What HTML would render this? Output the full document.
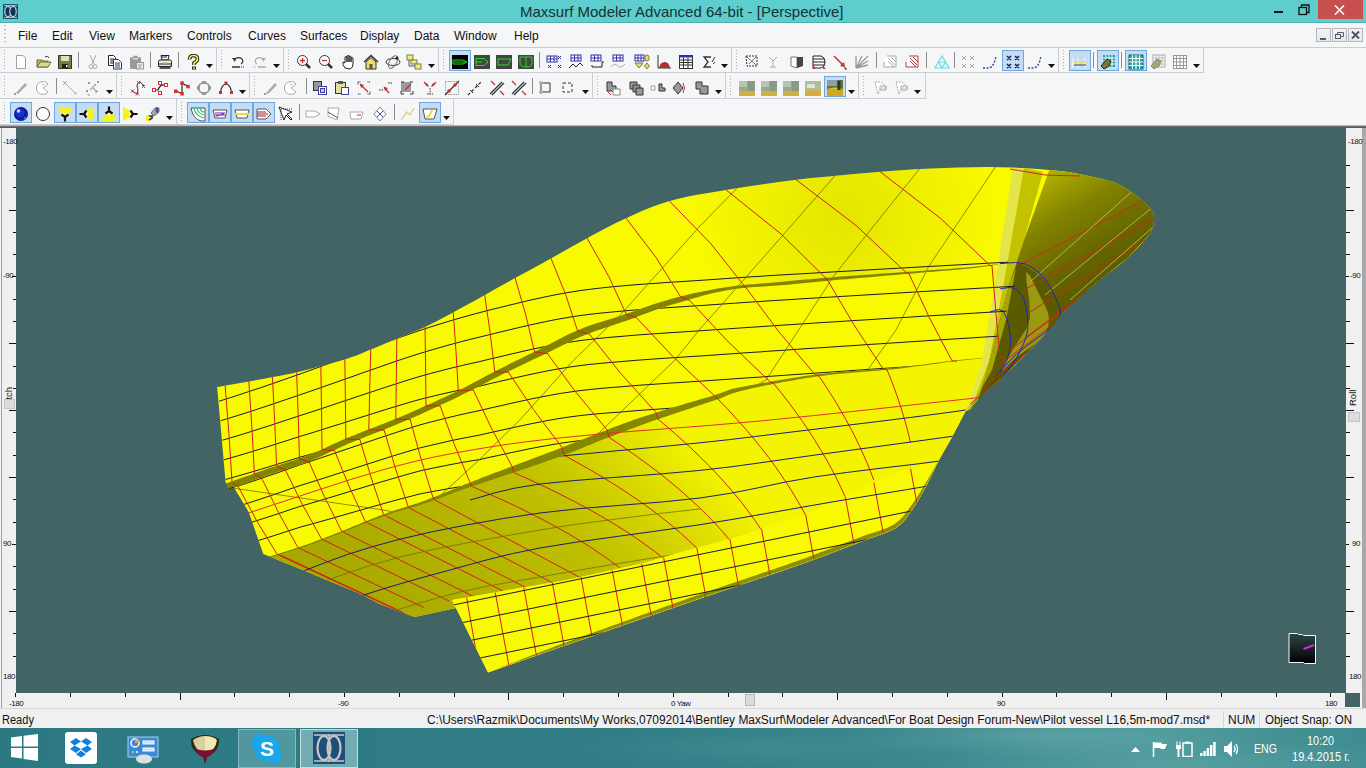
<!DOCTYPE html><html><head><meta charset="utf-8"><title>Maxsurf</title><style>
*{margin:0;padding:0;box-sizing:border-box}
html,body{width:1366px;height:768px;overflow:hidden;background:#f3f4f5;font-family:"Liberation Sans",sans-serif;}
.a{position:absolute}
.t{position:absolute;white-space:nowrap;line-height:1}
</style></head><body>
<div class="a" style="left:0;top:0;width:1366px;height:22px;background:#5dcdcd"></div>
<div class="a" style="left:0;top:22px;width:1366px;height:1px;background:#4fb0b0"></div>
<svg class="a" style="left:3px;top:4px" width="15" height="15" viewBox="0 0 15 15">
<rect x="0" y="0" width="15" height="15" fill="#1e4f73"/>
<ellipse cx="5" cy="7.5" rx="3.2" ry="5.2" fill="#0b3558" stroke="#c8d2d8" stroke-width="1.2"/>
<ellipse cx="10" cy="7.5" rx="3.2" ry="5.2" fill="#0b3558" stroke="#c8d2d8" stroke-width="1.2"/>
<path d="M1 1.5 L14 1.5 M1 13.5 L14 13.5" stroke="#c8d2d8" stroke-width="0.8"/>
</svg>
<div class="t" style="left:520px;top:4px;font-size:15px;color:#163232">Maxsurf Modeler Advanced 64-bit - [Perspective]</div>
<div class="a" style="left:1274px;top:11px;width:9px;height:2px;background:#111"></div>
<svg class="a" style="left:1298px;top:4px" width="12" height="12" viewBox="0 0 12 12"><rect x="1" y="3.5" width="7.5" height="7" fill="none" stroke="#111" stroke-width="1.3"/><path d="M3.5 3.5 V1 H11 V8.5 H8.5" fill="none" stroke="#111" stroke-width="1.3"/></svg>
<div class="a" style="left:1318px;top:0;width:45px;height:19px;background:#c7504e"></div>
<svg class="a" style="left:1334px;top:5px" width="11" height="10" viewBox="0 0 11 10"><path d="M1 0.5 L10 9.5 M10 0.5 L1 9.5" stroke="#fff" stroke-width="1.6"/></svg>
<div class="a" style="left:0;top:23px;width:1366px;height:24px;background:#f5f6f7"></div>
<div class="a" style="left:4px;top:25px;width:2px;height:20px;background:repeating-linear-gradient(#b5b7b9 0 1px,transparent 1px 4px)"></div>
<div class="t" style="left:18px;top:30px;font-size:12px;color:#111">File</div>
<div class="t" style="left:52px;top:30px;font-size:12px;color:#111">Edit</div>
<div class="t" style="left:89px;top:30px;font-size:12px;color:#111">View</div>
<div class="t" style="left:129px;top:30px;font-size:12px;color:#111">Markers</div>
<div class="t" style="left:187px;top:30px;font-size:12px;color:#111">Controls</div>
<div class="t" style="left:248px;top:30px;font-size:12px;color:#111">Curves</div>
<div class="t" style="left:300px;top:30px;font-size:12px;color:#111">Surfaces</div>
<div class="t" style="left:360px;top:30px;font-size:12px;color:#111">Display</div>
<div class="t" style="left:414px;top:30px;font-size:12px;color:#111">Data</div>
<div class="t" style="left:454px;top:30px;font-size:12px;color:#111">Window</div>
<div class="t" style="left:514px;top:30px;font-size:12px;color:#111">Help</div>
<div class="a" style="left:1316px;top:28px;width:15px;height:14px;border:1px solid #b4b8bc;background:linear-gradient(#f0f4f8,#e2e9f0)"></div>
<div class="a" style="left:1332px;top:28px;width:15px;height:14px;border:1px solid #b4b8bc;background:linear-gradient(#f0f4f8,#e2e9f0)"></div>
<div class="a" style="left:1348px;top:28px;width:15px;height:14px;border:1px solid #b4b8bc;background:linear-gradient(#f0f4f8,#e2e9f0)"></div>
<div class="a" style="left:1320px;top:38px;width:6px;height:2px;background:#555c66"></div>
<svg class="a" style="left:1335px;top:31px" width="9" height="9" viewBox="0 0 9 9"><rect x="0.5" y="3.5" width="5" height="4" fill="none" stroke="#555c66"/><path d="M2.5 3.5V1.5H8.5V5.5H5.5" fill="none" stroke="#555c66"/></svg>
<svg class="a" style="left:1351px;top:31px" width="9" height="8" viewBox="0 0 9 8"><path d="M1 0.5 L8 7.5 M8 0.5 L1 7.5" stroke="#4a525c" stroke-width="1.9"/></svg>
<div class="a" style="left:0;top:47px;width:1366px;height:1px;background:#c9cbcd"></div>
<div class="a" style="left:0;top:48px;width:1366px;height:77px;background:#f5f6f7"></div>
<div class="a" style="left:0px;top:72px;width:217px;height:1px;background:#cbcdd0"></div>
<div class="a" style="left:216px;top:47px;width:1px;height:26px;background:#cbcdd0"></div>
<div class="a" style="left:4px;top:50px;width:2px;height:21px;background:repeating-linear-gradient(#a9abae 0 1px,transparent 1px 3px);width:1px"></div>
<div class="a" style="left:217px;top:72px;width:67px;height:1px;background:#cbcdd0"></div>
<div class="a" style="left:283px;top:47px;width:1px;height:26px;background:#cbcdd0"></div>
<div class="a" style="left:221px;top:50px;width:2px;height:21px;background:repeating-linear-gradient(#a9abae 0 1px,transparent 1px 3px);width:1px"></div>
<div class="a" style="left:284px;top:72px;width:155px;height:1px;background:#cbcdd0"></div>
<div class="a" style="left:438px;top:47px;width:1px;height:26px;background:#cbcdd0"></div>
<div class="a" style="left:288px;top:50px;width:2px;height:21px;background:repeating-linear-gradient(#a9abae 0 1px,transparent 1px 3px);width:1px"></div>
<div class="a" style="left:439px;top:72px;width:293px;height:1px;background:#cbcdd0"></div>
<div class="a" style="left:731px;top:47px;width:1px;height:26px;background:#cbcdd0"></div>
<div class="a" style="left:443px;top:50px;width:2px;height:21px;background:repeating-linear-gradient(#a9abae 0 1px,transparent 1px 3px);width:1px"></div>
<div class="a" style="left:732px;top:72px;width:327px;height:1px;background:#cbcdd0"></div>
<div class="a" style="left:1058px;top:47px;width:1px;height:26px;background:#cbcdd0"></div>
<div class="a" style="left:736px;top:50px;width:2px;height:21px;background:repeating-linear-gradient(#a9abae 0 1px,transparent 1px 3px);width:1px"></div>
<div class="a" style="left:1059px;top:72px;width:145px;height:1px;background:#cbcdd0"></div>
<div class="a" style="left:1203px;top:47px;width:1px;height:26px;background:#cbcdd0"></div>
<div class="a" style="left:1063px;top:50px;width:2px;height:21px;background:repeating-linear-gradient(#a9abae 0 1px,transparent 1px 3px);width:1px"></div>
<div class="a" style="left:78px;top:52px;width:1px;height:16px;background:#8a8c8e"></div>
<div class="a" style="left:150px;top:52px;width:1px;height:16px;background:#8a8c8e"></div>
<div class="a" style="left:178px;top:52px;width:1px;height:16px;background:#8a8c8e"></div>
<div class="a" style="left:539px;top:52px;width:1px;height:16px;background:#8a8c8e"></div>
<div class="a" style="left:876px;top:52px;width:1px;height:16px;background:#8a8c8e"></div>
<div class="a" style="left:926px;top:52px;width:1px;height:16px;background:#8a8c8e"></div>
<div class="a" style="left:954px;top:52px;width:1px;height:16px;background:#8a8c8e"></div>
<div class="a" style="left:1093px;top:52px;width:1px;height:16px;background:#8a8c8e"></div>
<div class="a" style="left:1121px;top:52px;width:1px;height:16px;background:#8a8c8e"></div>
<div class="a" style="left:449px;top:50px;width:22px;height:21px;background:#c5dcf3;border:1px solid #6fa8e0"></div>
<div class="a" style="left:1002px;top:50px;width:22px;height:21px;background:#c5dcf3;border:1px solid #6fa8e0"></div>
<div class="a" style="left:1069px;top:50px;width:22px;height:21px;background:#c5dcf3;border:1px solid #6fa8e0"></div>
<div class="a" style="left:1097px;top:50px;width:22px;height:21px;background:#c5dcf3;border:1px solid #6fa8e0"></div>
<div class="a" style="left:1125px;top:50px;width:22px;height:21px;background:#c5dcf3;border:1px solid #6fa8e0"></div>
<svg class="a" style="left:206px;top:64px" width="7" height="4" viewBox="0 0 7 4"><path d="M0 0H7L3.5 4Z" fill="#111"/></svg>
<svg class="a" style="left:273px;top:64px" width="7" height="4" viewBox="0 0 7 4"><path d="M0 0H7L3.5 4Z" fill="#111"/></svg>
<svg class="a" style="left:428px;top:64px" width="7" height="4" viewBox="0 0 7 4"><path d="M0 0H7L3.5 4Z" fill="#111"/></svg>
<svg class="a" style="left:721px;top:64px" width="7" height="4" viewBox="0 0 7 4"><path d="M0 0H7L3.5 4Z" fill="#111"/></svg>
<svg class="a" style="left:1048px;top:64px" width="7" height="4" viewBox="0 0 7 4"><path d="M0 0H7L3.5 4Z" fill="#111"/></svg>
<svg class="a" style="left:1193px;top:64px" width="7" height="4" viewBox="0 0 7 4"><path d="M0 0H7L3.5 4Z" fill="#111"/></svg>
<div class="a" style="left:0px;top:98px;width:117px;height:1px;background:#cbcdd0"></div>
<div class="a" style="left:116px;top:73px;width:1px;height:26px;background:#cbcdd0"></div>
<div class="a" style="left:4px;top:76px;width:2px;height:21px;background:repeating-linear-gradient(#a9abae 0 1px,transparent 1px 3px);width:1px"></div>
<div class="a" style="left:117px;top:98px;width:133px;height:1px;background:#cbcdd0"></div>
<div class="a" style="left:249px;top:73px;width:1px;height:26px;background:#cbcdd0"></div>
<div class="a" style="left:121px;top:76px;width:2px;height:21px;background:repeating-linear-gradient(#a9abae 0 1px,transparent 1px 3px);width:1px"></div>
<div class="a" style="left:250px;top:98px;width:343px;height:1px;background:#cbcdd0"></div>
<div class="a" style="left:592px;top:73px;width:1px;height:26px;background:#cbcdd0"></div>
<div class="a" style="left:254px;top:76px;width:2px;height:21px;background:repeating-linear-gradient(#a9abae 0 1px,transparent 1px 3px);width:1px"></div>
<div class="a" style="left:593px;top:98px;width:133px;height:1px;background:#cbcdd0"></div>
<div class="a" style="left:725px;top:73px;width:1px;height:26px;background:#cbcdd0"></div>
<div class="a" style="left:597px;top:76px;width:2px;height:21px;background:repeating-linear-gradient(#a9abae 0 1px,transparent 1px 3px);width:1px"></div>
<div class="a" style="left:726px;top:98px;width:133px;height:1px;background:#cbcdd0"></div>
<div class="a" style="left:858px;top:73px;width:1px;height:26px;background:#cbcdd0"></div>
<div class="a" style="left:730px;top:76px;width:2px;height:21px;background:repeating-linear-gradient(#a9abae 0 1px,transparent 1px 3px);width:1px"></div>
<div class="a" style="left:859px;top:98px;width:67px;height:1px;background:#cbcdd0"></div>
<div class="a" style="left:925px;top:73px;width:1px;height:26px;background:#cbcdd0"></div>
<div class="a" style="left:863px;top:76px;width:2px;height:21px;background:repeating-linear-gradient(#a9abae 0 1px,transparent 1px 3px);width:1px"></div>
<div class="a" style="left:56px;top:78px;width:1px;height:16px;background:#8a8c8e"></div>
<div class="a" style="left:306px;top:78px;width:1px;height:16px;background:#8a8c8e"></div>
<div class="a" style="left:532px;top:78px;width:1px;height:16px;background:#8a8c8e"></div>
<div class="a" style="left:824px;top:76px;width:22px;height:21px;background:#c5dcf3;border:1px solid #6fa8e0"></div>
<svg class="a" style="left:106px;top:90px" width="7" height="4" viewBox="0 0 7 4"><path d="M0 0H7L3.5 4Z" fill="#111"/></svg>
<svg class="a" style="left:239px;top:90px" width="7" height="4" viewBox="0 0 7 4"><path d="M0 0H7L3.5 4Z" fill="#111"/></svg>
<svg class="a" style="left:582px;top:90px" width="7" height="4" viewBox="0 0 7 4"><path d="M0 0H7L3.5 4Z" fill="#111"/></svg>
<svg class="a" style="left:715px;top:90px" width="7" height="4" viewBox="0 0 7 4"><path d="M0 0H7L3.5 4Z" fill="#111"/></svg>
<svg class="a" style="left:848px;top:90px" width="7" height="4" viewBox="0 0 7 4"><path d="M0 0H7L3.5 4Z" fill="#111"/></svg>
<svg class="a" style="left:914px;top:90px" width="7" height="4" viewBox="0 0 7 4"><path d="M0 0H7L3.5 4Z" fill="#111"/></svg>
<div class="a" style="left:0px;top:124px;width:177px;height:1px;background:#cbcdd0"></div>
<div class="a" style="left:176px;top:99px;width:1px;height:26px;background:#cbcdd0"></div>
<div class="a" style="left:4px;top:102px;width:2px;height:21px;background:repeating-linear-gradient(#a9abae 0 1px,transparent 1px 3px);width:1px"></div>
<div class="a" style="left:177px;top:124px;width:277px;height:1px;background:#cbcdd0"></div>
<div class="a" style="left:453px;top:99px;width:1px;height:26px;background:#cbcdd0"></div>
<div class="a" style="left:181px;top:102px;width:2px;height:21px;background:repeating-linear-gradient(#a9abae 0 1px,transparent 1px 3px);width:1px"></div>
<div class="a" style="left:299px;top:104px;width:1px;height:16px;background:#8a8c8e"></div>
<div class="a" style="left:394px;top:104px;width:1px;height:16px;background:#8a8c8e"></div>
<div class="a" style="left:10px;top:102px;width:22px;height:21px;background:#c5dcf3;border:1px solid #6fa8e0"></div>
<div class="a" style="left:54px;top:102px;width:22px;height:21px;background:#c5dcf3;border:1px solid #6fa8e0"></div>
<div class="a" style="left:76px;top:102px;width:22px;height:21px;background:#c5dcf3;border:1px solid #6fa8e0"></div>
<div class="a" style="left:98px;top:102px;width:22px;height:21px;background:#c5dcf3;border:1px solid #6fa8e0"></div>
<div class="a" style="left:187px;top:102px;width:22px;height:21px;background:#c5dcf3;border:1px solid #6fa8e0"></div>
<div class="a" style="left:209px;top:102px;width:22px;height:21px;background:#c5dcf3;border:1px solid #6fa8e0"></div>
<div class="a" style="left:231px;top:102px;width:22px;height:21px;background:#c5dcf3;border:1px solid #6fa8e0"></div>
<div class="a" style="left:253px;top:102px;width:22px;height:21px;background:#c5dcf3;border:1px solid #6fa8e0"></div>
<div class="a" style="left:419px;top:102px;width:22px;height:21px;background:#c5dcf3;border:1px solid #6fa8e0"></div>
<svg class="a" style="left:166px;top:116px" width="7" height="4" viewBox="0 0 7 4"><path d="M0 0H7L3.5 4Z" fill="#111"/></svg>
<svg class="a" style="left:443px;top:116px" width="7" height="4" viewBox="0 0 7 4"><path d="M0 0H7L3.5 4Z" fill="#111"/></svg>
<svg class="a" style="left:13px;top:54px" width="16" height="16" viewBox="0 0 16 16"><path d="M3.5 1.5H10L12.5 4V14.5H3.5Z" fill="#fff" stroke="#a0a0a0"/></svg>
<svg class="a" style="left:36px;top:54px" width="16" height="16" viewBox="0 0 16 16"><path d="M1 6H6L7 7H12V13H1Z" fill="#c8c070" stroke="#6a6a30"/><path d="M1 13L4 8H15L12 13Z" fill="#dcd890" stroke="#6a6a30"/><path d="M9 3Q12 1 13 4" fill="none" stroke="#333"/></svg>
<svg class="a" style="left:57px;top:54px" width="16" height="16" viewBox="0 0 16 16"><rect x="1.5" y="1.5" width="13" height="13" fill="#7a7a40" stroke="#3a3a20"/><rect x="4" y="2" width="8" height="5" fill="#e0e0c0"/><rect x="5" y="10" width="6" height="4" fill="#222"/><rect x="9" y="11" width="1.5" height="2" fill="#fff"/></svg>
<svg class="a" style="left:85px;top:54px" width="16" height="16" viewBox="0 0 16 16"><path d="M5 1L9 10M11 1L7 10" stroke="#aaa" fill="none"/><circle cx="6" cy="12.5" r="2" fill="none" stroke="#aaa"/><circle cx="10" cy="12.5" r="2" fill="none" stroke="#aaa"/></svg>
<svg class="a" style="left:107px;top:54px" width="16" height="16" viewBox="0 0 16 16"><path d="M1.5 1.5H6.5L8.5 3.5V11.5H1.5Z" fill="#fff" stroke="#222"/><path d="M3 5H7M3 7H7M3 9H7" stroke="#222"/><path d="M6.5 5.5H11.5L14.5 8.5V15H6.5Z" fill="#fff" stroke="#34347a"/><path d="M8 9H13M8 11H13M8 13H13" stroke="#34347a"/></svg>
<svg class="a" style="left:129px;top:54px" width="16" height="16" viewBox="0 0 16 16"><rect x="1" y="3" width="11" height="12" rx="1.5" fill="#9a9a9a"/><rect x="4" y="1.5" width="5" height="3" fill="#9a9a9a" stroke="#f0f0f0" stroke-width="0.6"/><path d="M4 5H9" stroke="#e0e0e0"/><rect x="7.5" y="8.5" width="7" height="6.5" fill="#e8e8e8" stroke="#9a9a9a"/><path d="M9 11H13M9 13H12" stroke="#9a9a9a"/></svg>
<svg class="a" style="left:157px;top:54px" width="16" height="16" viewBox="0 0 16 16"><path d="M4 1.5H12L11 6H5Z" fill="#fff" stroke="#222"/><path d="M5 3H10" stroke="#222"/><path d="M1.5 7.5Q1.5 6 3 6H13Q14.5 6 14.5 7.5V12.5H1.5Z" fill="#e8e8e8" stroke="#222"/><path d="M1.5 10H14.5" stroke="#222"/><rect x="6" y="8.3" width="4" height="1.2" fill="#d0d040"/><path d="M2.5 14H13.5" stroke="#222" stroke-width="1.5"/></svg>
<svg class="a" style="left:185px;top:54px" width="16" height="16" viewBox="0 0 16 16"><path d="M4.5 5.5Q4.5 1.5 8.5 1.5Q12.5 1.5 12.5 5Q12.5 7.5 9 9V11" fill="none" stroke="#222" stroke-width="3.6"/><path d="M4.5 5.5Q4.5 1.5 8.5 1.5Q12.5 1.5 12.5 5Q12.5 7.5 9 9V11" fill="none" stroke="#f0f040" stroke-width="1.6"/><rect x="7" y="12.5" width="4" height="3" fill="#222"/><rect x="8" y="13.3" width="2" height="1.4" fill="#f0f040"/></svg>
<svg class="a" style="left:230px;top:54px" width="16" height="16" viewBox="0 0 16 16"><path d="M4 6Q8 2 12 5Q14 8 11 10" fill="none" stroke="#333" stroke-width="1.2"/><path d="M2 4L5 8L6 4Z" fill="#333"/><path d="M2 13H10" stroke="#333" stroke-width="1.5"/><path d="M11 13H15" stroke="#333" stroke-dasharray="1 1"/></svg>
<svg class="a" style="left:252px;top:54px" width="16" height="16" viewBox="0 0 16 16"><path d="M12 6Q8 2 4 5Q2 8 5 10" fill="none" stroke="#aaa" stroke-width="1.2"/><path d="M14 4L11 8L10 4Z" fill="#aaa"/><path d="M6 13H14" stroke="#aaa" stroke-width="1.5"/><path d="M1 13H5" stroke="#aaa" stroke-dasharray="1 1"/></svg>
<svg class="a" style="left:296px;top:54px" width="16" height="16" viewBox="0 0 16 16"><circle cx="6.5" cy="6.5" r="5" fill="#fff" stroke="#333"/><path d="M4 6.5H9M6.5 4V9" stroke="#c03030" stroke-width="1.3"/><path d="M10 10L14 14" stroke="#333" stroke-width="2.5"/></svg>
<svg class="a" style="left:318px;top:54px" width="16" height="16" viewBox="0 0 16 16"><circle cx="6.5" cy="6.5" r="5" fill="#fff" stroke="#333"/><path d="M4 6.5H9" stroke="#c03030" stroke-width="1.3"/><path d="M10 10L14 14" stroke="#333" stroke-width="2.5"/></svg>
<svg class="a" style="left:341px;top:54px" width="16" height="16" viewBox="0 0 16 16"><path d="M4 14Q1 10 2 8L4 9V3Q5 2 6 3V8V2Q7 1 8 2V8V2.5Q9 1.5 10 2.5V8V4Q11 3 12 4V10Q12 14 9 15Z" fill="#fff" stroke="#222"/></svg>
<svg class="a" style="left:363px;top:54px" width="16" height="16" viewBox="0 0 16 16"><path d="M1 8L8 1.5L15 8" fill="none" stroke="#333" stroke-width="1.5"/><path d="M3 8V15H13V8L8 3.5Z" fill="#f0e060" stroke="#333"/><rect x="6.5" y="10" width="3" height="5" fill="#555"/></svg>
<svg class="a" style="left:385px;top:54px" width="16" height="16" viewBox="0 0 16 16"><ellipse cx="8" cy="8" rx="7" ry="3.5" fill="none" stroke="#333"/><ellipse cx="8" cy="8" rx="3.5" ry="7" fill="none" stroke="#777" transform="rotate(30 8 8)"/><circle cx="12" cy="4" r="1.5" fill="#222"/></svg>
<svg class="a" style="left:406px;top:54px" width="16" height="16" viewBox="0 0 16 16"><rect x="1" y="1" width="6" height="5" fill="#f0f060" stroke="#777"/><rect x="5" y="6" width="6" height="4" fill="#f0f060" stroke="#777"/><rect x="9" y="10" width="6" height="5" fill="#f0f060" stroke="#777"/><path d="M3 6V12H9" fill="none" stroke="#555"/></svg>
<svg class="a" style="left:452px;top:54px" width="16" height="16" viewBox="0 0 16 16"><rect x="0" y="1" width="16" height="14" fill="#000"/><path d="M1 6H11L15 8L11 10H1Z" fill="none" stroke="#20e020"/><path d="M2 8H13" stroke="#20e020"/></svg>
<svg class="a" style="left:474px;top:54px" width="16" height="16" viewBox="0 0 16 16"><rect x="0" y="1" width="16" height="14" fill="#444"/><path d="M2 4.5H10L14 8L10 11.5H2Z" fill="none" stroke="#20e020"/><path d="M2 8H8" stroke="#20e020"/></svg>
<svg class="a" style="left:496px;top:54px" width="16" height="16" viewBox="0 0 16 16"><rect x="0" y="1" width="16" height="14" fill="#444"/><path d="M2 5H15L12 11H2Z" fill="none" stroke="#20e020"/></svg>
<svg class="a" style="left:518px;top:54px" width="16" height="16" viewBox="0 0 16 16"><rect x="0" y="1" width="16" height="14" fill="#444"/><path d="M2 3H14V9Q14 13 8 13Q2 13 2 9Z" fill="none" stroke="#20e020"/><path d="M8 3V13" stroke="#20e020"/></svg>
<svg class="a" style="left:546px;top:54px" width="16" height="16" viewBox="0 0 16 16"><rect x="1" y="2" width="10" height="6" fill="#fff" stroke="#3030a0"/><path d="M1 5H11M4.5 2V8M8 2V8" stroke="#3030a0"/><path d="M12 2L15 5M15 2L12 5M2 11L5 14M5 11L2 14M12 11L15 14M15 11L12 14" stroke="#303080"/></svg>
<svg class="a" style="left:568px;top:54px" width="16" height="16" viewBox="0 0 16 16"><rect x="3" y="1" width="10" height="6" fill="#fff" stroke="#3030a0"/><path d="M3 4H13M6.5 1V7M10 1V7" stroke="#3030a0"/><path d="M1 14L5 10L8 13L12 9L15 12" fill="none" stroke="#222"/></svg>
<svg class="a" style="left:590px;top:54px" width="16" height="16" viewBox="0 0 16 16"><rect x="1" y="1" width="10" height="6" fill="#fff" stroke="#3030a0"/><path d="M1 4H11M4.5 1V7M8 1V7" stroke="#3030a0"/><path d="M2 11V13H12V8H14" fill="none" stroke="#222"/></svg>
<svg class="a" style="left:610px;top:54px" width="16" height="16" viewBox="0 0 16 16"><rect x="3" y="1" width="10" height="6" fill="#fff" stroke="#3030a0"/><path d="M3 4H13M6.5 1V7M10 1V7" stroke="#3030a0"/><path d="M1 13Q5 8 8 12Q11 15 15 10" fill="none" stroke="#aaa"/></svg>
<svg class="a" style="left:634px;top:54px" width="16" height="16" viewBox="0 0 16 16"><rect x="1" y="1" width="9" height="6" fill="#fff" stroke="#3030a0"/><path d="M1 4H10M4 1V7M7 1V7" stroke="#3030a0"/><rect x="11" y="1" width="4" height="6" rx="2" fill="#f0e040" stroke="#777"/><path d="M1 9H9L5 14Z" fill="#f0e040" stroke="#777"/><path d="M13 9L15.5 12L13 15L10.5 12Z" fill="#f0e040" stroke="#777"/></svg>
<svg class="a" style="left:656px;top:54px" width="16" height="16" viewBox="0 0 16 16"><path d="M2 1V14H15" fill="none" stroke="#333"/><path d="M3 14Q4 8 9 8Q13 8 14 14Z" fill="#b03030"/></svg>
<svg class="a" style="left:678px;top:54px" width="16" height="16" viewBox="0 0 16 16"><rect x="1.5" y="1.5" width="13" height="13" fill="#fff" stroke="#333"/><rect x="1.5" y="1.5" width="13" height="2" fill="#3030c0"/><path d="M1.5 6H14.5M1.5 8.5H14.5M1.5 11H14.5M5.5 3.5V14.5M10 3.5V14.5" stroke="#333"/></svg>
<svg class="a" style="left:701px;top:54px" width="16" height="16" viewBox="0 0 16 16"><path d="M10 3H3L7 8L3 13H10" fill="none" stroke="#333" stroke-width="1.3"/><path d="M11 8L14 3M12 10L14 8" stroke="#333"/></svg>
<svg class="a" style="left:744px;top:54px" width="16" height="16" viewBox="0 0 16 16"><path d="M2 2H13V12H3Z" fill="none" stroke="#333" stroke-dasharray="2 1"/><path d="M3 3L12 11M5 10L12 3" stroke="#777"/></svg>
<svg class="a" style="left:767px;top:54px" width="16" height="16" viewBox="0 0 16 16"><path d="M2 3L6 7L10 3M6 7V13M3 13H9" fill="none" stroke="#aaa"/></svg>
<svg class="a" style="left:789px;top:54px" width="16" height="16" viewBox="0 0 16 16"><path d="M2 3H8V14L2 12Z" fill="#fff" stroke="#777"/><path d="M8 3H14V12L8 14Z" fill="#444"/></svg>
<svg class="a" style="left:811px;top:54px" width="16" height="16" viewBox="0 0 16 16"><path d="M2 2H10Q14 3 14 8Q14 13 10 14H2Z" fill="#fff" stroke="#222"/><path d="M2 5H13M2 8H14M2 11H13" stroke="#222"/><path d="M1 15L4 12V15ZM15 15L12 12V15Z" fill="#c03030"/></svg>
<svg class="a" style="left:832px;top:54px" width="16" height="16" viewBox="0 0 16 16"><path d="M2 2L12 12" stroke="#c03030" stroke-width="1.5"/><path d="M13 13L8 12L12 8Z" fill="#c03030"/><path d="M13 13V15H15" fill="none" stroke="#222"/></svg>
<svg class="a" style="left:854px;top:54px" width="16" height="16" viewBox="0 0 16 16"><path d="M2 14L14 2M2 14L14 7M2 14L14 11M2 14L8 2M2 14V2" stroke="#999" stroke-width="1.3"/></svg>
<svg class="a" style="left:882px;top:54px" width="16" height="16" viewBox="0 0 16 16"><path d="M5 2H14V13H2V8" fill="#fff" stroke="#aaa"/><path d="M6 4L13 11M6 7L12 13M9 3L14 8" stroke="#aaa"/></svg>
<svg class="a" style="left:904px;top:54px" width="16" height="16" viewBox="0 0 16 16"><path d="M5 2H14V13H2V8" fill="#fff" stroke="#b04040"/><path d="M6 4L13 11M6 7L12 13M9 3L14 8" stroke="#b04040"/></svg>
<svg class="a" style="left:934px;top:54px" width="16" height="16" viewBox="0 0 16 16"><path d="M8 2L15 14H1Z" fill="none" stroke="#60e0e0" stroke-width="1.2"/><path d="M4.5 8H11.5L8 14Z" fill="none" stroke="#60e0e0" stroke-width="1.2"/></svg>
<svg class="a" style="left:960px;top:54px" width="16" height="16" viewBox="0 0 16 16"><path d="M2 2L6 6M6 2L2 6M10 2L14 6M14 2L10 6M2 10L6 14M6 10L2 14M10 10L14 14M14 10L10 14" stroke="#aaa"/></svg>
<svg class="a" style="left:982px;top:54px" width="16" height="16" viewBox="0 0 16 16"><path d="M1 14H7Q12 13 14 2" fill="none" stroke="#3050a0" stroke-dasharray="2 1.5" stroke-width="1.4"/></svg>
<svg class="a" style="left:1005px;top:54px" width="16" height="16" viewBox="0 0 16 16"><path d="M2 2L6 6M6 2L2 6M10 2L14 6M14 2L10 6M2 10L6 14M6 10L2 14M10 10L14 14M14 10L10 14" stroke="#102060" stroke-width="1.5"/></svg>
<svg class="a" style="left:1027px;top:54px" width="16" height="16" viewBox="0 0 16 16"><path d="M1 14H7Q12 13 14 2" fill="none" stroke="#3050a0" stroke-dasharray="2 1.5" stroke-width="1.4"/></svg>
<svg class="a" style="left:1072px;top:54px" width="16" height="16" viewBox="0 0 16 16"><path d="M1 4V14M6 4V14M13 4V14" stroke="#fff"/><rect x="2" y="7" width="12" height="2" fill="#e0e080"/><rect x="2" y="10" width="12" height="2" fill="#9090a0"/></svg>
<svg class="a" style="left:1100px;top:54px" width="16" height="16" viewBox="0 0 16 16"><rect x="3" y="1" width="12" height="12" fill="#20a0a0"/><path d="M3 4H15M3 7H15M3 10H15M6 1V13M9 1V13M12 1V13" stroke="#fff"/><path d="M1 12L7 5L11 7L9 12L4 15Z" fill="#7a7a30" stroke="#222"/></svg>
<svg class="a" style="left:1128px;top:54px" width="16" height="16" viewBox="0 0 16 16"><rect x="1" y="1" width="14" height="14" fill="#20a0a0" stroke="#107070"/><path d="M1 4.5H15M1 8H15M1 11.5H15M4.5 1V15M8 1V15M11.5 1V15" stroke="#fff" stroke-width="1.2"/></svg>
<svg class="a" style="left:1150px;top:54px" width="16" height="16" viewBox="0 0 16 16"><rect x="3" y="1" width="12" height="12" fill="#fff" stroke="#aaa"/><path d="M3 4H15M3 7H15M3 10H15M6 1V13M9 1V13M12 1V13" stroke="#bbb"/><path d="M1 12L7 5L11 7L9 12L4 15Z" fill="#a9a570" stroke="#888"/></svg>
<svg class="a" style="left:1172px;top:54px" width="16" height="16" viewBox="0 0 16 16"><rect x="1" y="1" width="14" height="14" fill="#fff"/><path d="M1 1.5H15M1 4.5H15M1 8H15M1 11.5H15M1 14.5H15M1.5 1V15M4.5 1V15M8 1V15M11.5 1V15M14.5 1V15" stroke="#999"/></svg>
<svg class="a" style="left:13px;top:80px" width="16" height="16" viewBox="0 0 16 16"><path d="M3 13L12 3L14 5L5 14Z" fill="#aaa"/><path d="M1 15L3 13M1 13L3 15" stroke="#999"/></svg>
<svg class="a" style="left:35px;top:80px" width="16" height="16" viewBox="0 0 16 16"><path d="M13 4A6.5 6.5 0 1 0 13 12L8 8Z" fill="#fff" stroke="#aaa"/><circle cx="8" cy="4.5" r="0.8" fill="#aaa"/></svg>
<svg class="a" style="left:62px;top:80px" width="16" height="16" viewBox="0 0 16 16"><path d="M3 3L13 13M1 1L5 5M5 1L1 5" stroke="#aaa"/><path d="M12 14H14V12" fill="none" stroke="#aaa"/></svg>
<svg class="a" style="left:85px;top:80px" width="16" height="16" viewBox="0 0 16 16"><path d="M3 2L5 4M5 2L3 4M12 1L14 3M14 1L12 3M1 10L3 12M3 10L1 12" stroke="#999"/><path d="M5 10L11 4M8 8L12 12" stroke="#aaa" stroke-width="1.2"/><path d="M9 5L11 4L10 6Z" fill="#888"/><path d="M3 14V15H5M11 13V11H13" fill="none" stroke="#999"/></svg>
<svg class="a" style="left:130px;top:80px" width="16" height="16" viewBox="0 0 16 16"><path d="M2 11Q5 13 7 14Q9 10 7 6Q7 2 10 2Q13 4 14 6" fill="none" stroke="#333" stroke-width="1"/><path d="M1 9.5L4 12.5M4 9.5L1 12.5M6 12.5L9 15.5M9 12.5L6 15.5M7 1L10 4M10 1L7 4M12 5L15 8M15 5L12 8" stroke="#d03030"/></svg>
<svg class="a" style="left:152px;top:80px" width="16" height="16" viewBox="0 0 16 16"><path d="M3 10H6Q8 4 13 5" fill="none" stroke="#222" stroke-width="1.2"/><rect x="0.5" y="8.5" width="3" height="3" fill="#fff" stroke="#d03030"/><rect x="6.5" y="1.5" width="3" height="3" fill="#fff" stroke="#d03030"/><rect x="12.5" y="3.5" width="3" height="3" fill="#fff" stroke="#d03030"/><rect x="6.5" y="11.5" width="3" height="3" fill="#fff" stroke="#d03030"/></svg>
<svg class="a" style="left:174px;top:80px" width="16" height="16" viewBox="0 0 16 16"><path d="M1.5 11L8 13.5V3L14 6.5" fill="none" stroke="#222" stroke-width="1.2"/><rect x="0" y="9.5" width="3.5" height="3.5" fill="#d83030"/><rect x="6.3" y="12" width="3.5" height="3.5" fill="#d83030"/><rect x="6.3" y="1.3" width="3.5" height="3.5" fill="#d83030"/><rect x="12.3" y="4.8" width="3.5" height="3.5" fill="#d83030"/></svg>
<svg class="a" style="left:196px;top:80px" width="16" height="16" viewBox="0 0 16 16"><circle cx="8" cy="8" r="5.5" fill="none" stroke="#999" stroke-width="1.5"/><rect x="6" y="1" width="4" height="3" fill="#999"/><rect x="6" y="12" width="4" height="3" fill="#999"/><rect x="1" y="6" width="3" height="4" fill="#999"/><rect x="12" y="6" width="3" height="4" fill="#999"/></svg>
<svg class="a" style="left:218px;top:80px" width="16" height="16" viewBox="0 0 16 16"><path d="M2.5 13Q3 5 8 4Q13 5 13.5 13" fill="none" stroke="#222" stroke-width="1.2"/><rect x="6.5" y="1.5" width="3" height="3" fill="#d03030"/><rect x="1" y="11" width="3" height="3" fill="#d03030"/><rect x="12" y="11" width="3" height="3" fill="#d03030"/></svg>
<svg class="a" style="left:263px;top:80px" width="16" height="16" viewBox="0 0 16 16"><path d="M3 13L12 3L14 5L5 14Z" fill="#aaa"/><path d="M1 15L3 13M1 13L3 15" stroke="#999"/></svg>
<svg class="a" style="left:283px;top:80px" width="16" height="16" viewBox="0 0 16 16"><path d="M13 4A6.5 6.5 0 1 0 13 12L8 8Z" fill="#fff" stroke="#aaa"/><circle cx="8" cy="4.5" r="0.8" fill="#aaa"/></svg>
<svg class="a" style="left:312px;top:80px" width="16" height="16" viewBox="0 0 16 16"><rect x="1.5" y="1.5" width="8" height="9" fill="#999" stroke="#333"/><rect x="6.5" y="6.5" width="8" height="8" fill="#fff" stroke="#4040a0"/><rect x="8.5" y="8.5" width="4" height="4" fill="#ccd" stroke="#4040a0"/></svg>
<svg class="a" style="left:334px;top:80px" width="16" height="16" viewBox="0 0 16 16"><rect x="1.5" y="2.5" width="10" height="11" fill="#e0e0a0" stroke="#333"/><rect x="4" y="1" width="5" height="3" fill="#555"/><rect x="7.5" y="7.5" width="7" height="7" fill="#fff" stroke="#4040a0"/></svg>
<svg class="a" style="left:356px;top:80px" width="16" height="16" viewBox="0 0 16 16"><path d="M2 2H5M2 2V5M14 14H11M14 14V11M2 14H5M14 2H11" stroke="#333" stroke-dasharray="1.5 1"/><path d="M4 4L12 12" stroke="#c03030" stroke-width="1.2"/><path d="M4 4L8 5L5 8Z" fill="#c03030"/></svg>
<svg class="a" style="left:378px;top:80px" width="16" height="16" viewBox="0 0 16 16"><path d="M1 10H5M10 3H14" stroke="#333" stroke-dasharray="1.5 1"/><path d="M6 7L11 13" stroke="#c03030" stroke-width="1.2"/><path d="M6 7L10 8L7 11Z" fill="#c03030"/></svg>
<svg class="a" style="left:399px;top:80px" width="16" height="16" viewBox="0 0 16 16"><rect x="2" y="2" width="10" height="10" fill="#999"/><path d="M2 2H5M14 14H11M14 14V11M2 14H5M2 14V11M14 2H11" stroke="#333"/><path d="M12 4L6 10" stroke="#c03030" stroke-width="1.3"/></svg>
<svg class="a" style="left:422px;top:80px" width="16" height="16" viewBox="0 0 16 16"><path d="M2 2L6 6M14 2L10 6" stroke="#c03030" stroke-width="1.3"/><path d="M7 7L5 3L3 5ZM9 7L11 3L13 5Z" fill="#c03030"/><path d="M8 8V14M5 14H11" stroke="#333" stroke-dasharray="1.5 1"/></svg>
<svg class="a" style="left:444px;top:80px" width="16" height="16" viewBox="0 0 16 16"><rect x="1.5" y="1.5" width="13" height="13" fill="none" stroke="#999" stroke-dasharray="1.5 1"/><path d="M1 15L15 1" stroke="#333" stroke-width="1.3"/><circle cx="5" cy="11" r="1.8" fill="#d03030"/><circle cx="11" cy="5" r="1.8" fill="#d03030"/></svg>
<svg class="a" style="left:467px;top:80px" width="16" height="16" viewBox="0 0 16 16"><path d="M1 15L15 1" stroke="#333" stroke-width="1.3" stroke-dasharray="3 2"/><path d="M3 10L6 13M9 4L12 7" stroke="#333"/></svg>
<svg class="a" style="left:489px;top:80px" width="16" height="16" viewBox="0 0 16 16"><path d="M1 14L13 2M3 15L15 3" stroke="#333" stroke-width="1.3"/><path d="M2 1L6 5M15 15L11 11" stroke="#c03030" stroke-width="1.2"/></svg>
<svg class="a" style="left:511px;top:80px" width="16" height="16" viewBox="0 0 16 16"><path d="M1 14L13 2M3 15L15 3" stroke="#333" stroke-width="1.3"/><path d="M1 1L5 5M11 11L15 15" stroke="#c03030" stroke-width="1.2"/></svg>
<svg class="a" style="left:538px;top:80px" width="16" height="16" viewBox="0 0 16 16"><path d="M3 3H12V12H3Z" fill="none" stroke="#333"/><circle cx="3" cy="3" r="2" fill="#aaa"/><circle cx="3" cy="12" r="2" fill="#aaa"/></svg>
<svg class="a" style="left:560px;top:80px" width="16" height="16" viewBox="0 0 16 16"><path d="M3 3H12V12H3Z" fill="none" stroke="#333" stroke-dasharray="3 2"/></svg>
<svg class="a" style="left:605px;top:80px" width="16" height="16" viewBox="0 0 16 16"><path d="M2 2H7V6H11V11H2Z" fill="#999" stroke="#333"/><path d="M8 9H15V15H8Z" fill="#fff" stroke="#888"/><path d="M2 11L6 15" stroke="#c03030"/></svg>
<svg class="a" style="left:628px;top:80px" width="16" height="16" viewBox="0 0 16 16"><path d="M2 2H9V9H2Z" fill="#999" stroke="#333"/><path d="M5 5H12V12H5Z" fill="#999" stroke="#333"/><path d="M8 8H15V15H8Z" fill="#999" stroke="#333"/></svg>
<svg class="a" style="left:650px;top:80px" width="16" height="16" viewBox="0 0 16 16"><path d="M1 6H5V10H1Z" fill="#fff" stroke="#999"/><path d="M9 4H12V8H15V11H9Z" fill="#999" stroke="#333"/></svg>
<svg class="a" style="left:671px;top:80px" width="16" height="16" viewBox="0 0 16 16"><path d="M7 2L12 8L7 14L2 8Z" fill="#999" stroke="#333"/><path d="M12 3Q15 8 12 13" fill="none" stroke="#c03030"/></svg>
<svg class="a" style="left:694px;top:80px" width="16" height="16" viewBox="0 0 16 16"><path d="M2 2H8V6H14V14H6V9H2Z" fill="#999" stroke="#333"/></svg>
<svg class="a" style="left:739px;top:80px" width="16" height="16" viewBox="0 0 16 16"><rect x="0" y="1" width="16" height="15" fill="#9aa890"/><rect x="0" y="11" width="16" height="5" fill="#d0b040"/><rect x="9" y="1" width="7" height="10" fill="#8a9a88"/><rect x="0" y="1" width="8" height="6" fill="#b8c4b0"/></svg>
<svg class="a" style="left:761px;top:80px" width="16" height="16" viewBox="0 0 16 16"><rect x="0" y="1" width="16" height="15" fill="#9aa890"/><rect x="0" y="11" width="16" height="5" fill="#d0b040"/><rect x="9" y="1" width="7" height="10" fill="#8a9a88"/><rect x="0" y="1" width="8" height="6" fill="#b8c4b0"/></svg>
<svg class="a" style="left:783px;top:80px" width="16" height="16" viewBox="0 0 16 16"><rect x="0" y="1" width="16" height="15" fill="#9aa890"/><rect x="0" y="11" width="16" height="5" fill="#d0b040"/><rect x="9" y="1" width="7" height="10" fill="#8a9a88"/><rect x="0" y="1" width="8" height="6" fill="#b8c4b0"/></svg>
<svg class="a" style="left:805px;top:80px" width="16" height="16" viewBox="0 0 16 16"><rect x="0" y="1" width="16" height="15" fill="#b0bca0"/><rect x="0" y="10" width="16" height="6" fill="#d0b040"/><rect x="2" y="4" width="8" height="4" fill="#e0e4d8"/></svg>
<svg class="a" style="left:827px;top:80px" width="16" height="16" viewBox="0 0 16 16"><rect x="0" y="0" width="16" height="16" fill="#607050"/><rect x="0" y="9" width="16" height="7" fill="#d0a820"/><path d="M0 9Q8 6 16 9" fill="#e0c030"/><path d="M12 1V10" stroke="#2a3a10" stroke-width="3"/><rect x="0" y="0" width="10" height="6" fill="#8aa0a8"/></svg>
<svg class="a" style="left:872px;top:80px" width="16" height="16" viewBox="0 0 16 16"><path d="M3 2H9L15 8H9L6 14Z" fill="#fff" stroke="#aaa" stroke-dasharray="2 1"/><path d="M8 6H14V10H8Z" fill="none" stroke="#aaa"/></svg>
<svg class="a" style="left:893px;top:80px" width="16" height="16" viewBox="0 0 16 16"><path d="M3 2H9L15 8H9L6 14Z" fill="#fff" stroke="#aaa" stroke-dasharray="2 1"/><path d="M8 6H14V10H8Z" fill="none" stroke="#aaa"/></svg>
<svg class="a" style="left:13px;top:106px" width="16" height="16" viewBox="0 0 16 16"><circle cx="8" cy="8" r="7" fill="#0c1a9c"/><circle cx="7" cy="7" r="4.5" fill="#1a30d0"/><circle cx="5.5" cy="5" r="1.8" fill="#c8d4ff"/><path d="M11 13L13 11" stroke="#30a0a0" stroke-width="1.5"/></svg>
<svg class="a" style="left:35px;top:106px" width="16" height="16" viewBox="0 0 16 16"><circle cx="8" cy="8" r="6.5" fill="#fff" stroke="#333"/></svg>
<svg class="a" style="left:57px;top:106px" width="16" height="16" viewBox="0 0 16 16"><path d="M1 1H15L11.5 8.5H4.5Z" fill="#f4f418"/><ellipse cx="8" cy="8" rx="3.5" ry="1.2" fill="#fafa90"/><path d="M4.5 8.5L8 11L11.5 8.5M8 10.5V15.5" fill="none" stroke="#111" stroke-width="2.2"/></svg>
<svg class="a" style="left:79px;top:106px" width="16" height="16" viewBox="0 0 16 16"><g transform="rotate(90 8 8)"><path d="M1 1H15L11.5 8.5H4.5Z" fill="#f4f418"/><ellipse cx="8" cy="8" rx="3.5" ry="1.2" fill="#fafa90"/><path d="M4.5 8.5L8 11L11.5 8.5M8 10.5V15.5" fill="none" stroke="#111" stroke-width="2.2"/></g></svg>
<svg class="a" style="left:101px;top:106px" width="16" height="16" viewBox="0 0 16 16"><g transform="rotate(180 8 8)"><path d="M1 1H15L11.5 8.5H4.5Z" fill="#f4f418"/><ellipse cx="8" cy="8" rx="3.5" ry="1.2" fill="#fafa90"/><path d="M4.5 8.5L8 11L11.5 8.5M8 10.5V15.5" fill="none" stroke="#111" stroke-width="2.2"/></g></svg>
<svg class="a" style="left:122px;top:106px" width="16" height="16" viewBox="0 0 16 16"><g transform="rotate(-90 8 8)"><path d="M1 1H15L11.5 8.5H4.5Z" fill="#f4f418"/><ellipse cx="8" cy="8" rx="3.5" ry="1.2" fill="#fafa90"/><path d="M4.5 8.5L8 11L11.5 8.5M8 10.5V15.5" fill="none" stroke="#111" stroke-width="2.2"/></g></svg>
<svg class="a" style="left:144px;top:106px" width="16" height="16" viewBox="0 0 16 16"><path d="M7 7L11 2H15V6L10 10Z" fill="#a8a8a8" stroke="#555" stroke-width="0.8"/><path d="M13 1.5V6.5" stroke="#4848a0" stroke-width="2.5"/><path d="M2 9Q1 12 2 15H5V9Z" fill="#f4f418"/><path d="M5 10L9 10M5 14L8 12M8 10V13" stroke="#333" stroke-width="1.6"/></svg>
<svg class="a" style="left:190px;top:106px" width="16" height="16" viewBox="0 0 16 16"><path d="M1 2H15V15H11Q3 13 1 2Z" fill="#fff" stroke="#555"/><path d="M4 2Q5 10 14 12M7 2Q8 8 14 9M10 2Q11 6 14 6" fill="none" stroke="#30c070" stroke-width="1.2"/></svg>
<svg class="a" style="left:212px;top:106px" width="16" height="16" viewBox="0 0 16 16"><path d="M1 4H15L13 12H3Z" fill="#fff" stroke="#555"/><path d="M3 7H12Q10 9 4 10M3 9H13" fill="none" stroke="#8020c0" stroke-width="1.2"/></svg>
<svg class="a" style="left:234px;top:106px" width="16" height="16" viewBox="0 0 16 16"><path d="M1 4H15L13 12H3Z" fill="#fff" stroke="#555"/><path d="M1 8H15" stroke="#e0e040" stroke-width="2"/></svg>
<svg class="a" style="left:256px;top:106px" width="16" height="16" viewBox="0 0 16 16"><path d="M1 3H10L15 8L10 13H1Z" fill="#fff" stroke="#555"/><path d="M1 6H10M1 8H12M1 10H10" stroke="#a02040" stroke-width="1.2"/></svg>
<svg class="a" style="left:278px;top:106px" width="16" height="16" viewBox="0 0 16 16"><path d="M1 1L6 14L8 9L13 14L14 13L9 8L14 6Z" fill="#fff" stroke="#222"/><path d="M3 3L15 3M3 3L3 15" stroke="#444" stroke-dasharray="1 1"/></svg>
<svg class="a" style="left:305px;top:106px" width="16" height="16" viewBox="0 0 16 16"><path d="M1 5H10L15 8L10 11H1Z" fill="#fff" stroke="#aaa"/></svg>
<svg class="a" style="left:326px;top:106px" width="16" height="16" viewBox="0 0 16 16"><path d="M2 2H13L11 14L2 10Z" fill="#fff" stroke="#aaa"/><path d="M2 6L12 12" stroke="#555"/></svg>
<svg class="a" style="left:349px;top:106px" width="16" height="16" viewBox="0 0 16 16"><path d="M1 6H14L12 13H2Z" fill="#fff" stroke="#aaa"/><path d="M8 9H12" stroke="#c03030"/></svg>
<svg class="a" style="left:372px;top:106px" width="16" height="16" viewBox="0 0 16 16"><path d="M2 8L8 1L14 8L8 15Z" fill="#fff" stroke="#888"/><path d="M5 5L11 11M5 11L11 5" stroke="#4050a0"/></svg>
<svg class="a" style="left:400px;top:106px" width="16" height="16" viewBox="0 0 16 16"><path d="M1 14L7 6L10 9L14 2" fill="none" stroke="#ddd080" stroke-width="1.3"/></svg>
<svg class="a" style="left:422px;top:106px" width="16" height="16" viewBox="0 0 16 16"><path d="M1 3H15L12 13H3Z" fill="#fff" stroke="#555"/><path d="M4 12Q8 10 10 4" fill="none" stroke="#e0e040" stroke-width="2"/></svg>
<div class="a" style="left:0;top:125px;width:1366px;height:3px;background:linear-gradient(#b4b6b8 0 1px,#6e7070 1px 2px,#4e5e5e 2px 3px)"></div>
<div class="a" style="left:16px;top:128px;width:1330px;height:565px;background:#436464"></div>
<svg class="a" style="left:0;top:0" width="1366" height="768" viewBox="0 0 1366 768">
<defs>
<linearGradient id="gBot" gradientUnits="userSpaceOnUse" x1="393" y1="633" x2="652" y2="399">
<stop offset="0" stop-color="#a8a800"/><stop offset="0.21" stop-color="#b0b000"/><stop offset="0.59" stop-color="#c0c000"/><stop offset="0.73" stop-color="#d0d000"/><stop offset="0.83" stop-color="#dcdc00"/><stop offset="1" stop-color="#f4f400"/></linearGradient>
<linearGradient id="gBow" gradientUnits="userSpaceOnUse" x1="1045" y1="180" x2="1115" y2="295">
<stop offset="0" stop-color="#acac00"/><stop offset="0.3" stop-color="#828200"/><stop offset="0.65" stop-color="#666600"/><stop offset="1" stop-color="#555500"/></linearGradient>
<radialGradient id="gTopShade" gradientUnits="userSpaceOnUse" cx="845" cy="215" r="150">
<stop offset="0" stop-color="#b0b000" stop-opacity="0.28"/><stop offset="1" stop-color="#b0b000" stop-opacity="0"/></radialGradient>
<clipPath id="cTop"><path d="M218.0 387.0 L225.9 385.6 L237.4 383.5 L250.4 381.2 L262.9 378.9 L273.0 377.0 L279.9 375.7 L285.0 374.8 L289.3 374.0 L293.9 373.0 L300.0 371.5 L308.1 369.5 L317.5 367.0 L327.4 364.4 L336.8 361.8 L344.8 359.4 L351.2 357.3 L356.5 355.4 L361.3 353.5 L365.9 351.6 L370.8 349.6 L376.0 347.5 L381.1 345.3 L386.3 343.0 L391.6 340.8 L396.9 338.5 L402.4 336.3 L408.0 334.1 L413.7 331.8 L419.4 329.5 L425.0 327.0 L430.6 324.3 L436.1 321.5 L441.7 318.5 L447.3 315.5 L453.0 312.4 L458.8 309.3 L464.8 306.0 L470.8 302.7 L476.9 299.4 L483.0 296.0 L489.2 292.6 L495.3 289.1 L501.6 285.6 L508.0 282.0 L514.6 278.3 L521.5 274.5 L528.6 270.7 L535.9 266.7 L543.2 262.8 L550.4 258.8 L557.5 254.8 L564.6 250.8 L571.7 246.8 L578.9 242.7 L586.2 238.7 L593.7 234.6 L601.3 230.6 L609.0 226.5 L616.8 222.5 L624.9 218.7 L633.1 215.0 L641.4 211.3 L649.8 207.8 L658.6 204.5 L667.9 201.5 L677.4 199.0 L687.0 196.8 L697.1 194.8 L708.0 192.9 L720.0 190.9 L733.3 188.7 L747.8 186.4 L763.1 184.2 L778.8 182.0 L794.6 180.0 L811.1 178.1 L828.6 176.4 L846.1 174.7 L862.8 173.3 L877.7 172.0 L890.2 171.0 L900.8 170.2 L910.7 169.5 L920.7 169.0 L932.0 168.5 L944.9 168.0 L958.6 167.6 L972.7 167.2 L986.7 167.1 L1000.0 167.2 L1012.8 167.6 L1012.0 240.0 L1008.0 263.0 L1005.0 263.0 L999.9 263.7 L994.8 264.4 L989.7 265.0 L984.6 265.6 L979.4 266.2 L974.3 266.7 L969.2 267.2 L964.1 267.7 L958.9 268.1 L953.8 268.5 L948.7 268.9 L943.5 269.2 L938.4 269.6 L933.2 270.0 L928.1 270.3 L923.0 270.7 L917.8 271.1 L912.7 271.5 L907.6 271.8 L902.4 272.2 L897.3 272.5 L892.1 272.9 L887.0 273.3 L881.9 273.6 L876.7 274.0 L871.6 274.4 L866.4 274.7 L861.3 275.1 L856.2 275.5 L851.0 275.8 L845.9 276.2 L840.8 276.6 L835.6 277.0 L830.5 277.4 L825.4 277.8 L820.2 278.2 L815.1 278.7 L810.0 279.2 L804.8 279.6 L799.7 280.1 L794.6 280.6 L789.4 281.1 L784.3 281.6 L779.2 282.1 L774.1 282.5 L768.9 282.9 L763.8 283.3 L758.7 283.7 L753.5 284.2 L748.4 284.6 L743.3 285.1 L738.1 285.6 L733.0 286.2 L727.9 286.9 L722.8 287.7 L717.7 288.5 L712.7 289.4 L707.6 290.4 L702.6 291.4 L697.5 292.5 L692.5 293.6 L687.5 294.8 L682.5 296.1 L677.5 297.3 L672.5 298.6 L667.5 300.0 L662.6 301.4 L657.7 303.0 L652.8 304.6 L647.9 306.3 L643.1 308.0 L638.2 309.7 L633.4 311.4 L628.5 313.1 L623.6 314.8 L618.7 316.3 L613.8 317.9 L608.9 319.4 L604.0 321.0 L599.1 322.5 L594.2 324.1 L589.3 325.8 L584.4 327.6 L579.6 329.4 L574.9 331.4 L570.2 333.5 L565.6 335.8 L561.0 338.2 L556.4 340.6 L551.9 343.0 L547.3 345.3 L542.7 347.6 L538.1 349.9 L533.5 352.2 L528.8 354.5 L524.2 356.7 L519.6 359.0 L515.0 361.3 L510.4 363.6 L505.8 365.9 L501.2 368.2 L496.6 370.5 L492.0 372.9 L487.4 375.3 L482.9 377.7 L478.4 380.2 L473.8 382.6 L469.3 385.0 L464.7 387.4 L460.1 389.7 L455.5 392.0 L450.8 394.2 L446.2 396.4 L441.5 398.6 L436.8 400.7 L432.1 402.9 L427.4 405.0 L422.7 407.1 L418.0 409.2 L413.3 411.3 L408.6 413.4 L403.9 415.4 L399.1 417.4 L394.3 419.3 L389.6 421.2 L384.8 423.2 L380.0 425.0 L375.2 426.9 L370.4 428.8 L365.6 430.6 L360.8 432.5 L356.0 434.4 L351.2 436.3 L346.4 438.2 L341.7 440.3 L337.0 442.4 L332.3 444.5 L327.6 446.7 L323.0 448.9 L318.3 451.0 L313.5 453.0 L308.8 455.0 L304.0 456.8 L299.1 458.5 L294.2 460.2 L289.3 461.8 L284.4 463.3 L279.5 464.9 L274.6 466.5 L269.7 468.1 L264.8 469.8 L260.0 471.4 L255.1 473.1 L250.3 474.9 L245.4 476.6 L240.6 478.3 L235.7 480.0 L230.9 481.8 L226.0 483.5Z"/></clipPath>
<clipPath id="cMid"><path d="M228.2 489.6 L233.0 487.9 L237.9 486.1 L242.7 484.3 L247.5 482.6 L252.4 480.8 L257.2 479.1 L262.1 477.4 L266.9 475.6 L271.7 474.0 L276.5 472.3 L281.4 470.7 L286.3 469.1 L291.2 467.5 L296.1 465.9 L301.1 464.2 L306.0 462.4 L311.0 460.6 L315.9 458.5 L320.7 456.4 L325.5 454.2 L330.1 452.1 L334.8 449.9 L339.4 447.7 L344.1 445.7 L348.7 443.6 L353.4 441.7 L358.1 439.8 L362.9 437.9 L367.7 436.0 L372.5 434.1 L377.3 432.3 L382.1 430.4 L386.9 428.5 L391.7 426.6 L396.5 424.6 L401.3 422.6 L406.1 420.6 L410.8 418.6 L415.6 416.5 L420.3 414.4 L425.0 412.2 L429.7 410.1 L434.4 408.0 L439.1 405.8 L443.8 403.6 L448.5 401.4 L453.2 399.2 L457.9 396.9 L462.5 394.6 L467.2 392.3 L471.9 390.0 L476.5 387.7 L481.1 385.3 L485.7 382.9 L490.2 380.5 L494.7 378.2 L499.3 375.9 L503.9 373.6 L508.5 371.4 L513.2 369.2 L517.8 367.0 L522.4 364.8 L527.1 362.5 L531.7 360.3 L536.4 358.1 L541.0 355.9 L545.7 353.7 L550.4 351.4 L555.0 349.1 L559.7 346.7 L564.2 344.4 L568.8 342.2 L573.2 340.0 L577.8 338.0 L582.4 336.1 L587.0 334.3 L591.7 332.5 L596.4 330.8 L601.2 329.2 L606.0 327.5 L610.9 325.9 L615.8 324.3 L620.7 322.6 L625.6 321.0 L630.6 319.2 L635.5 317.4 L640.3 315.6 L645.1 313.8 L650.0 312.0 L654.7 310.3 L659.5 308.6 L664.3 307.0 L669.1 305.5 L674.0 304.0 L678.9 302.7 L683.8 301.3 L688.7 299.8 L693.6 298.3 L698.5 296.9 L703.4 295.5 L708.4 294.2 L713.3 292.9 L718.3 291.9 L723.3 290.9 L728.4 290.0 L733.4 289.2 L738.4 288.4 L743.5 287.9 L748.6 287.5 L753.8 287.1 L758.9 286.8 L764.0 286.4 L769.2 286.0 L774.3 285.7 L779.5 285.3 L784.6 284.9 L789.8 284.4 L794.9 283.9 L800.0 283.4 L805.1 282.9 L810.3 282.4 L815.4 281.9 L820.5 281.5 L825.6 281.0 L830.7 280.6 L835.9 280.1 L841.0 279.6 L846.1 279.2 L851.2 278.7 L856.4 278.3 L861.5 277.8 L866.6 277.4 L871.8 276.9 L876.9 276.5 L882.0 276.0 L887.2 275.6 L892.3 275.2 L897.4 274.7 L902.6 274.3 L907.7 273.8 L912.8 273.4 L918.0 273.0 L923.1 272.5 L928.2 272.1 L933.4 271.7 L938.5 271.2 L943.6 270.8 L948.8 270.4 L953.9 269.9 L959.0 269.4 L964.2 268.9 L969.3 268.4 L974.4 267.9 L979.6 267.3 L984.7 266.6 L989.8 265.9 L994.9 265.1 L1000.0 264.2 L1005.0 263.3 L1008.0 263.0 L1022.0 265.0 L1000.0 330.0 L990.0 357.0 L990.0 357.0 L985.3 357.5 L980.6 358.0 L975.9 358.4 L971.2 358.9 L966.5 359.3 L961.7 359.8 L957.0 360.2 L952.3 360.7 L947.6 361.3 L942.9 361.9 L938.2 362.5 L933.5 363.1 L928.9 363.8 L924.2 364.4 L919.5 365.0 L914.8 365.6 L910.1 366.2 L905.4 366.7 L900.7 367.2 L896.0 367.7 L891.3 368.1 L886.5 368.5 L881.8 368.9 L877.1 369.3 L872.4 369.6 L867.7 369.9 L862.9 370.3 L858.2 370.6 L853.5 370.9 L848.8 371.3 L844.1 371.7 L839.3 372.0 L834.6 372.5 L829.9 373.0 L825.2 373.5 L820.5 373.9 L815.8 374.5 L811.1 375.2 L806.4 375.8 L801.8 376.5 L797.1 377.2 L792.4 377.9 L787.7 378.7 L783.1 379.5 L778.4 380.2 L773.7 381.0 L769.1 381.9 L764.4 382.7 L759.7 383.5 L755.1 384.4 L750.4 385.3 L745.8 386.2 L741.2 387.1 L736.5 388.1 L731.9 389.1 L727.4 390.5 L723.0 392.3 L718.5 393.8 L714.0 395.3 L709.5 396.7 L705.0 398.0 L700.4 399.3 L695.9 400.7 L691.3 402.0 L686.8 403.3 L682.3 404.7 L677.7 406.0 L673.2 407.4 L668.7 408.7 L664.1 410.1 L659.6 411.5 L655.1 412.9 L650.6 414.4 L646.1 415.8 L641.6 417.3 L637.1 418.7 L632.6 420.3 L628.2 421.9 L623.7 423.5 L619.3 425.2 L614.8 426.8 L610.4 428.5 L606.0 430.2 L601.6 431.9 L597.2 433.6 L592.8 435.4 L588.4 437.1 L584.0 438.9 L579.6 440.6 L575.2 442.3 L570.8 444.0 L566.3 445.8 L561.9 447.5 L557.5 449.2 L553.1 450.9 L548.7 452.5 L544.2 454.2 L539.8 455.9 L535.4 457.5 L531.0 459.2 L526.5 460.9 L522.1 462.5 L517.7 464.2 L513.2 465.9 L508.8 467.5 L504.4 469.2 L500.0 470.9 L495.5 472.6 L491.1 474.2 L486.7 475.9 L482.3 477.6 L477.9 479.4 L473.5 481.1 L469.1 482.9 L464.7 484.6 L460.3 486.4 L455.9 488.2 L451.5 490.0 L447.2 491.8 L442.8 493.6 L438.4 495.4 L434.0 497.1 L429.6 498.8 L425.2 500.5 L420.7 502.1 L416.2 503.7 L411.7 505.1 L407.2 506.5 L402.7 507.9 L398.2 509.3 L393.7 510.8 L389.2 512.3 L384.7 513.9 L380.3 515.6 L375.9 517.3 L371.5 519.1 L367.1 520.8 L362.7 522.6 L358.3 524.4 L354.0 526.1 L349.6 527.9 L345.2 529.7 L340.8 531.5 L336.4 533.2 L332.0 535.0 L327.6 536.7 L323.2 538.4 L318.8 540.1 L314.3 541.8 L309.9 543.4 L305.4 544.9 L300.9 546.5 L296.5 548.0 L292.0 549.4 L287.5 550.9 L282.9 552.3 L278.4 553.7 L273.9 555.2 L269.4 556.6 L263.3 554.0 L248.7 512.0 L232.3 484.7Z"/></clipPath>
<clipPath id="cBot"><path d="M269.9 558.0 L274.4 556.6 L278.9 555.2 L283.4 553.8 L287.9 552.4 L292.5 551.0 L297.0 549.5 L301.5 548.0 L306.0 546.5 L310.4 544.9 L314.9 543.4 L319.4 541.7 L323.8 540.0 L328.2 538.3 L332.7 536.6 L337.1 534.9 L341.5 533.1 L345.9 531.4 L350.3 529.6 L354.7 527.9 L359.0 526.1 L363.4 524.3 L367.8 522.6 L372.2 520.9 L376.6 519.2 L381.0 517.5 L385.4 515.8 L389.9 514.3 L394.3 512.8 L398.8 511.4 L403.4 510.2 L407.9 508.9 L412.5 507.6 L417.1 506.3 L421.7 504.8 L426.2 503.3 L430.7 501.7 L435.1 500.0 L439.6 498.4 L444.0 496.7 L448.5 495.0 L452.9 493.3 L457.4 491.7 L461.8 490.1 L466.3 488.5 L470.7 487.0 L475.2 485.4 L479.7 483.9 L484.1 482.4 L488.6 480.9 L493.1 479.4 L497.6 478.0 L502.1 476.5 L506.6 475.0 L511.1 473.6 L515.6 472.1 L520.0 470.4 L524.5 469.0 L529.0 467.5 L533.5 465.9 L538.0 464.5 L542.5 462.9 L546.9 461.3 L551.4 459.8 L555.9 458.2 L560.4 456.6 L564.8 454.9 L569.2 453.2 L573.6 451.4 L578.0 449.7 L582.5 447.9 L586.9 446.1 L591.2 444.4 L595.6 442.6 L600.0 440.8 L604.4 439.1 L608.8 437.4 L613.2 435.7 L617.5 433.9 L621.9 432.3 L626.3 430.7 L630.7 429.0 L635.2 427.4 L639.5 425.8 L643.8 424.2 L648.3 422.6 L652.8 421.0 L657.2 419.5 L661.6 417.9 L666.0 416.4 L670.5 414.9 L675.0 413.4 L679.5 411.9 L684.0 410.4 L688.5 409.0 L693.0 407.5 L697.5 406.0 L702.0 404.6 L706.5 403.1 L711.0 401.6 L715.5 400.1 L720.1 398.4 L724.6 396.6 L728.9 394.7 L733.0 393.2 L737.4 392.0 L741.9 390.8 L746.5 389.7 L751.1 388.6 L755.7 387.5 L760.3 386.5 L764.9 385.6 L769.6 384.7 L774.2 383.8 L778.8 382.9 L783.5 382.1 L788.1 381.3 L792.8 380.4 L797.4 379.6 L802.1 378.8 L806.7 378.0 L811.4 377.3 L816.1 376.5 L820.7 375.9 L825.4 375.4 L830.1 374.8 L834.8 374.3 L839.5 373.8 L844.2 373.4 L848.9 373.0 L853.6 372.6 L858.3 372.2 L863.0 371.8 L867.8 371.4 L872.5 371.0 L877.2 370.7 L881.9 370.2 L886.6 369.8 L891.4 369.4 L896.1 368.9 L900.8 368.4 L905.5 367.8 L910.2 367.2 L914.9 366.6 L919.6 366.0 L924.3 365.4 L929.0 364.7 L933.7 364.0 L938.4 363.4 L943.0 362.7 L947.7 362.1 L952.4 361.5 L957.1 361.0 L961.8 360.4 L966.5 360.0 L971.2 359.5 L975.9 359.0 L980.6 358.4 L985.3 357.8 L990.0 357.2 L990.0 357.0 L960.0 422.0 L951.0 439.0 L938.5 461.0 L905.0 470.0 L870.0 484.0 L835.0 501.6 L802.0 515.7 L770.0 526.0 L737.0 537.0 L672.3 554.6 L644.0 563.0 L566.9 580.0 L520.0 588.0 L452.0 600.0 L456.0 608.0 L414.6 617.0 L380.0 604.0 L358.4 593.0 L306.9 571.8 L269.4 556.6Z"/></clipPath>
<clipPath id="cSkeg"><path d="M452.0 600.0 L520.0 588.0 L566.9 580.0 L644.0 563.0 L672.3 554.6 L737.0 537.0 L770.0 526.0 L802.0 515.7 L835.0 501.6 L870.0 484.0 L905.0 470.0 L938.5 461.0 L925.0 488.0 L912.5 509.0 L896.0 528.0 L862.5 541.0 L800.0 564.6 L700.0 598.5 L561.8 646.6 L488.0 672.5Z"/></clipPath>
<clipPath id="cBot2"><path d="M269.9 558.0 L274.4 556.6 L278.9 555.2 L283.4 553.8 L287.9 552.4 L292.5 551.0 L297.0 549.5 L301.5 548.0 L306.0 546.5 L310.4 544.9 L314.9 543.4 L319.4 541.7 L323.8 540.0 L328.2 538.3 L332.7 536.6 L337.1 534.9 L341.5 533.1 L345.9 531.4 L350.3 529.6 L354.7 527.9 L359.0 526.1 L363.4 524.3 L367.8 522.6 L372.2 520.9 L376.6 519.2 L381.0 517.5 L385.4 515.8 L389.9 514.3 L394.3 512.8 L398.8 511.4 L403.4 510.2 L407.9 508.9 L412.5 507.6 L417.1 506.3 L421.7 504.8 L426.2 503.3 L430.7 501.7 L435.1 500.0 L439.6 498.4 L444.0 496.7 L448.5 495.0 L452.9 493.3 L457.4 491.7 L461.8 490.1 L466.3 488.5 L470.7 487.0 L475.2 485.4 L479.7 483.9 L484.1 482.4 L488.6 480.9 L493.1 479.4 L497.6 478.0 L502.1 476.5 L506.6 475.0 L511.1 473.6 L515.6 472.1 L520.0 470.4 L524.5 469.0 L529.0 467.5 L533.5 465.9 L538.0 464.5 L542.5 462.9 L546.9 461.3 L551.4 459.8 L555.9 458.2 L560.4 456.6 L564.8 454.9 L569.2 453.2 L573.6 451.4 L578.0 449.7 L582.5 447.9 L586.9 446.1 L591.2 444.4 L595.6 442.6 L600.0 440.8 L604.4 439.1 L608.8 437.4 L613.2 435.7 L617.5 433.9 L621.9 432.3 L626.3 430.7 L630.7 429.0 L635.2 427.4 L639.5 425.8 L643.8 424.2 L648.3 422.6 L652.8 421.0 L657.2 419.5 L661.6 417.9 L666.0 416.4 L670.5 414.9 L675.0 413.4 L679.5 411.9 L684.0 410.4 L688.5 409.0 L693.0 407.5 L697.5 406.0 L702.0 404.6 L706.5 403.1 L711.0 401.6 L715.5 400.1 L720.1 398.4 L724.6 396.6 L728.9 394.7 L733.0 393.2 L737.4 392.0 L741.9 390.8 L746.5 389.7 L751.1 388.6 L755.7 387.5 L760.3 386.5 L764.9 385.6 L769.6 384.7 L774.2 383.8 L778.8 382.9 L783.5 382.1 L788.1 381.3 L792.8 380.4 L797.4 379.6 L802.1 378.8 L806.7 378.0 L811.4 377.3 L816.1 376.5 L820.7 375.9 L825.4 375.4 L830.1 374.8 L834.8 374.3 L839.5 373.8 L844.2 373.4 L848.9 373.0 L853.6 372.6 L858.3 372.2 L863.0 371.8 L867.8 371.4 L872.5 371.0 L877.2 370.7 L881.9 370.2 L886.6 369.8 L891.4 369.4 L896.1 368.9 L900.8 368.4 L905.5 367.8 L910.2 367.2 L914.9 366.6 L919.6 366.0 L924.3 365.4 L929.0 364.7 L933.7 364.0 L938.4 363.4 L943.0 362.7 L947.7 362.1 L952.4 361.5 L957.1 361.0 L961.8 360.4 L966.5 360.0 L971.2 359.5 L975.9 359.0 L980.6 358.4 L985.3 357.8 L990.0 357.2 L990.0 357.0 L960.0 422.0 L951.0 439.0 L938.5 461.0 L905.0 470.0 L870.0 484.0 L835.0 501.6 L802.0 515.7 L770.0 526.0 L737.0 537.0 L672.3 554.6 L644.0 563.0 L566.9 580.0 L520.0 588.0 L452.0 600.0 L456.0 608.0 L414.6 617.0 L380.0 604.0 L358.4 593.0 L306.9 571.8 L269.4 556.6Z"/><path d="M650.0 561.0 L672.3 554.6 L737.0 537.0 L770.0 526.0 L802.0 515.7 L835.0 501.6 L870.0 484.0 L905.0 470.0 L938.5 461.0 L925.0 488.0 L912.5 509.0 L896.0 528.0 L862.5 541.0 L800.0 564.6 L700.0 598.5 L650.0 615.5Z"/></clipPath>
<clipPath id="cAll"><path d="M218.0 387.0 L225.9 385.6 L237.4 383.5 L250.4 381.2 L262.9 378.9 L273.0 377.0 L279.9 375.7 L285.0 374.8 L289.3 374.0 L293.9 373.0 L300.0 371.5 L308.1 369.5 L317.5 367.0 L327.4 364.4 L336.8 361.8 L344.8 359.4 L351.2 357.3 L356.5 355.4 L361.3 353.5 L365.9 351.6 L370.8 349.6 L376.0 347.5 L381.1 345.3 L386.3 343.0 L391.6 340.8 L396.9 338.5 L402.4 336.3 L408.0 334.1 L413.7 331.8 L419.4 329.5 L425.0 327.0 L430.6 324.3 L436.1 321.5 L441.7 318.5 L447.3 315.5 L453.0 312.4 L458.8 309.3 L464.8 306.0 L470.8 302.7 L476.9 299.4 L483.0 296.0 L489.2 292.6 L495.3 289.1 L501.6 285.6 L508.0 282.0 L514.6 278.3 L521.5 274.5 L528.6 270.7 L535.9 266.7 L543.2 262.8 L550.4 258.8 L557.5 254.8 L564.6 250.8 L571.7 246.8 L578.9 242.7 L586.2 238.7 L593.7 234.6 L601.3 230.6 L609.0 226.5 L616.8 222.5 L624.9 218.7 L633.1 215.0 L641.4 211.3 L649.8 207.8 L658.6 204.5 L667.9 201.5 L677.4 199.0 L687.0 196.8 L697.1 194.8 L708.0 192.9 L720.0 190.9 L733.3 188.7 L747.8 186.4 L763.1 184.2 L778.8 182.0 L794.6 180.0 L811.1 178.1 L828.6 176.4 L846.1 174.7 L862.8 173.3 L877.7 172.0 L890.2 171.0 L900.8 170.2 L910.7 169.5 L920.7 169.0 L932.0 168.5 L944.9 168.0 L958.6 167.6 L972.7 167.2 L986.7 167.1 L1000.0 167.2 L1012.8 167.6 L1025.4 168.2 L1037.7 168.9 L1049.3 169.9 L1060.0 171.0 L1069.9 172.3 L1079.2 173.9 L1087.6 175.7 L1095.3 177.4 L1102.0 179.0 L1107.4 180.4 L1111.7 181.6 L1115.2 182.8 L1118.5 184.2 L1122.0 186.0 L1125.8 188.2 L1129.6 190.7 L1133.3 193.4 L1136.8 196.1 L1140.0 198.8 L1142.9 201.3 L1145.7 203.8 L1148.2 206.3 L1150.3 208.7 L1152.0 211.0 L1153.1 213.1 L1153.8 215.1 L1154.0 217.0 L1154.1 218.9 L1154.0 221.0 L1153.7 223.5 L1153.0 226.2 L1152.2 229.0 L1151.5 231.3 L1151.0 233.0 L1147.9 236.4 L1143.7 241.2 L1138.6 246.8 L1133.1 252.6 L1127.5 258.0 L1121.7 263.0 L1115.5 267.9 L1108.9 272.8 L1102.4 277.8 L1096.0 283.0 L1089.8 288.3 L1083.6 293.6 L1077.4 299.2 L1071.2 304.9 L1065.0 311.0 L1058.8 317.6 L1052.6 324.7 L1046.4 332.0 L1040.2 339.1 L1034.0 346.0 L1027.7 352.5 L1021.4 358.8 L1015.1 365.0 L1008.8 371.1 L1002.5 377.0 L995.9 383.0 L988.9 388.9 L982.1 394.7 L976.0 400.2 L971.0 405.0 L967.5 409.1 L965.0 412.6 L963.3 415.7 L961.7 418.8 L960.0 422.0 L958.1 425.3 L956.4 428.6 L954.8 431.8 L953.0 435.3 L951.0 439.0 L948.7 443.0 L946.3 447.2 L943.7 451.6 L941.1 456.2 L938.5 461.0 L935.8 466.2 L933.1 471.7 L930.4 477.4 L927.7 482.9 L925.0 488.0 L922.5 492.6 L920.1 496.9 L917.7 501.0 L915.2 505.0 L912.5 509.0 L909.7 513.0 L907.0 517.0 L904.0 520.9 L900.5 524.6 L896.0 528.0 L890.9 530.8 L885.2 533.1 L878.8 535.3 L871.3 537.8 L862.5 541.0 L852.5 544.9 L841.4 549.2 L829.1 553.9 L815.4 559.1 L800.0 564.6 L783.0 570.5 L764.5 576.7 L744.6 583.4 L723.0 590.6 L700.0 598.5 L673.8 607.6 L644.4 617.8 L614.3 628.3 L585.9 638.2 L561.8 646.6 L541.7 653.6 L524.1 659.8 L509.1 665.1 L497.0 669.3 L488.0 672.5 L456.0 608.0 L414.6 617.0 L380.0 604.0 L358.4 593.0 L306.9 571.8 L269.4 556.6 L263.3 554.0 L248.7 512.0 L232.3 484.7 L233.7 482.0 L225.7 483.2 L217.1 386.4Z"/></clipPath>
</defs>
<path d="M218.0 387.0 L225.9 385.6 L237.4 383.5 L250.4 381.2 L262.9 378.9 L273.0 377.0 L279.9 375.7 L285.0 374.8 L289.3 374.0 L293.9 373.0 L300.0 371.5 L308.1 369.5 L317.5 367.0 L327.4 364.4 L336.8 361.8 L344.8 359.4 L351.2 357.3 L356.5 355.4 L361.3 353.5 L365.9 351.6 L370.8 349.6 L376.0 347.5 L381.1 345.3 L386.3 343.0 L391.6 340.8 L396.9 338.5 L402.4 336.3 L408.0 334.1 L413.7 331.8 L419.4 329.5 L425.0 327.0 L430.6 324.3 L436.1 321.5 L441.7 318.5 L447.3 315.5 L453.0 312.4 L458.8 309.3 L464.8 306.0 L470.8 302.7 L476.9 299.4 L483.0 296.0 L489.2 292.6 L495.3 289.1 L501.6 285.6 L508.0 282.0 L514.6 278.3 L521.5 274.5 L528.6 270.7 L535.9 266.7 L543.2 262.8 L550.4 258.8 L557.5 254.8 L564.6 250.8 L571.7 246.8 L578.9 242.7 L586.2 238.7 L593.7 234.6 L601.3 230.6 L609.0 226.5 L616.8 222.5 L624.9 218.7 L633.1 215.0 L641.4 211.3 L649.8 207.8 L658.6 204.5 L667.9 201.5 L677.4 199.0 L687.0 196.8 L697.1 194.8 L708.0 192.9 L720.0 190.9 L733.3 188.7 L747.8 186.4 L763.1 184.2 L778.8 182.0 L794.6 180.0 L811.1 178.1 L828.6 176.4 L846.1 174.7 L862.8 173.3 L877.7 172.0 L890.2 171.0 L900.8 170.2 L910.7 169.5 L920.7 169.0 L932.0 168.5 L944.9 168.0 L958.6 167.6 L972.7 167.2 L986.7 167.1 L1000.0 167.2 L1012.8 167.6 L1025.4 168.2 L1037.7 168.9 L1049.3 169.9 L1060.0 171.0 L1069.9 172.3 L1079.2 173.9 L1087.6 175.7 L1095.3 177.4 L1102.0 179.0 L1107.4 180.4 L1111.7 181.6 L1115.2 182.8 L1118.5 184.2 L1122.0 186.0 L1125.8 188.2 L1129.6 190.7 L1133.3 193.4 L1136.8 196.1 L1140.0 198.8 L1142.9 201.3 L1145.7 203.8 L1148.2 206.3 L1150.3 208.7 L1152.0 211.0 L1153.1 213.1 L1153.8 215.1 L1154.0 217.0 L1154.1 218.9 L1154.0 221.0 L1153.7 223.5 L1153.0 226.2 L1152.2 229.0 L1151.5 231.3 L1151.0 233.0 L1147.9 236.4 L1143.7 241.2 L1138.6 246.8 L1133.1 252.6 L1127.5 258.0 L1121.7 263.0 L1115.5 267.9 L1108.9 272.8 L1102.4 277.8 L1096.0 283.0 L1089.8 288.3 L1083.6 293.6 L1077.4 299.2 L1071.2 304.9 L1065.0 311.0 L1058.8 317.6 L1052.6 324.7 L1046.4 332.0 L1040.2 339.1 L1034.0 346.0 L1027.7 352.5 L1021.4 358.8 L1015.1 365.0 L1008.8 371.1 L1002.5 377.0 L995.9 383.0 L988.9 388.9 L982.1 394.7 L976.0 400.2 L971.0 405.0 L967.5 409.1 L965.0 412.6 L963.3 415.7 L961.7 418.8 L960.0 422.0 L958.1 425.3 L956.4 428.6 L954.8 431.8 L953.0 435.3 L951.0 439.0 L948.7 443.0 L946.3 447.2 L943.7 451.6 L941.1 456.2 L938.5 461.0 L935.8 466.2 L933.1 471.7 L930.4 477.4 L927.7 482.9 L925.0 488.0 L922.5 492.6 L920.1 496.9 L917.7 501.0 L915.2 505.0 L912.5 509.0 L909.7 513.0 L907.0 517.0 L904.0 520.9 L900.5 524.6 L896.0 528.0 L890.9 530.8 L885.2 533.1 L878.8 535.3 L871.3 537.8 L862.5 541.0 L852.5 544.9 L841.4 549.2 L829.1 553.9 L815.4 559.1 L800.0 564.6 L783.0 570.5 L764.5 576.7 L744.6 583.4 L723.0 590.6 L700.0 598.5 L673.8 607.6 L644.4 617.8 L614.3 628.3 L585.9 638.2 L561.8 646.6 L541.7 653.6 L524.1 659.8 L509.1 665.1 L497.0 669.3 L488.0 672.5 L456.0 608.0 L414.6 617.0 L380.0 604.0 L358.4 593.0 L306.9 571.8 L269.4 556.6 L263.3 554.0 L248.7 512.0 L232.3 484.7 L233.7 482.0 L225.7 483.2 L217.1 386.4Z" fill="#f9f900"/>
<path d="M269.9 558.0 L274.4 556.6 L278.9 555.2 L283.4 553.8 L287.9 552.4 L292.5 551.0 L297.0 549.5 L301.5 548.0 L306.0 546.5 L310.4 544.9 L314.9 543.4 L319.4 541.7 L323.8 540.0 L328.2 538.3 L332.7 536.6 L337.1 534.9 L341.5 533.1 L345.9 531.4 L350.3 529.6 L354.7 527.9 L359.0 526.1 L363.4 524.3 L367.8 522.6 L372.2 520.9 L376.6 519.2 L381.0 517.5 L385.4 515.8 L389.9 514.3 L394.3 512.8 L398.8 511.4 L403.4 510.2 L407.9 508.9 L412.5 507.6 L417.1 506.3 L421.7 504.8 L426.2 503.3 L430.7 501.7 L435.1 500.0 L439.6 498.4 L444.0 496.7 L448.5 495.0 L452.9 493.3 L457.4 491.7 L461.8 490.1 L466.3 488.5 L470.7 487.0 L475.2 485.4 L479.7 483.9 L484.1 482.4 L488.6 480.9 L493.1 479.4 L497.6 478.0 L502.1 476.5 L506.6 475.0 L511.1 473.6 L515.6 472.1 L520.0 470.4 L524.5 469.0 L529.0 467.5 L533.5 465.9 L538.0 464.5 L542.5 462.9 L546.9 461.3 L551.4 459.8 L555.9 458.2 L560.4 456.6 L564.8 454.9 L569.2 453.2 L573.6 451.4 L578.0 449.7 L582.5 447.9 L586.9 446.1 L591.2 444.4 L595.6 442.6 L600.0 440.8 L604.4 439.1 L608.8 437.4 L613.2 435.7 L617.5 433.9 L621.9 432.3 L626.3 430.7 L630.7 429.0 L635.2 427.4 L639.5 425.8 L643.8 424.2 L648.3 422.6 L652.8 421.0 L657.2 419.5 L661.6 417.9 L666.0 416.4 L670.5 414.9 L675.0 413.4 L679.5 411.9 L684.0 410.4 L688.5 409.0 L693.0 407.5 L697.5 406.0 L702.0 404.6 L706.5 403.1 L711.0 401.6 L715.5 400.1 L720.1 398.4 L724.6 396.6 L728.9 394.7 L733.0 393.2 L737.4 392.0 L741.9 390.8 L746.5 389.7 L751.1 388.6 L755.7 387.5 L760.3 386.5 L764.9 385.6 L769.6 384.7 L774.2 383.8 L778.8 382.9 L783.5 382.1 L788.1 381.3 L792.8 380.4 L797.4 379.6 L802.1 378.8 L806.7 378.0 L811.4 377.3 L816.1 376.5 L820.7 375.9 L825.4 375.4 L830.1 374.8 L834.8 374.3 L839.5 373.8 L844.2 373.4 L848.9 373.0 L853.6 372.6 L858.3 372.2 L863.0 371.8 L867.8 371.4 L872.5 371.0 L877.2 370.7 L881.9 370.2 L886.6 369.8 L891.4 369.4 L896.1 368.9 L900.8 368.4 L905.5 367.8 L910.2 367.2 L914.9 366.6 L919.6 366.0 L924.3 365.4 L929.0 364.7 L933.7 364.0 L938.4 363.4 L943.0 362.7 L947.7 362.1 L952.4 361.5 L957.1 361.0 L961.8 360.4 L966.5 360.0 L971.2 359.5 L975.9 359.0 L980.6 358.4 L985.3 357.8 L990.0 357.2 L990.0 357.0 L960.0 422.0 L951.0 439.0 L938.5 461.0 L905.0 470.0 L870.0 484.0 L835.0 501.6 L802.0 515.7 L770.0 526.0 L737.0 537.0 L672.3 554.6 L644.0 563.0 L566.9 580.0 L520.0 588.0 L452.0 600.0 L456.0 608.0 L414.6 617.0 L380.0 604.0 L358.4 593.0 L306.9 571.8 L269.4 556.6Z" fill="url(#gBot)"/>
<path d="M218.0 387.0 L225.9 385.6 L237.4 383.5 L250.4 381.2 L262.9 378.9 L273.0 377.0 L279.9 375.7 L285.0 374.8 L289.3 374.0 L293.9 373.0 L300.0 371.5 L308.1 369.5 L317.5 367.0 L327.4 364.4 L336.8 361.8 L344.8 359.4 L351.2 357.3 L356.5 355.4 L361.3 353.5 L365.9 351.6 L370.8 349.6 L376.0 347.5 L381.1 345.3 L386.3 343.0 L391.6 340.8 L396.9 338.5 L402.4 336.3 L408.0 334.1 L413.7 331.8 L419.4 329.5 L425.0 327.0 L430.6 324.3 L436.1 321.5 L441.7 318.5 L447.3 315.5 L453.0 312.4 L458.8 309.3 L464.8 306.0 L470.8 302.7 L476.9 299.4 L483.0 296.0 L489.2 292.6 L495.3 289.1 L501.6 285.6 L508.0 282.0 L514.6 278.3 L521.5 274.5 L528.6 270.7 L535.9 266.7 L543.2 262.8 L550.4 258.8 L557.5 254.8 L564.6 250.8 L571.7 246.8 L578.9 242.7 L586.2 238.7 L593.7 234.6 L601.3 230.6 L609.0 226.5 L616.8 222.5 L624.9 218.7 L633.1 215.0 L641.4 211.3 L649.8 207.8 L658.6 204.5 L667.9 201.5 L677.4 199.0 L687.0 196.8 L697.1 194.8 L708.0 192.9 L720.0 190.9 L733.3 188.7 L747.8 186.4 L763.1 184.2 L778.8 182.0 L794.6 180.0 L811.1 178.1 L828.6 176.4 L846.1 174.7 L862.8 173.3 L877.7 172.0 L890.2 171.0 L900.8 170.2 L910.7 169.5 L920.7 169.0 L932.0 168.5 L944.9 168.0 L958.6 167.6 L972.7 167.2 L986.7 167.1 L1000.0 167.2 L1012.8 167.6 L1012.0 240.0 L1008.0 263.0 L1005.0 263.0 L999.9 263.7 L994.8 264.4 L989.7 265.0 L984.6 265.6 L979.4 266.2 L974.3 266.7 L969.2 267.2 L964.1 267.7 L958.9 268.1 L953.8 268.5 L948.7 268.9 L943.5 269.2 L938.4 269.6 L933.2 270.0 L928.1 270.3 L923.0 270.7 L917.8 271.1 L912.7 271.5 L907.6 271.8 L902.4 272.2 L897.3 272.5 L892.1 272.9 L887.0 273.3 L881.9 273.6 L876.7 274.0 L871.6 274.4 L866.4 274.7 L861.3 275.1 L856.2 275.5 L851.0 275.8 L845.9 276.2 L840.8 276.6 L835.6 277.0 L830.5 277.4 L825.4 277.8 L820.2 278.2 L815.1 278.7 L810.0 279.2 L804.8 279.6 L799.7 280.1 L794.6 280.6 L789.4 281.1 L784.3 281.6 L779.2 282.1 L774.1 282.5 L768.9 282.9 L763.8 283.3 L758.7 283.7 L753.5 284.2 L748.4 284.6 L743.3 285.1 L738.1 285.6 L733.0 286.2 L727.9 286.9 L722.8 287.7 L717.7 288.5 L712.7 289.4 L707.6 290.4 L702.6 291.4 L697.5 292.5 L692.5 293.6 L687.5 294.8 L682.5 296.1 L677.5 297.3 L672.5 298.6 L667.5 300.0 L662.6 301.4 L657.7 303.0 L652.8 304.6 L647.9 306.3 L643.1 308.0 L638.2 309.7 L633.4 311.4 L628.5 313.1 L623.6 314.8 L618.7 316.3 L613.8 317.9 L608.9 319.4 L604.0 321.0 L599.1 322.5 L594.2 324.1 L589.3 325.8 L584.4 327.6 L579.6 329.4 L574.9 331.4 L570.2 333.5 L565.6 335.8 L561.0 338.2 L556.4 340.6 L551.9 343.0 L547.3 345.3 L542.7 347.6 L538.1 349.9 L533.5 352.2 L528.8 354.5 L524.2 356.7 L519.6 359.0 L515.0 361.3 L510.4 363.6 L505.8 365.9 L501.2 368.2 L496.6 370.5 L492.0 372.9 L487.4 375.3 L482.9 377.7 L478.4 380.2 L473.8 382.6 L469.3 385.0 L464.7 387.4 L460.1 389.7 L455.5 392.0 L450.8 394.2 L446.2 396.4 L441.5 398.6 L436.8 400.7 L432.1 402.9 L427.4 405.0 L422.7 407.1 L418.0 409.2 L413.3 411.3 L408.6 413.4 L403.9 415.4 L399.1 417.4 L394.3 419.3 L389.6 421.2 L384.8 423.2 L380.0 425.0 L375.2 426.9 L370.4 428.8 L365.6 430.6 L360.8 432.5 L356.0 434.4 L351.2 436.3 L346.4 438.2 L341.7 440.3 L337.0 442.4 L332.3 444.5 L327.6 446.7 L323.0 448.9 L318.3 451.0 L313.5 453.0 L308.8 455.0 L304.0 456.8 L299.1 458.5 L294.2 460.2 L289.3 461.8 L284.4 463.3 L279.5 464.9 L274.6 466.5 L269.7 468.1 L264.8 469.8 L260.0 471.4 L255.1 473.1 L250.3 474.9 L245.4 476.6 L240.6 478.3 L235.7 480.0 L230.9 481.8 L226.0 483.5Z" fill="url(#gTopShade)"/>
<path d="M269.4 556.6 L273.9 555.2 L278.4 553.7 L282.9 552.3 L287.5 550.9 L292.0 549.4 L296.5 548.0 L300.9 546.5 L305.4 544.9 L309.9 543.4 L314.3 541.8 L318.8 540.1 L323.2 538.4 L327.6 536.7 L332.0 535.0 L336.4 533.2 L340.8 531.5 L345.2 529.7 L349.6 527.9 L354.0 526.1 L358.3 524.4 L362.7 522.6 L367.1 520.8 L371.5 519.1 L375.9 517.3 L380.3 515.6 L384.7 513.9 L389.2 512.3 L393.7 510.8 L398.2 509.3 L402.7 507.9 L407.2 506.5 L411.7 505.1 L416.2 503.7 L420.7 502.1 L425.2 500.5 L429.6 498.8 L434.0 497.1 L438.4 495.4 L442.8 493.6 L447.2 491.8 L451.5 490.0 L455.9 488.2 L460.3 486.4 L464.7 484.6 L469.1 482.9 L473.5 481.1 L477.9 479.4 L482.3 477.6 L486.7 475.9 L491.1 474.2 L495.5 472.6 L500.0 470.9 L504.4 469.2 L508.8 467.5 L513.2 465.9 L517.7 464.2 L522.1 462.5 L526.5 460.9 L531.0 459.2 L535.4 457.5 L539.8 455.9 L544.2 454.2 L548.7 452.5 L553.1 450.9 L557.5 449.2 L561.9 447.5 L566.3 445.8 L570.8 444.0 L575.2 442.3 L579.6 440.6 L584.0 438.9 L588.4 437.1 L592.8 435.4 L597.2 433.6 L601.6 431.9 L606.0 430.2 L610.4 428.5 L614.8 426.8 L619.3 425.2 L623.7 423.5 L628.2 421.9 L632.6 420.3 L637.1 418.7 L641.6 417.3 L646.1 415.8 L650.6 414.4 L655.1 412.9 L659.6 411.5 L664.1 410.1 L668.7 408.7 L673.2 407.4 L677.7 406.0 L682.3 404.7 L686.8 403.3 L691.3 402.0 L695.9 400.7 L700.4 399.3 L705.0 398.0 L709.5 396.7 L714.0 395.3 L718.5 393.8 L723.0 392.3 L727.4 390.5 L731.9 389.1 L736.5 388.1 L741.2 387.1 L745.8 386.2 L750.4 385.3 L755.1 384.4 L759.7 383.5 L764.4 382.7 L769.1 381.9 L773.7 381.0 L778.4 380.2 L783.1 379.5 L787.7 378.7 L792.4 377.9 L797.1 377.2 L801.8 376.5 L806.4 375.8 L811.1 375.2 L815.8 374.5 L820.5 373.9 L825.2 373.5 L829.9 373.0 L834.6 372.5 L839.3 372.0 L844.1 371.7 L848.8 371.3 L853.5 370.9 L858.2 370.6 L862.9 370.3 L867.7 369.9 L872.4 369.6 L877.1 369.3 L881.8 368.9 L886.5 368.5 L891.3 368.1 L896.0 367.7 L900.7 367.2 L905.4 366.7 L910.1 366.2 L914.8 365.6 L919.5 365.0 L924.2 364.4 L928.9 363.8 L933.5 363.1 L938.2 362.5 L942.9 361.9 L947.6 361.3 L952.3 360.7 L957.0 360.2 L961.7 359.8 L966.5 359.3 L971.2 358.9 L975.9 358.4 L980.6 358.0 L985.3 357.5 L990.0 357.0 L990.0 357.2 L985.3 357.8 L980.6 358.4 L975.9 359.0 L971.2 359.5 L966.5 360.0 L961.8 360.4 L957.1 361.0 L952.4 361.5 L947.7 362.1 L943.0 362.7 L938.4 363.4 L933.7 364.0 L929.0 364.7 L924.3 365.4 L919.6 366.0 L914.9 366.6 L910.2 367.2 L905.5 367.8 L900.8 368.4 L896.1 368.9 L891.4 369.4 L886.6 369.8 L881.9 370.2 L877.2 370.7 L872.5 371.0 L867.8 371.4 L863.0 371.8 L858.3 372.2 L853.6 372.6 L848.9 373.0 L844.2 373.4 L839.5 373.8 L834.8 374.3 L830.1 374.8 L825.4 375.4 L820.7 375.9 L816.1 376.5 L811.4 377.3 L806.7 378.0 L802.1 378.8 L797.4 379.6 L792.8 380.4 L788.1 381.3 L783.5 382.1 L778.8 382.9 L774.2 383.8 L769.6 384.7 L764.9 385.6 L760.3 386.5 L755.7 387.5 L751.1 388.6 L746.5 389.7 L741.9 390.8 L737.4 392.0 L733.0 393.2 L728.9 394.7 L724.6 396.6 L720.1 398.4 L715.5 400.1 L711.0 401.6 L706.5 403.1 L702.0 404.6 L697.5 406.0 L693.0 407.5 L688.5 409.0 L684.0 410.4 L679.5 411.9 L675.0 413.4 L670.5 414.9 L666.0 416.4 L661.6 417.9 L657.2 419.5 L652.8 421.0 L648.3 422.6 L643.8 424.2 L639.5 425.8 L635.2 427.4 L630.7 429.0 L626.3 430.7 L621.9 432.3 L617.5 433.9 L613.2 435.7 L608.8 437.4 L604.4 439.1 L600.0 440.8 L595.6 442.6 L591.2 444.4 L586.9 446.1 L582.5 447.9 L578.0 449.7 L573.6 451.4 L569.2 453.2 L564.8 454.9 L560.4 456.6 L555.9 458.2 L551.4 459.8 L546.9 461.3 L542.5 462.9 L538.0 464.5 L533.5 465.9 L529.0 467.5 L524.5 469.0 L520.0 470.4 L515.6 472.1 L511.1 473.6 L506.6 475.0 L502.1 476.5 L497.6 478.0 L493.1 479.4 L488.6 480.9 L484.1 482.4 L479.7 483.9 L475.2 485.4 L470.7 487.0 L466.3 488.5 L461.8 490.1 L457.4 491.7 L452.9 493.3 L448.5 495.0 L444.0 496.7 L439.6 498.4 L435.1 500.0 L430.7 501.7 L426.2 503.3 L421.7 504.8 L417.1 506.3 L412.5 507.6 L407.9 508.9 L403.4 510.2 L398.8 511.4 L394.3 512.8 L389.9 514.3 L385.4 515.8 L381.0 517.5 L376.6 519.2 L372.2 520.9 L367.8 522.6 L363.4 524.3 L359.0 526.1 L354.7 527.9 L350.3 529.6 L345.9 531.4 L341.5 533.1 L337.1 534.9 L332.7 536.6 L328.2 538.3 L323.8 540.0 L319.4 541.7 L314.9 543.4 L310.4 544.9 L306.0 546.5 L301.5 548.0 L297.0 549.5 L292.5 551.0 L287.9 552.4 L283.4 553.8 L278.9 555.2 L274.4 556.6 L269.9 558.0Z" fill="#868600"/>
<path d="M226.0 483.5 L230.9 481.8 L235.7 480.0 L240.6 478.3 L245.4 476.6 L250.3 474.9 L255.1 473.1 L260.0 471.4 L264.8 469.8 L269.7 468.1 L274.6 466.5 L279.5 464.9 L284.4 463.3 L289.3 461.8 L294.2 460.2 L299.1 458.5 L304.0 456.8 L308.8 455.0 L313.5 453.0 L318.3 451.0 L323.0 448.9 L327.6 446.7 L332.3 444.5 L337.0 442.4 L341.7 440.3 L346.4 438.2 L351.2 436.3 L356.0 434.4 L360.8 432.5 L365.6 430.6 L370.4 428.8 L375.2 426.9 L380.0 425.0 L384.8 423.2 L389.6 421.2 L394.3 419.3 L399.1 417.4 L403.9 415.4 L408.6 413.4 L413.3 411.3 L418.0 409.2 L422.7 407.1 L427.4 405.0 L432.1 402.9 L436.8 400.7 L441.5 398.6 L446.2 396.4 L450.8 394.2 L455.5 392.0 L460.1 389.7 L464.7 387.4 L469.3 385.0 L473.8 382.6 L478.4 380.2 L482.9 377.7 L487.4 375.3 L492.0 372.9 L496.6 370.5 L501.2 368.2 L505.8 365.9 L510.4 363.6 L515.0 361.3 L519.6 359.0 L524.2 356.7 L528.8 354.5 L533.5 352.2 L538.1 349.9 L542.7 347.6 L547.3 345.3 L551.9 343.0 L556.4 340.6 L561.0 338.2 L565.6 335.8 L570.2 333.5 L574.9 331.4 L579.6 329.4 L584.4 327.6 L589.3 325.8 L594.2 324.1 L599.1 322.5 L604.0 321.0 L608.9 319.4 L613.8 317.9 L618.7 316.3 L623.6 314.8 L628.5 313.1 L633.4 311.4 L638.2 309.7 L643.1 308.0 L647.9 306.3 L652.8 304.6 L657.7 303.0 L662.6 301.4 L667.5 300.0 L672.5 298.6 L677.5 297.3 L682.5 296.1 L687.5 294.8 L692.5 293.6 L697.5 292.5 L702.6 291.4 L707.6 290.4 L712.7 289.4 L717.7 288.5 L722.8 287.7 L727.9 286.9 L733.0 286.2 L738.1 285.6 L743.3 285.1 L748.4 284.6 L753.5 284.2 L758.7 283.7 L763.8 283.3 L768.9 282.9 L774.1 282.5 L779.2 282.1 L784.3 281.6 L789.4 281.1 L794.6 280.6 L799.7 280.1 L804.8 279.6 L810.0 279.2 L815.1 278.7 L820.2 278.2 L825.4 277.8 L830.5 277.4 L835.6 277.0 L840.8 276.6 L845.9 276.2 L851.0 275.8 L856.2 275.5 L861.3 275.1 L866.4 274.7 L871.6 274.4 L876.7 274.0 L881.9 273.6 L887.0 273.3 L892.1 272.9 L897.3 272.5 L902.4 272.2 L907.6 271.8 L912.7 271.5 L917.8 271.1 L923.0 270.7 L928.1 270.3 L933.2 270.0 L938.4 269.6 L943.5 269.2 L948.7 268.9 L953.8 268.5 L958.9 268.1 L964.1 267.7 L969.2 267.2 L974.3 266.7 L979.4 266.2 L984.6 265.6 L989.7 265.0 L994.8 264.4 L999.9 263.7 L1005.0 263.0 L1005.0 263.3 L1000.0 264.2 L994.9 265.1 L989.8 265.9 L984.7 266.6 L979.6 267.3 L974.4 267.9 L969.3 268.4 L964.2 268.9 L959.0 269.4 L953.9 269.9 L948.8 270.4 L943.6 270.8 L938.5 271.2 L933.4 271.7 L928.2 272.1 L923.1 272.5 L918.0 273.0 L912.8 273.4 L907.7 273.8 L902.6 274.3 L897.4 274.7 L892.3 275.2 L887.2 275.6 L882.0 276.0 L876.9 276.5 L871.8 276.9 L866.6 277.4 L861.5 277.8 L856.4 278.3 L851.2 278.7 L846.1 279.2 L841.0 279.6 L835.9 280.1 L830.7 280.6 L825.6 281.0 L820.5 281.5 L815.4 281.9 L810.3 282.4 L805.1 282.9 L800.0 283.4 L794.9 283.9 L789.8 284.4 L784.6 284.9 L779.5 285.3 L774.3 285.7 L769.2 286.0 L764.0 286.4 L758.9 286.8 L753.8 287.1 L748.6 287.5 L743.5 287.9 L738.4 288.4 L733.4 289.2 L728.4 290.0 L723.3 290.9 L718.3 291.9 L713.3 292.9 L708.4 294.2 L703.4 295.5 L698.5 296.9 L693.6 298.3 L688.7 299.8 L683.8 301.3 L678.9 302.7 L674.0 304.0 L669.1 305.5 L664.3 307.0 L659.5 308.6 L654.7 310.3 L650.0 312.0 L645.1 313.8 L640.3 315.6 L635.5 317.4 L630.6 319.2 L625.6 321.0 L620.7 322.6 L615.8 324.3 L610.9 325.9 L606.0 327.5 L601.2 329.2 L596.4 330.8 L591.7 332.5 L587.0 334.3 L582.4 336.1 L577.8 338.0 L573.2 340.0 L568.8 342.2 L564.2 344.4 L559.7 346.7 L555.0 349.1 L550.4 351.4 L545.7 353.7 L541.0 355.9 L536.4 358.1 L531.7 360.3 L527.1 362.5 L522.4 364.8 L517.8 367.0 L513.2 369.2 L508.5 371.4 L503.9 373.6 L499.3 375.9 L494.7 378.2 L490.2 380.5 L485.7 382.9 L481.1 385.3 L476.5 387.7 L471.9 390.0 L467.2 392.3 L462.5 394.6 L457.9 396.9 L453.2 399.2 L448.5 401.4 L443.8 403.6 L439.1 405.8 L434.4 408.0 L429.7 410.1 L425.0 412.2 L420.3 414.4 L415.6 416.5 L410.8 418.6 L406.1 420.6 L401.3 422.6 L396.5 424.6 L391.7 426.6 L386.9 428.5 L382.1 430.4 L377.3 432.3 L372.5 434.1 L367.7 436.0 L362.9 437.9 L358.1 439.8 L353.4 441.7 L348.7 443.6 L344.1 445.7 L339.4 447.7 L334.8 449.9 L330.1 452.1 L325.5 454.2 L320.7 456.4 L315.9 458.5 L311.0 460.6 L306.0 462.4 L301.1 464.2 L296.1 465.9 L291.2 467.5 L286.3 469.1 L281.4 470.7 L276.5 472.3 L271.7 474.0 L266.9 475.6 L262.1 477.4 L257.2 479.1 L252.4 480.8 L247.5 482.6 L242.7 484.3 L237.9 486.1 L233.0 487.9 L228.2 489.6Z" fill="#838300"/>
<path d="M452.0 600.0 L520.0 588.0 L566.9 580.0 L644.0 563.0 L672.3 554.6 L737.0 537.0 L770.0 526.0 L802.0 515.7 L835.0 501.6 L870.0 484.0 L905.0 470.0 L938.5 461.0 L925.0 488.0 L912.5 509.0 L896.0 528.0 L862.5 541.0 L800.0 564.6 L700.0 598.5 L561.8 646.6 L488.0 672.5Z" fill="#f9f900"/>
<path d="M500.0 668.2 L504.0 666.8 L507.9 665.4 L511.9 664.0 L515.9 662.6 L519.8 661.3 L523.8 659.9 L527.8 658.5 L531.7 657.1 L535.7 655.7 L539.7 654.3 L543.6 652.9 L547.6 651.5 L551.6 650.2 L555.6 648.8 L559.5 647.4 L563.5 646.0 L567.5 644.6 L571.4 643.2 L575.4 641.9 L579.4 640.5 L583.3 639.1 L587.3 637.7 L591.3 636.3 L595.2 634.9 L599.2 633.5 L603.2 632.2 L607.1 630.8 L611.1 629.4 L615.1 628.0 L619.0 626.6 L623.0 625.2 L627.0 623.9 L631.0 622.5 L634.9 621.1 L638.9 619.7 L642.9 618.3 L646.8 616.9 L650.8 615.6 L654.8 614.2 L658.7 612.8 L662.7 611.4 L666.7 610.0 L670.7 608.7 L674.6 607.3 L678.6 605.9 L682.6 604.5 L686.5 603.2 L690.5 601.8 L694.5 600.4 L698.5 599.0 L702.4 597.7 L706.4 596.3 L710.4 595.0 L714.4 593.6 L718.4 592.3 L722.3 590.9 L726.3 589.6 L730.3 588.2 L734.3 586.9 L738.3 585.5 L742.3 584.2 L746.2 582.9 L750.2 581.5 L754.2 580.2 L758.2 578.9 L762.2 577.5 L766.2 576.2 L770.1 574.8 L774.1 573.5 L778.1 572.2 L782.1 570.8 L786.1 569.4 L790.0 568.0 L794.0 566.7 L798.0 565.3 L801.9 563.9 L805.9 562.5 L809.8 561.0 L813.8 559.6 L817.7 558.2 L821.7 556.7 L825.6 555.2 L829.5 553.7 L833.5 552.2 L837.4 550.7 L841.3 549.2 L845.2 547.7 L849.2 546.2 L853.1 544.6 L857.0 543.1 L860.9 541.6 L864.9 540.2 L868.8 538.7 L872.8 537.3 L876.8 536.0 L880.8 534.7 L884.7 533.2 L888.6 531.7 L892.4 529.9 L896.1 527.9 L899.4 525.3 L902.5 522.5 L905.3 519.3 L907.7 515.9 L910.1 512.5 L912.5 509.0 L914.9 505.5 L917.1 502.0 L919.3 498.4 L921.3 494.7 L923.4 491.0 L925.4 487.3 L927.3 483.6 L929.2 479.9 L931.1 476.1 L933.0 472.3 L934.8 468.5 L936.6 464.8 L938.5 461.0 L938.2 460.9 L936.2 464.6 L934.2 468.2 L932.1 471.9 L930.0 475.6 L927.9 479.2 L925.8 482.8 L923.6 486.4 L921.5 490.0 L919.3 493.6 L917.2 497.1 L914.9 500.6 L912.5 504.0 L910.0 507.3 L907.5 510.7 L905.0 514.0 L902.5 517.1 L899.8 519.8 L896.8 522.3 L893.9 524.5 L890.5 526.3 L887.0 528.0 L883.3 529.3 L879.4 530.7 L875.4 531.9 L871.4 533.2 L867.3 534.6 L863.4 536.0 L859.3 537.4 L855.4 538.9 L851.5 540.5 L847.5 542.0 L843.6 543.5 L839.7 545.1 L835.8 546.6 L831.9 548.1 L828.0 549.6 L824.1 551.1 L820.1 552.6 L816.2 554.1 L812.3 555.5 L808.4 556.9 L804.4 558.4 L800.5 559.8 L796.6 561.2 L792.6 562.6 L788.6 564.0 L784.7 565.4 L780.7 566.8 L776.7 568.1 L772.8 569.5 L768.8 570.8 L764.8 572.2 L760.8 573.5 L756.9 574.9 L752.9 576.2 L748.9 577.6 L744.9 578.9 L740.9 580.3 L737.0 581.6 L733.0 583.0 L729.0 584.3 L725.0 585.7 L721.0 587.1 L717.0 588.4 L713.1 589.8 L709.1 591.1 L705.1 592.5 L701.1 593.9 L697.2 595.3 L693.2 596.7 L689.2 598.1 L685.3 599.5 L681.3 600.9 L677.4 602.3 L673.4 603.8 L669.4 605.2 L665.5 606.6 L661.5 608.0 L657.6 609.4 L653.6 610.9 L649.7 612.3 L645.7 613.7 L641.7 615.1 L637.8 616.5 L633.8 618.0 L629.9 619.4 L625.9 620.8 L622.0 622.2 L618.0 623.7 L614.1 625.1 L610.1 626.5 L606.2 627.9 L602.2 629.4 L598.2 630.8 L594.3 632.2 L590.3 633.6 L586.4 635.1 L582.4 636.5 L578.5 637.9 L574.5 639.3 L570.6 640.8 L566.6 642.2 L562.7 643.6 L558.7 645.1 L554.8 646.6 L550.9 648.1 L546.9 649.6 L543.0 651.1 L539.1 652.6 L535.1 654.1 L531.2 655.6 L527.3 657.1 L523.4 658.6 L519.5 660.2 L515.5 661.7 L511.6 663.2 L507.7 664.7 L503.8 666.2 L499.8 667.7Z" fill="#8e8e00"/>
<path d="M500.0 668.2 L504.0 666.8 L507.9 665.4 L511.9 664.0 L515.9 662.6 L519.8 661.3 L523.8 659.9 L527.8 658.5 L531.7 657.1 L535.7 655.7 L539.7 654.3 L543.6 652.9 L547.6 651.5 L551.6 650.2 L555.6 648.8 L559.5 647.4 L563.5 646.0 L567.5 644.6 L571.4 643.2 L575.4 641.9 L579.4 640.5 L583.3 639.1 L587.3 637.7 L591.3 636.3 L595.2 634.9 L599.2 633.5 L603.2 632.2 L607.1 630.8 L611.1 629.4 L615.1 628.0 L619.0 626.6 L623.0 625.2 L627.0 623.9 L631.0 622.5 L634.9 621.1 L638.9 619.7 L642.9 618.3 L646.8 616.9 L650.8 615.6 L654.8 614.2 L658.7 612.8 L662.7 611.4 L666.7 610.0 L670.7 608.7 L674.6 607.3 L678.6 605.9 L682.6 604.5 L686.5 603.2 L690.5 601.8 L694.5 600.4 L698.5 599.0 L702.4 597.7 L706.4 596.3 L710.4 595.0 L714.4 593.6 L718.4 592.3 L722.3 590.9 L726.3 589.6 L730.3 588.2 L734.3 586.9 L738.3 585.5 L742.3 584.2 L746.2 582.9 L750.2 581.5 L754.2 580.2 L758.2 578.9 L762.2 577.5 L766.2 576.2 L770.1 574.8 L774.1 573.5 L778.1 572.2 L782.1 570.8 L786.1 569.4 L790.0 568.0 L794.0 566.7 L798.0 565.3 L801.9 563.9 L805.9 562.5 L809.8 561.0 L813.8 559.6 L817.7 558.2 L821.7 556.7 L825.6 555.2 L829.5 553.7 L833.5 552.2 L837.4 550.7 L841.3 549.2 L845.2 547.7 L849.2 546.2 L853.1 544.6 L857.0 543.1 L860.9 541.6 L864.9 540.2 L868.8 538.7 L872.8 537.3 L876.8 536.0 L880.8 534.7 L884.7 533.2 L888.6 531.7 L892.4 529.9 L896.1 527.9 L899.4 525.3 L902.5 522.5 L905.3 519.3 L907.7 515.9 L910.1 512.5 L912.5 509.0 L914.9 505.5 L917.1 502.0 L919.3 498.4 L921.3 494.7 L923.4 491.0 L925.4 487.3 L927.3 483.6 L929.2 479.9 L931.1 476.1 L933.0 472.3 L934.8 468.5 L936.6 464.8 L938.5 461.0" fill="none" stroke="#f0f0a0" stroke-width="0.7" stroke-dasharray="1 1.5"/>
<path d="M1013.0 168.0 L1024.0 168.0 L1004.0 282.0 L989.0 361.0 L971.0 409.0 L966.0 411.0 L982.0 361.0 L995.0 282.0Z" fill="#e4e44c"/>
<path d="M1024.0 168.0 L1043.0 172.0 L1024.0 240.0 L1010.0 282.0 L1000.0 320.0 L990.0 361.0 L978.0 400.0 L966.0 411.0 L971.0 409.0 L989.0 361.0 L1004.0 282.0Z" fill="#c2c200"/>
<path d="M1049.3 169.9 L1060.0 171.0 L1069.9 172.3 L1079.2 173.9 L1087.6 175.7 L1095.3 177.4 L1102.0 179.0 L1107.4 180.4 L1111.7 181.6 L1115.2 182.8 L1118.5 184.2 L1122.0 186.0 L1125.8 188.2 L1129.6 190.7 L1133.3 193.4 L1136.8 196.1 L1140.0 198.8 L1142.9 201.3 L1145.7 203.8 L1148.2 206.3 L1150.3 208.7 L1152.0 211.0 L1153.1 213.1 L1153.8 215.1 L1154.0 217.0 L1154.1 218.9 L1154.0 221.0 L1153.7 223.5 L1153.0 226.2 L1152.2 229.0 L1151.5 231.3 L1151.0 233.0 L1151.0 233.0 L1127.5 258.0 L1096.0 283.0 L1065.0 311.0 L1034.0 346.0 L1002.5 377.0 L971.0 405.0 L961.0 413.0 L978.0 400.0 L990.0 361.0 L1000.0 320.0 L1010.0 282.0 L1024.0 240.0Z" fill="url(#gBow)"/>
<path d="M1018.0 262.0 L1024.1 265.6 L1032.6 270.7 L1040.0 276.0 L1044.9 281.2 L1048.7 286.6 L1052.0 292.0 L1055.2 297.4 L1057.9 302.7 L1059.5 307.6 L1060.0 311.9 L1059.4 315.9 L1057.7 319.9 L1055.0 323.7 L1051.1 327.4 L1045.4 332.2 L1036.9 338.5 L1026.7 345.7 L1017.3 353.3 L1009.8 361.2 L1003.0 369.5 L996.2 377.9 L988.7 387.1 L981.2 396.5 L975.0 404.0 L970.0 409.1 L966.2 412.3 L965.0 413.0 L967.7 411.3 L972.9 407.1 L978.0 400.0 L982.1 389.0 L986.2 375.1 L990.0 361.0 L993.5 347.4 L996.7 333.5 L1000.0 320.0 L1003.7 305.7 L1007.4 291.7 L1010.0 282.0Z" fill="#5a5a00"/>
<path d="M1026.0 272.0 L1029.5 274.9 L1035.0 285.6 L1040.0 296.0 L1044.0 303.6 L1047.4 310.9 L1049.0 318.0 L1048.5 324.9 L1046.2 331.6 L1042.0 338.0 L1035.0 344.2 L1026.2 350.2 L1018.0 356.0 L1010.3 363.0 L1003.3 369.9 L1000.0 372.0 L1002.6 366.5 L1008.8 356.4 L1015.0 346.0 L1020.7 337.5 L1026.4 328.7 L1030.0 318.0 L1029.4 301.4 L1026.7 282.8Z" fill="#9a9a12"/>
<path d="M1000.0 320.0 L1010.0 282.0 L1016.0 268.0 L1006.0 320.0 L992.0 370.0 L968.0 412.0 L978.0 400.0 L990.0 361.0Z" fill="#a6a600"/>
<g clip-path="url(#cAll)"><path d="M1018.0 266.0 L1144.0 200.0M1024.0 290.0 L1153.0 219.0M1030.0 312.0 L1152.0 236.0M1025.0 338.0 L1132.0 257.0M1010.0 350.0 L1105.0 280.0M995.0 368.0 L1080.0 304.0M982.0 388.0 L1055.0 331.0M970.0 404.0 L1030.0 356.0" fill="none" stroke="#d02818" stroke-width="1"/></g>
<g clip-path="url(#cAll)"><path d="M1030.0 282.0 L1131.0 192.3M1045.0 295.0 L1150.0 209.2M1070.0 300.0 L1152.0 228.0" fill="none" stroke="#c8c860" stroke-width="0.8"/></g>
<g clip-path="url(#cAll)"><path d="M1000.0 263.7 L1006.4 263.1 L1015.5 262.5 L1024.3 263.7 L1031.8 267.3 L1039.0 272.7 L1045.4 279.5 L1051.2 288.5 L1056.2 298.9 L1059.5 307.6 L1060.5 312.9 L1059.7 316.4 L1057.7 319.9 L1055.0 323.7 L1051.1 327.4 L1045.4 332.2 L1036.8 338.7 L1026.5 346.1 L1017.3 353.3 L1010.1 360.4 L1004.1 367.2 L1000.0 372.0M1000.0 289.0 L1003.7 288.3 L1008.9 287.5 L1013.8 288.2 L1017.8 290.7 L1021.4 294.7 L1024.3 300.5 L1026.4 309.0 L1027.7 319.2 L1027.8 328.7 L1026.4 336.4 L1023.8 343.2 L1020.8 349.7 L1017.6 356.0 L1013.9 361.9 L1010.3 367.3 L1006.5 372.4 L1002.7 376.9 L1000.0 380.0M990.0 312.0 L993.6 310.8 L998.8 309.5 L1003.2 311.0 L1006.4 317.3 L1008.9 326.5 L1010.3 335.7 L1010.2 344.2 L1009.0 352.7 L1006.8 360.3 L1003.0 367.1 L998.4 373.0 L995.0 377.0" fill="none" stroke="#2020c0" stroke-width="1"/></g>
<path d="M1010 169 L1045 175 L1080 176" fill="none" stroke="#d02818" stroke-width="1"/>
<g clip-path="url(#cTop)"><path d="M150.0 420.0 L160.0 417.4 L170.0 414.8 L180.0 412.2 L190.0 409.5 L200.0 406.7 L210.0 403.9 L220.0 400.9 L230.0 397.8 L240.0 394.5 L250.0 391.2 L260.0 387.9 L270.0 384.5 L280.0 381.0 L290.0 377.5 L300.0 374.0 L310.0 370.4 L320.0 366.8 L330.0 363.1 L340.0 359.4 L350.0 355.6 L360.0 351.9 L370.0 348.2 L380.0 344.5 L390.0 340.9 L400.0 337.3 L410.0 333.8 L420.0 330.4 L430.0 327.1 L440.0 324.0 L450.0 320.9 L460.0 318.0 L470.0 315.2 L480.0 312.5 L490.0 309.9 L500.0 307.5 L510.0 305.0 L520.0 302.6 L530.0 300.2 L540.0 298.0 L550.0 295.9 L560.0 293.9 L570.0 292.2 L580.0 290.6 L590.0 289.3 L600.0 288.1 L610.0 287.0 L620.0 286.1 L630.0 285.2 L640.0 284.4 L650.0 283.7 L660.0 283.0 L670.0 282.3 L680.0 281.7 L690.0 281.0 L700.0 280.4 L710.0 279.7 L720.0 279.0 L730.0 278.3 L740.0 277.6 L750.0 276.9 L760.0 276.3 L770.0 275.6 L780.0 275.0 L790.0 274.4 L800.0 273.9 L810.0 273.3 L820.0 272.7 L830.0 272.1 L840.0 271.5 L850.0 271.0 L860.0 270.4 L870.0 269.8 L880.0 269.2 L890.0 268.7 L900.0 268.1 L910.0 267.5 L920.0 267.0 L930.0 266.4 L940.0 265.9 L950.0 265.3 L960.0 264.8 L970.0 264.2 L980.0 263.7 L990.0 263.1 L1000.0 262.6 L1010.0 262.1 L1020.0 261.6 L1030.0 261.1 L1040.0 260.6 L1050.0 260.2 L1060.0 259.7 L1070.0 259.3 L1080.0 258.9 L1090.0 258.4 L1100.0 258.0M150.0 439.5 L160.0 436.9 L170.0 434.4 L180.0 431.9 L190.0 429.3 L200.0 426.6 L210.0 423.8 L220.0 420.9 L230.0 417.9 L240.0 414.8 L250.0 411.6 L260.0 408.3 L270.0 405.0 L280.0 401.6 L290.0 398.2 L300.0 394.8 L310.0 391.4 L320.0 387.9 L330.0 384.4 L340.0 380.9 L350.0 377.4 L360.0 373.8 L370.0 370.3 L380.0 366.8 L390.0 363.3 L400.0 359.9 L410.0 356.6 L420.0 353.4 L430.0 350.4 L440.0 347.5 L450.0 344.7 L460.0 342.0 L470.0 339.4 L480.0 337.0 L490.0 334.5 L500.0 332.1 L510.0 329.7 L520.0 327.3 L530.0 325.0 L540.0 322.8 L550.0 320.7 L560.0 318.8 L570.0 317.1 L580.0 315.6 L590.0 314.3 L600.0 313.2 L610.0 312.2 L620.0 311.3 L630.0 310.4 L640.0 309.6 L650.0 308.9 L660.0 308.2 L670.0 307.5 L680.0 306.9 L690.0 306.2 L700.0 305.6 L710.0 304.9 L720.0 304.2 L730.0 303.5 L740.0 302.8 L750.0 302.1 L760.0 301.5 L770.0 300.8 L780.0 300.2 L790.0 299.6 L800.0 298.9 L810.0 298.3 L820.0 297.7 L830.0 297.1 L840.0 296.5 L850.0 295.9 L860.0 295.3 L870.0 294.7 L880.0 294.1 L890.0 293.5 L900.0 292.9 L910.0 292.3 L920.0 291.7 L930.0 291.1 L940.0 290.5 L950.0 290.0 L960.0 289.4 L970.0 288.8 L980.0 288.2 L990.0 287.7 L1000.0 287.1 L1010.0 286.5 L1020.0 286.0 L1030.0 285.4 L1040.0 284.9 L1050.0 284.4 L1060.0 283.9 L1070.0 283.4 L1080.0 283.0 L1090.0 282.5 L1100.0 282.0M150.0 459.0 L160.0 456.5 L170.0 454.1 L180.0 451.6 L190.0 449.1 L200.0 446.5 L210.0 443.8 L220.0 440.9 L230.0 438.0 L240.0 435.0 L250.0 431.9 L260.0 428.7 L270.0 425.5 L280.0 422.2 L290.0 418.9 L300.0 415.6 L310.0 412.4 L320.0 409.1 L330.0 405.8 L340.0 402.4 L350.0 399.1 L360.0 395.7 L370.0 392.4 L380.0 389.1 L390.0 385.8 L400.0 382.6 L410.0 379.4 L420.0 376.4 L430.0 373.6 L440.0 371.0 L450.0 368.4 L460.0 366.0 L470.0 363.7 L480.0 361.5 L490.0 359.0 L500.0 356.7 L510.0 354.3 L520.0 352.0 L530.0 349.7 L540.0 347.6 L550.0 345.6 L560.0 343.7 L570.0 342.1 L580.0 340.6 L590.0 339.4 L600.0 338.3 L610.0 337.3 L620.0 336.5 L630.0 335.6 L640.0 334.8 L650.0 334.1 L660.0 333.4 L670.0 332.7 L680.0 332.1 L690.0 331.4 L700.0 330.8 L710.0 330.1 L720.0 329.4 L730.0 328.7 L740.0 328.0 L750.0 327.3 L760.0 326.7 L770.0 326.0 L780.0 325.3 L790.0 324.7 L800.0 324.0 L810.0 323.4 L820.0 322.7 L830.0 322.1 L840.0 321.5 L850.0 320.8 L860.0 320.2 L870.0 319.6 L880.0 318.9 L890.0 318.3 L900.0 317.7 L910.0 317.1 L920.0 316.4 L930.0 315.8 L940.0 315.2 L950.0 314.6 L960.0 314.0 L970.0 313.4 L980.0 312.8 L990.0 312.2 L1000.0 311.6 L1010.0 311.0 L1020.0 310.4 L1030.0 309.8 L1040.0 309.2 L1050.0 308.7 L1060.0 308.1 L1070.0 307.6 L1080.0 307.1 L1090.0 306.5 L1100.0 306.0M150.0 478.5 L160.0 476.1 L170.0 473.7 L180.0 471.3 L190.0 468.9 L200.0 466.3 L210.0 463.7 L220.0 460.9 L230.0 458.1 L240.0 455.2 L250.0 452.2 L260.0 449.1 L270.0 446.0 L280.0 442.8 L290.0 439.6 L300.0 436.4 L310.0 433.4 L320.0 430.3 L330.0 427.1 L340.0 424.0 L350.0 420.8 L360.0 417.6 L370.0 414.5 L380.0 411.3 L390.0 408.2 L400.0 405.2 L410.0 402.2 L420.0 399.4 L430.0 396.9 L440.0 394.5 L450.0 392.2 L460.0 390.0 L470.0 387.9 L480.0 386.0 L490.0 383.6 L500.0 381.3 L510.0 379.0 L520.0 376.7 L530.0 374.5 L540.0 372.4 L550.0 370.4 L560.0 368.6 L570.0 367.0 L580.0 365.6 L590.0 364.4 L600.0 363.4 L610.0 362.5 L620.0 361.7 L630.0 360.8 L640.0 360.0 L650.0 359.3 L660.0 358.6 L670.0 357.9 L680.0 357.3 L690.0 356.6 L700.0 356.0 L710.0 355.3 L720.0 354.6 L730.0 353.9 L740.0 353.2 L750.0 352.5 L760.0 351.9 L770.0 351.1 L780.0 350.5 L790.0 349.8 L800.0 349.1 L810.0 348.4 L820.0 347.8 L830.0 347.1 L840.0 346.4 L850.0 345.8 L860.0 345.1 L870.0 344.4 L880.0 343.8 L890.0 343.1 L900.0 342.5 L910.0 341.8 L920.0 341.2 L930.0 340.5 L940.0 339.9 L950.0 339.2 L960.0 338.6 L970.0 338.0 L980.0 337.3 L990.0 336.7 L1000.0 336.1 L1010.0 335.4 L1020.0 334.8 L1030.0 334.1 L1040.0 333.5 L1050.0 332.9 L1060.0 332.3 L1070.0 331.7 L1080.0 331.2 L1090.0 330.6 L1100.0 330.0M150.0 498.0 L160.0 495.7 L170.0 493.4 L180.0 491.1 L190.0 488.7 L200.0 486.2 L210.0 483.7 L220.0 481.0 L230.0 478.2 L240.0 475.4 L250.0 472.5 L260.0 469.5 L270.0 466.5 L280.0 463.4 L290.0 460.3 L300.0 457.2 L310.0 454.4 L320.0 451.4 L330.0 448.5 L340.0 445.5 L350.0 442.5 L360.0 439.5 L370.0 436.5 L380.0 433.6 L390.0 430.7 L400.0 427.8 L410.0 425.1 L420.0 422.4 L430.0 420.1 L440.0 418.0 L450.0 415.9 L460.0 414.0 L470.0 412.2 L480.0 410.5 L490.0 408.1 L500.0 405.9 L510.0 403.6 L520.0 401.4 L530.0 399.2 L540.0 397.2 L550.0 395.3 L560.0 393.5 L570.0 392.0 L580.0 390.6 L590.0 389.5 L600.0 388.5 L610.0 387.6 L620.0 386.9 L630.0 386.0 L640.0 385.2 L650.0 384.5 L660.0 383.8 L670.0 383.1 L680.0 382.5 L690.0 381.8 L700.0 381.2 L710.0 380.5 L720.0 379.8 L730.0 379.1 L740.0 378.4 L750.0 377.7 L760.0 377.1 L770.0 376.3 L780.0 375.6 L790.0 374.9 L800.0 374.2 L810.0 373.5 L820.0 372.8 L830.0 372.1 L840.0 371.4 L850.0 370.7 L860.0 370.0 L870.0 369.3 L880.0 368.6 L890.0 368.0 L900.0 367.3 L910.0 366.6 L920.0 365.9 L930.0 365.2 L940.0 364.6 L950.0 363.9 L960.0 363.2 L970.0 362.6 L980.0 361.9 L990.0 361.2 L1000.0 360.6 L1010.0 359.9 L1020.0 359.2 L1030.0 358.5 L1040.0 357.8 L1050.0 357.2 L1060.0 356.5 L1070.0 355.9 L1080.0 355.3 L1090.0 354.6 L1100.0 354.0M150.0 517.5 L160.0 515.2 L170.0 513.0 L180.0 510.8 L190.0 508.5 L200.0 506.1 L210.0 503.6 L220.0 501.0 L230.0 498.3 L240.0 495.6 L250.0 492.8 L260.0 489.9 L270.0 487.0 L280.0 484.0 L290.0 481.0 L300.0 478.0 L310.0 475.3 L320.0 472.6 L330.0 469.8 L340.0 467.0 L350.0 464.2 L360.0 461.4 L370.0 458.6 L380.0 455.9 L390.0 453.1 L400.0 450.5 L410.0 447.9 L420.0 445.4 L430.0 443.4 L440.0 441.5 L450.0 439.7 L460.0 438.0 L470.0 436.4 L480.0 435.0 L490.0 432.7 L500.0 430.5 L510.0 428.3 L520.0 426.1 L530.0 424.0 L540.0 422.0 L550.0 420.1 L560.0 418.4 L570.0 416.9 L580.0 415.6 L590.0 414.5 L600.0 413.6 L610.0 412.8 L620.0 412.1 L630.0 411.2 L640.0 410.4 L650.0 409.7 L660.0 409.0 L670.0 408.3 L680.0 407.7 L690.0 407.0 L700.0 406.4 L710.0 405.7 L720.0 405.0 L730.0 404.3 L740.0 403.6 L750.0 402.9 L760.0 402.3 L770.0 401.5 L780.0 400.7 L790.0 400.0 L800.0 399.3 L810.0 398.5 L820.0 397.8 L830.0 397.1 L840.0 396.4 L850.0 395.6 L860.0 394.9 L870.0 394.2 L880.0 393.5 L890.0 392.8 L900.0 392.1 L910.0 391.4 L920.0 390.6 L930.0 389.9 L940.0 389.2 L950.0 388.5 L960.0 387.8 L970.0 387.2 L980.0 386.5 L990.0 385.8 L1000.0 385.1 L1010.0 384.3 L1020.0 383.6 L1030.0 382.8 L1040.0 382.1 L1050.0 381.4 L1060.0 380.7 L1070.0 380.0 L1080.0 379.4 L1090.0 378.7 L1100.0 378.0M150.0 537.0 L160.0 534.8 L170.0 532.7 L180.0 530.5 L190.0 528.3 L200.0 526.0 L210.0 523.5 L220.0 521.0 L230.0 518.5 L240.0 515.8 L250.0 513.1 L260.0 510.3 L270.0 507.5 L280.0 504.6 L290.0 501.7 L300.0 498.8 L310.0 496.3 L320.0 493.8 L330.0 491.2 L340.0 488.6 L350.0 485.9 L360.0 483.3 L370.0 480.7 L380.0 478.1 L390.0 475.6 L400.0 473.1 L410.0 470.7 L420.0 468.4 L430.0 466.6 L440.0 465.0 L450.0 463.4 L460.0 462.0 L470.0 460.7 L480.0 459.5 L490.0 457.2 L500.0 455.1 L510.0 452.9 L520.0 450.8 L530.0 448.7 L540.0 446.8 L550.0 445.0 L560.0 443.3 L570.0 441.9 L580.0 440.6 L590.0 439.6 L600.0 438.7 L610.0 437.9 L620.0 437.3 L630.0 436.4 L640.0 435.6 L650.0 434.9 L660.0 434.2 L670.0 433.5 L680.0 432.9 L690.0 432.2 L700.0 431.6 L710.0 430.9 L720.0 430.2 L730.0 429.5 L740.0 428.8 L750.0 428.1 L760.0 427.5 L770.0 426.7 L780.0 425.9 L790.0 425.1 L800.0 424.4 L810.0 423.6 L820.0 422.8 L830.0 422.1 L840.0 421.3 L850.0 420.6 L860.0 419.8 L870.0 419.1 L880.0 418.3 L890.0 417.6 L900.0 416.9 L910.0 416.1 L920.0 415.4 L930.0 414.6 L940.0 413.9 L950.0 413.2 L960.0 412.5 L970.0 411.7 L980.0 411.0 L990.0 410.3 L1000.0 409.6 L1010.0 408.8 L1020.0 408.0 L1030.0 407.2 L1040.0 406.4 L1050.0 405.7 L1060.0 404.9 L1070.0 404.2 L1080.0 403.5 L1090.0 402.7 L1100.0 402.0M150.0 556.5 L160.0 554.4 L170.0 552.3 L180.0 550.2 L190.0 548.1 L200.0 545.8 L210.0 543.5 L220.0 541.0 L230.0 538.6 L240.0 536.0 L250.0 533.4 L260.0 530.7 L270.0 528.0 L280.0 525.2 L290.0 522.4 L300.0 519.6 L310.0 517.3 L320.0 514.9 L330.0 512.5 L340.0 510.1 L350.0 507.7 L360.0 505.2 L370.0 502.8 L380.0 500.4 L390.0 498.0 L400.0 495.7 L410.0 493.5 L420.0 491.4 L430.0 489.9 L440.0 488.5 L450.0 487.2 L460.0 486.0 L470.0 484.9 L480.0 484.0 L490.0 481.8 L500.0 479.7 L510.0 477.6 L520.0 475.5 L530.0 473.5 L540.0 471.6 L550.0 469.8 L560.0 468.2 L570.0 466.8 L580.0 465.6 L590.0 464.6 L600.0 463.8 L610.0 463.1 L620.0 462.5 L630.0 461.6 L640.0 460.8 L650.0 460.1 L660.0 459.4 L670.0 458.7 L680.0 458.1 L690.0 457.4 L700.0 456.8 L710.0 456.1 L720.0 455.4 L730.0 454.7 L740.0 454.0 L750.0 453.3 L760.0 452.7 L770.0 451.8 L780.0 451.0 L790.0 450.2 L800.0 449.4 L810.0 448.6 L820.0 447.9 L830.0 447.1 L840.0 446.3 L850.0 445.5 L860.0 444.7 L870.0 444.0 L880.0 443.2 L890.0 442.4 L900.0 441.6 L910.0 440.9 L920.0 440.1 L930.0 439.4 L940.0 438.6 L950.0 437.8 L960.0 437.1 L970.0 436.3 L980.0 435.6 L990.0 434.8 L1000.0 434.1 L1010.0 433.2 L1020.0 432.4 L1030.0 431.5 L1040.0 430.7 L1050.0 429.9 L1060.0 429.1 L1070.0 428.3 L1080.0 427.6 L1090.0 426.8 L1100.0 426.0M150.0 576.0 L160.0 574.0 L170.0 572.0 L180.0 569.9 L190.0 567.8 L200.0 565.7 L210.0 563.4 L220.0 561.0 L230.0 558.7 L240.0 556.3 L250.0 553.7 L260.0 551.2 L270.0 548.5 L280.0 545.8 L290.0 543.1 L300.0 540.4 L310.0 538.3 L320.0 536.1 L330.0 533.9 L340.0 531.6 L350.0 529.4 L360.0 527.1 L370.0 524.9 L380.0 522.7 L390.0 520.5 L400.0 518.4 L410.0 516.3 L420.0 514.4 L430.0 513.1 L440.0 512.0 L450.0 510.9 L460.0 510.0 L470.0 509.2 L480.0 508.5 L490.0 506.3 L500.0 504.3 L510.0 502.2 L520.0 500.2 L530.0 498.2 L540.0 496.4 L550.0 494.7 L560.0 493.1 L570.0 491.8 L580.0 490.6 L590.0 489.7 L600.0 488.9 L610.0 488.2 L620.0 487.7 L630.0 486.8 L640.0 486.0 L650.0 485.3 L660.0 484.6 L670.0 483.9 L680.0 483.3 L690.0 482.6 L700.0 482.0 L710.0 481.3 L720.0 480.6 L730.0 479.9 L740.0 479.2 L750.0 478.5 L760.0 477.9 L770.0 477.0 L780.0 476.2 L790.0 475.3 L800.0 474.5 L810.0 473.7 L820.0 472.9 L830.0 472.1 L840.0 471.3 L850.0 470.5 L860.0 469.6 L870.0 468.8 L880.0 468.0 L890.0 467.2 L900.0 466.4 L910.0 465.6 L920.0 464.8 L930.0 464.1 L940.0 463.3 L950.0 462.5 L960.0 461.7 L970.0 460.9 L980.0 460.1 L990.0 459.4 L1000.0 458.6 L1010.0 457.7 L1020.0 456.8 L1030.0 455.9 L1040.0 455.0 L1050.0 454.2 L1060.0 453.3 L1070.0 452.5 L1080.0 451.7 L1090.0 450.8 L1100.0 450.0M150.0 595.5 L160.0 593.5 L170.0 591.6 L180.0 589.7 L190.0 587.6 L200.0 585.6 L210.0 583.4 L220.0 581.1 L230.0 578.8 L240.0 576.5 L250.0 574.1 L260.0 571.6 L270.0 569.0 L280.0 566.4 L290.0 563.8 L300.0 561.2 L310.0 559.3 L320.0 557.3 L330.0 555.2 L340.0 553.2 L350.0 551.1 L360.0 549.0 L370.0 547.0 L380.0 544.9 L390.0 542.9 L400.0 541.0 L410.0 539.1 L420.0 537.4 L430.0 536.4 L440.0 535.5 L450.0 534.7 L460.0 534.0 L470.0 533.4 L480.0 533.0 L490.0 530.9 L500.0 528.9 L510.0 526.9 L520.0 524.9 L530.0 523.0 L540.0 521.2 L550.0 519.5 L560.0 518.0 L570.0 516.7 L580.0 515.6 L590.0 514.7 L600.0 514.0 L610.0 513.4 L620.0 512.9 L630.0 512.0 L640.0 511.2 L650.0 510.5 L660.0 509.8 L670.0 509.1 L680.0 508.5 L690.0 507.8 L700.0 507.2 L710.0 506.5 L720.0 505.8 L730.0 505.1 L740.0 504.4 L750.0 503.7 L760.0 503.1 L770.0 502.2 L780.0 501.3 L790.0 500.5 L800.0 499.6 L810.0 498.8 L820.0 497.9 L830.0 497.1 L840.0 496.2 L850.0 495.4 L860.0 494.6 L870.0 493.7 L880.0 492.9 L890.0 492.1 L900.0 491.2 L910.0 490.4 L920.0 489.6 L930.0 488.8 L940.0 487.9 L950.0 487.1 L960.0 486.3 L970.0 485.5 L980.0 484.7 L990.0 483.9 L1000.0 483.1 L1010.0 482.1 L1020.0 481.2 L1030.0 480.2 L1040.0 479.3 L1050.0 478.4 L1060.0 477.5 L1070.0 476.6 L1080.0 475.8 L1090.0 474.9 L1100.0 474.0M150.0 615.0 L160.0 613.1 L170.0 611.3 L180.0 609.4 L190.0 607.4 L200.0 605.4 L210.0 603.3 L220.0 601.1 L230.0 598.9 L240.0 596.7 L250.0 594.4 L260.0 592.0 L270.0 589.5 L280.0 587.1 L290.0 584.5 L300.0 582.0 L310.0 580.3 L320.0 578.4 L330.0 576.6 L340.0 574.7 L350.0 572.8 L360.0 570.9 L370.0 569.0 L380.0 567.2 L390.0 565.4 L400.0 563.6 L410.0 562.0 L420.0 560.4 L430.0 559.6 L440.0 559.0 L450.0 558.4 L460.0 558.0 L470.0 557.7 L480.0 557.5 L490.0 555.4 L500.0 553.5 L510.0 551.5 L520.0 549.6 L530.0 547.7 L540.0 546.0 L550.0 544.4 L560.0 542.9 L570.0 541.7 L580.0 540.6 L590.0 539.8 L600.0 539.1 L610.0 538.5 L620.0 538.1 L630.0 537.2 L640.0 536.4 L650.0 535.7 L660.0 535.0 L670.0 534.3 L680.0 533.7 L690.0 533.0 L700.0 532.4 L710.0 531.7 L720.0 531.0 L730.0 530.3 L740.0 529.6 L750.0 528.9 L760.0 528.3 L770.0 527.3 L780.0 526.5 L790.0 525.6 L800.0 524.7 L810.0 523.8 L820.0 522.9 L830.0 522.1 L840.0 521.2 L850.0 520.3 L860.0 519.5 L870.0 518.6 L880.0 517.7 L890.0 516.9 L900.0 516.0 L910.0 515.2 L920.0 514.3 L930.0 513.5 L940.0 512.6 L950.0 511.8 L960.0 510.9 L970.0 510.1 L980.0 509.3 L990.0 508.4 L1000.0 507.6 L1010.0 506.6 L1020.0 505.6 L1030.0 504.6 L1040.0 503.6 L1050.0 502.7 L1060.0 501.7 L1070.0 500.8 L1080.0 499.9 L1090.0 498.9 L1100.0 498.0M150.0 634.5 L160.0 632.7 L170.0 630.9 L180.0 629.1 L190.0 627.2 L200.0 625.3 L210.0 623.2 L220.0 621.1 L230.0 619.0 L240.0 616.9 L250.0 614.7 L260.0 612.4 L270.0 610.0 L280.0 607.7 L290.0 605.2 L300.0 602.8 L310.0 601.2 L320.0 599.6 L330.0 597.9 L340.0 596.2 L350.0 594.5 L360.0 592.8 L370.0 591.1 L380.0 589.5 L390.0 587.8 L400.0 586.3 L410.0 584.8 L420.0 583.4 L430.0 582.9 L440.0 582.5 L450.0 582.2 L460.0 582.0 L470.0 581.9 L480.0 582.0 L490.0 580.0 L500.0 578.1 L510.0 576.2 L520.0 574.3 L530.0 572.5 L540.0 570.8 L550.0 569.2 L560.0 567.8 L570.0 566.6 L580.0 565.6 L590.0 564.8 L600.0 564.2 L610.0 563.7 L620.0 563.3 L630.0 562.4 L640.0 561.6 L650.0 560.9 L660.0 560.2 L670.0 559.5 L680.0 558.9 L690.0 558.2 L700.0 557.6 L710.0 556.9 L720.0 556.2 L730.0 555.5 L740.0 554.8 L750.0 554.1 L760.0 553.5 L770.0 552.5 L780.0 551.6 L790.0 550.7 L800.0 549.8 L810.0 548.9 L820.0 548.0 L830.0 547.1 L840.0 546.2 L850.0 545.3 L860.0 544.4 L870.0 543.5 L880.0 542.6 L890.0 541.7 L900.0 540.8 L910.0 539.9 L920.0 539.0 L930.0 538.2 L940.0 537.3 L950.0 536.4 L960.0 535.5 L970.0 534.7 L980.0 533.8 L990.0 533.0 L1000.0 532.1 L1010.0 531.0 L1020.0 530.0 L1030.0 528.9 L1040.0 527.9 L1050.0 526.9 L1060.0 525.9 L1070.0 524.9 L1080.0 524.0 L1090.0 523.0 L1100.0 522.0M150.0 654.0 L160.0 652.3 L170.0 650.6 L180.0 648.8 L190.0 647.0 L200.0 645.2 L210.0 643.2 L220.0 641.1 L230.0 639.2 L240.0 637.1 L250.0 635.0 L260.0 632.8 L270.0 630.5 L280.0 628.3 L290.0 625.9 L300.0 623.6 L310.0 622.2 L320.0 620.8 L330.0 619.3 L340.0 617.8 L350.0 616.2 L360.0 614.7 L370.0 613.2 L380.0 611.7 L390.0 610.3 L400.0 608.9 L410.0 607.6 L420.0 606.4 L430.0 606.1 L440.0 606.0 L450.0 605.9 L460.0 606.0 L470.0 606.2 L480.0 606.5 L490.0 604.5 L500.0 602.7 L510.0 600.8 L520.0 599.0 L530.0 597.2 L540.0 595.6 L550.0 594.1 L560.0 592.7 L570.0 591.6 L580.0 590.6 L590.0 589.9 L600.0 589.3 L610.0 588.8 L620.0 588.5 L630.0 587.6 L640.0 586.8 L650.0 586.1 L660.0 585.4 L670.0 584.7 L680.0 584.1 L690.0 583.4 L700.0 582.8 L710.0 582.1 L720.0 581.4 L730.0 580.7 L740.0 580.0 L750.0 579.3 L760.0 578.7 L770.0 577.7 L780.0 576.7 L790.0 575.8 L800.0 574.9 L810.0 573.9 L820.0 573.0 L830.0 572.1 L840.0 571.1 L850.0 570.2 L860.0 569.3 L870.0 568.4 L880.0 567.4 L890.0 566.5 L900.0 565.6 L910.0 564.7 L920.0 563.8 L930.0 562.9 L940.0 562.0 L950.0 561.1 L960.0 560.2 L970.0 559.3 L980.0 558.4 L990.0 557.5 L1000.0 556.6 L1010.0 555.5 L1020.0 554.4 L1030.0 553.3 L1040.0 552.2 L1050.0 551.2 L1060.0 550.1 L1070.0 549.1 L1080.0 548.1 L1090.0 547.0 L1100.0 546.0M150.0 673.5 L160.0 671.8 L170.0 670.2 L180.0 668.5 L190.0 666.8 L200.0 665.0 L210.0 663.1 L220.0 661.1 L230.0 659.3 L240.0 657.3 L250.0 655.3 L260.0 653.2 L270.0 651.1 L280.0 648.9 L290.0 646.6 L300.0 644.4 L310.0 643.2 L320.0 641.9 L330.0 640.6 L340.0 639.3 L350.0 638.0 L360.0 636.6 L370.0 635.3 L380.0 634.0 L390.0 632.7 L400.0 631.5 L410.0 630.4 L420.0 629.4 L430.0 629.4 L440.0 629.5 L450.0 629.7 L460.0 630.0 L470.0 630.4 L480.0 631.0 L490.0 629.1 L500.0 627.3 L510.0 625.5 L520.0 623.7 L530.0 622.0 L540.0 620.4 L550.0 618.9 L560.0 617.6 L570.0 616.5 L580.0 615.6 L590.0 614.9 L600.0 614.4 L610.0 614.0 L620.0 613.7 L630.0 612.8 L640.0 612.0 L650.0 611.3 L660.0 610.6 L670.0 609.9 L680.0 609.3 L690.0 608.6 L700.0 608.0 L710.0 607.3 L720.0 606.6 L730.0 605.9 L740.0 605.2 L750.0 604.5 L760.0 603.9 L770.0 602.9 L780.0 601.9 L790.0 600.9 L800.0 599.9 L810.0 599.0 L820.0 598.0 L830.0 597.0 L840.0 596.1 L850.0 595.1 L860.0 594.2 L870.0 593.2 L880.0 592.3 L890.0 591.3 L900.0 590.4 L910.0 589.5 L920.0 588.5 L930.0 587.6 L940.0 586.6 L950.0 585.7 L960.0 584.8 L970.0 583.9 L980.0 582.9 L990.0 582.0 L1000.0 581.1 L1010.0 579.9 L1020.0 578.8 L1030.0 577.6 L1040.0 576.5 L1050.0 575.4 L1060.0 574.3 L1070.0 573.2 L1080.0 572.2 L1090.0 571.1 L1100.0 570.0" fill="none" stroke="#1a1a30" stroke-width="1"/></g>
<g clip-path="url(#cMid)"><path d="M150.0 431.0 L160.0 428.3 L170.0 425.6 L180.0 422.8 L190.0 420.1 L200.0 417.2 L210.0 414.2 L220.0 411.1 L230.0 407.9 L240.0 404.6 L250.0 400.9 L260.0 397.2 L270.0 393.3 L280.0 389.4 L290.0 385.5 L300.0 381.6 L310.0 377.6 L320.0 373.5 L330.0 369.4 L340.0 365.3 L350.0 361.1 L360.0 357.0 L370.0 352.8 L380.0 348.7 L390.0 344.7 L400.0 340.7 L410.0 336.7 L420.0 332.9 L430.0 329.2 L440.0 325.7 L450.0 322.2 L460.0 318.8 L470.0 315.6 L480.0 312.5 L490.0 309.9 L500.0 307.5 L510.0 305.0 L520.0 302.6 L530.0 300.2 L540.0 298.0 L550.0 295.9 L560.0 293.9 L570.0 292.2 L580.0 290.6 L590.0 289.3 L600.0 288.1 L610.0 287.0 L620.0 286.1 L630.0 285.2 L640.0 284.4 L650.0 283.7 L660.0 283.0 L670.0 282.3 L680.0 281.7 L690.0 281.0 L700.0 280.4 L710.0 279.7 L720.0 279.0 L730.0 278.3 L740.0 277.6 L750.0 276.9 L760.0 276.3 L770.0 275.6 L780.0 275.0 L790.0 274.4 L800.0 273.9 L810.0 273.3 L820.0 272.7 L830.0 272.1 L840.0 271.5 L850.0 271.0 L860.0 270.4 L870.0 269.8 L880.0 269.2 L890.0 268.7 L900.0 268.1 L910.0 267.5 L920.0 267.0 L930.0 266.4 L940.0 265.9 L950.0 265.3 L960.0 264.8 L970.0 264.2 L980.0 263.7 L990.0 263.1 L1000.0 262.6 L1010.0 262.1 L1020.0 261.6 L1030.0 261.1 L1040.0 260.6 L1050.0 260.2 L1060.0 259.7 L1070.0 259.3 L1080.0 258.9 L1090.0 258.4 L1100.0 258.0M150.0 450.5 L160.0 447.8 L170.0 445.2 L180.0 442.6 L190.0 439.9 L200.0 437.1 L210.0 434.2 L220.0 431.1 L230.0 428.0 L240.0 424.8 L250.0 421.3 L260.0 417.6 L270.0 413.8 L280.0 410.0 L290.0 406.2 L300.0 402.4 L310.0 398.6 L320.0 394.7 L330.0 390.8 L340.0 386.8 L350.0 382.8 L360.0 378.9 L370.0 374.9 L380.0 371.0 L390.0 367.1 L400.0 363.3 L410.0 359.6 L420.0 355.9 L430.0 352.5 L440.0 349.2 L450.0 345.9 L460.0 342.8 L470.0 339.9 L480.0 337.0 L490.0 334.5 L500.0 332.1 L510.0 329.7 L520.0 327.3 L530.0 325.0 L540.0 322.8 L550.0 320.7 L560.0 318.8 L570.0 317.1 L580.0 315.6 L590.0 314.3 L600.0 313.2 L610.0 312.2 L620.0 311.3 L630.0 310.4 L640.0 309.6 L650.0 308.9 L660.0 308.2 L670.0 307.5 L680.0 306.9 L690.0 306.2 L700.0 305.6 L710.0 304.9 L720.0 304.2 L730.0 303.5 L740.0 302.8 L750.0 302.1 L760.0 301.5 L770.0 300.8 L780.0 300.2 L790.0 299.6 L800.0 298.9 L810.0 298.3 L820.0 297.7 L830.0 297.1 L840.0 296.5 L850.0 295.9 L860.0 295.3 L870.0 294.7 L880.0 294.1 L890.0 293.5 L900.0 292.9 L910.0 292.3 L920.0 291.7 L930.0 291.1 L940.0 290.5 L950.0 290.0 L960.0 289.4 L970.0 288.8 L980.0 288.2 L990.0 287.7 L1000.0 287.1 L1010.0 286.5 L1020.0 286.0 L1030.0 285.4 L1040.0 284.9 L1050.0 284.4 L1060.0 283.9 L1070.0 283.4 L1080.0 283.0 L1090.0 282.5 L1100.0 282.0M150.0 470.0 L160.0 467.4 L170.0 464.9 L180.0 462.3 L190.0 459.7 L200.0 456.9 L210.0 454.1 L220.0 451.2 L230.0 448.1 L240.0 445.0 L250.0 441.6 L260.0 438.0 L270.0 434.3 L280.0 430.6 L290.0 426.9 L300.0 423.2 L310.0 419.6 L320.0 415.9 L330.0 412.1 L340.0 408.3 L350.0 404.6 L360.0 400.8 L370.0 397.0 L380.0 393.3 L390.0 389.6 L400.0 385.9 L410.0 382.4 L420.0 378.9 L430.0 375.7 L440.0 372.7 L450.0 369.7 L460.0 366.8 L470.0 364.1 L480.0 361.5 L490.0 359.0 L500.0 356.7 L510.0 354.3 L520.0 352.0 L530.0 349.7 L540.0 347.6 L550.0 345.6 L560.0 343.7 L570.0 342.1 L580.0 340.6 L590.0 339.4 L600.0 338.3 L610.0 337.3 L620.0 336.5 L630.0 335.6 L640.0 334.8 L650.0 334.1 L660.0 333.4 L670.0 332.7 L680.0 332.1 L690.0 331.4 L700.0 330.8 L710.0 330.1 L720.0 329.4 L730.0 328.7 L740.0 328.0 L750.0 327.3 L760.0 326.7 L770.0 326.0 L780.0 325.3 L790.0 324.7 L800.0 324.0 L810.0 323.4 L820.0 322.7 L830.0 322.1 L840.0 321.5 L850.0 320.8 L860.0 320.2 L870.0 319.6 L880.0 318.9 L890.0 318.3 L900.0 317.7 L910.0 317.1 L920.0 316.4 L930.0 315.8 L940.0 315.2 L950.0 314.6 L960.0 314.0 L970.0 313.4 L980.0 312.8 L990.0 312.2 L1000.0 311.6 L1010.0 311.0 L1020.0 310.4 L1030.0 309.8 L1040.0 309.2 L1050.0 308.7 L1060.0 308.1 L1070.0 307.6 L1080.0 307.1 L1090.0 306.5 L1100.0 306.0M150.0 489.5 L160.0 487.0 L170.0 484.5 L180.0 482.0 L190.0 479.4 L200.0 476.8 L210.0 474.1 L220.0 471.2 L230.0 468.2 L240.0 465.2 L250.0 461.9 L260.0 458.4 L270.0 454.8 L280.0 451.3 L290.0 447.6 L300.0 444.0 L310.0 440.5 L320.0 437.0 L330.0 433.5 L340.0 429.9 L350.0 426.3 L360.0 422.7 L370.0 419.1 L380.0 415.5 L390.0 412.0 L400.0 408.6 L410.0 405.2 L420.0 401.9 L430.0 399.0 L440.0 396.2 L450.0 393.4 L460.0 390.8 L470.0 388.4 L480.0 386.0 L490.0 383.6 L500.0 381.3 L510.0 379.0 L520.0 376.7 L530.0 374.5 L540.0 372.4 L550.0 370.4 L560.0 368.6 L570.0 367.0 L580.0 365.6 L590.0 364.4 L600.0 363.4 L610.0 362.5 L620.0 361.7 L630.0 360.8 L640.0 360.0 L650.0 359.3 L660.0 358.6 L670.0 357.9 L680.0 357.3 L690.0 356.6 L700.0 356.0 L710.0 355.3 L720.0 354.6 L730.0 353.9 L740.0 353.2 L750.0 352.5 L760.0 351.9 L770.0 351.1 L780.0 350.5 L790.0 349.8 L800.0 349.1 L810.0 348.4 L820.0 347.8 L830.0 347.1 L840.0 346.4 L850.0 345.8 L860.0 345.1 L870.0 344.4 L880.0 343.8 L890.0 343.1 L900.0 342.5 L910.0 341.8 L920.0 341.2 L930.0 340.5 L940.0 339.9 L950.0 339.2 L960.0 338.6 L970.0 338.0 L980.0 337.3 L990.0 336.7 L1000.0 336.1 L1010.0 335.4 L1020.0 334.8 L1030.0 334.1 L1040.0 333.5 L1050.0 332.9 L1060.0 332.3 L1070.0 331.7 L1080.0 331.2 L1090.0 330.6 L1100.0 330.0M150.0 509.0 L160.0 506.6 L170.0 504.2 L180.0 501.7 L190.0 499.2 L200.0 496.7 L210.0 494.0 L220.0 491.2 L230.0 488.4 L240.0 485.4 L250.0 482.2 L260.0 478.8 L270.0 475.3 L280.0 471.9 L290.0 468.3 L300.0 464.8 L310.0 461.5 L320.0 458.2 L330.0 454.8 L340.0 451.4 L350.0 448.0 L360.0 444.6 L370.0 441.2 L380.0 437.8 L390.0 434.5 L400.0 431.2 L410.0 428.0 L420.0 424.9 L430.0 422.2 L440.0 419.7 L450.0 417.2 L460.0 414.8 L470.0 412.6 L480.0 410.5 L490.0 408.1 L500.0 405.9 L510.0 403.6 L520.0 401.4 L530.0 399.2 L540.0 397.2 L550.0 395.3 L560.0 393.5 L570.0 392.0 L580.0 390.6 L590.0 389.5 L600.0 388.5 L610.0 387.6 L620.0 386.9 L630.0 386.0 L640.0 385.2 L650.0 384.5 L660.0 383.8 L670.0 383.1 L680.0 382.5 L690.0 381.8 L700.0 381.2 L710.0 380.5 L720.0 379.8 L730.0 379.1 L740.0 378.4 L750.0 377.7 L760.0 377.1 L770.0 376.3 L780.0 375.6 L790.0 374.9 L800.0 374.2 L810.0 373.5 L820.0 372.8 L830.0 372.1 L840.0 371.4 L850.0 370.7 L860.0 370.0 L870.0 369.3 L880.0 368.6 L890.0 368.0 L900.0 367.3 L910.0 366.6 L920.0 365.9 L930.0 365.2 L940.0 364.6 L950.0 363.9 L960.0 363.2 L970.0 362.6 L980.0 361.9 L990.0 361.2 L1000.0 360.6 L1010.0 359.9 L1020.0 359.2 L1030.0 358.5 L1040.0 357.8 L1050.0 357.2 L1060.0 356.5 L1070.0 355.9 L1080.0 355.3 L1090.0 354.6 L1100.0 354.0M150.0 528.5 L160.0 526.1 L170.0 523.8 L180.0 521.5 L190.0 519.0 L200.0 516.5 L210.0 514.0 L220.0 511.2 L230.0 508.5 L240.0 505.6 L250.0 502.5 L260.0 499.2 L270.0 495.9 L280.0 492.5 L290.0 489.0 L300.0 485.6 L310.0 482.5 L320.0 479.4 L330.0 476.2 L340.0 472.9 L350.0 469.7 L360.0 466.5 L370.0 463.3 L380.0 460.1 L390.0 456.9 L400.0 453.8 L410.0 450.8 L420.0 447.9 L430.0 445.5 L440.0 443.2 L450.0 440.9 L460.0 438.8 L470.0 436.9 L480.0 435.0 L490.0 432.7 L500.0 430.5 L510.0 428.3 L520.0 426.1 L530.0 424.0 L540.0 422.0 L550.0 420.1 L560.0 418.4 L570.0 416.9 L580.0 415.6 L590.0 414.5 L600.0 413.6 L610.0 412.8 L620.0 412.1 L630.0 411.2 L640.0 410.4 L650.0 409.7 L660.0 409.0 L670.0 408.3 L680.0 407.7 L690.0 407.0 L700.0 406.4 L710.0 405.7 L720.0 405.0 L730.0 404.3 L740.0 403.6 L750.0 402.9 L760.0 402.3 L770.0 401.5 L780.0 400.7 L790.0 400.0 L800.0 399.3 L810.0 398.5 L820.0 397.8 L830.0 397.1 L840.0 396.4 L850.0 395.6 L860.0 394.9 L870.0 394.2 L880.0 393.5 L890.0 392.8 L900.0 392.1 L910.0 391.4 L920.0 390.6 L930.0 389.9 L940.0 389.2 L950.0 388.5 L960.0 387.8 L970.0 387.2 L980.0 386.5 L990.0 385.8 L1000.0 385.1 L1010.0 384.3 L1020.0 383.6 L1030.0 382.8 L1040.0 382.1 L1050.0 381.4 L1060.0 380.7 L1070.0 380.0 L1080.0 379.4 L1090.0 378.7 L1100.0 378.0M150.0 548.0 L160.0 545.7 L170.0 543.5 L180.0 541.2 L190.0 538.8 L200.0 536.4 L210.0 533.9 L220.0 531.2 L230.0 528.6 L240.0 525.9 L250.0 522.8 L260.0 519.6 L270.0 516.4 L280.0 513.1 L290.0 509.7 L300.0 506.4 L310.0 503.5 L320.0 500.5 L330.0 497.5 L340.0 494.5 L350.0 491.4 L360.0 488.4 L370.0 485.3 L380.0 482.3 L390.0 479.4 L400.0 476.5 L410.0 473.6 L420.0 470.9 L430.0 468.7 L440.0 466.7 L450.0 464.7 L460.0 462.8 L470.0 461.1 L480.0 459.5 L490.0 457.2 L500.0 455.1 L510.0 452.9 L520.0 450.8 L530.0 448.7 L540.0 446.8 L550.0 445.0 L560.0 443.3 L570.0 441.9 L580.0 440.6 L590.0 439.6 L600.0 438.7 L610.0 437.9 L620.0 437.3 L630.0 436.4 L640.0 435.6 L650.0 434.9 L660.0 434.2 L670.0 433.5 L680.0 432.9 L690.0 432.2 L700.0 431.6 L710.0 430.9 L720.0 430.2 L730.0 429.5 L740.0 428.8 L750.0 428.1 L760.0 427.5 L770.0 426.7 L780.0 425.9 L790.0 425.1 L800.0 424.4 L810.0 423.6 L820.0 422.8 L830.0 422.1 L840.0 421.3 L850.0 420.6 L860.0 419.8 L870.0 419.1 L880.0 418.3 L890.0 417.6 L900.0 416.9 L910.0 416.1 L920.0 415.4 L930.0 414.6 L940.0 413.9 L950.0 413.2 L960.0 412.5 L970.0 411.7 L980.0 411.0 L990.0 410.3 L1000.0 409.6 L1010.0 408.8 L1020.0 408.0 L1030.0 407.2 L1040.0 406.4 L1050.0 405.7 L1060.0 404.9 L1070.0 404.2 L1080.0 403.5 L1090.0 402.7 L1100.0 402.0M150.0 567.5 L160.0 565.3 L170.0 563.1 L180.0 560.9 L190.0 558.6 L200.0 556.3 L210.0 553.8 L220.0 551.3 L230.0 548.7 L240.0 546.1 L250.0 543.1 L260.0 540.0 L270.0 536.9 L280.0 533.7 L290.0 530.4 L300.0 527.2 L310.0 524.5 L320.0 521.7 L330.0 518.9 L340.0 516.0 L350.0 513.1 L360.0 510.3 L370.0 507.4 L380.0 504.6 L390.0 501.8 L400.0 499.1 L410.0 496.5 L420.0 493.9 L430.0 492.0 L440.0 490.2 L450.0 488.4 L460.0 486.8 L470.0 485.4 L480.0 484.0 L490.0 481.8 L500.0 479.7 L510.0 477.6 L520.0 475.5 L530.0 473.5 L540.0 471.6 L550.0 469.8 L560.0 468.2 L570.0 466.8 L580.0 465.6 L590.0 464.6 L600.0 463.8 L610.0 463.1 L620.0 462.5 L630.0 461.6 L640.0 460.8 L650.0 460.1 L660.0 459.4 L670.0 458.7 L680.0 458.1 L690.0 457.4 L700.0 456.8 L710.0 456.1 L720.0 455.4 L730.0 454.7 L740.0 454.0 L750.0 453.3 L760.0 452.7 L770.0 451.8 L780.0 451.0 L790.0 450.2 L800.0 449.4 L810.0 448.6 L820.0 447.9 L830.0 447.1 L840.0 446.3 L850.0 445.5 L860.0 444.7 L870.0 444.0 L880.0 443.2 L890.0 442.4 L900.0 441.6 L910.0 440.9 L920.0 440.1 L930.0 439.4 L940.0 438.6 L950.0 437.8 L960.0 437.1 L970.0 436.3 L980.0 435.6 L990.0 434.8 L1000.0 434.1 L1010.0 433.2 L1020.0 432.4 L1030.0 431.5 L1040.0 430.7 L1050.0 429.9 L1060.0 429.1 L1070.0 428.3 L1080.0 427.6 L1090.0 426.8 L1100.0 426.0M150.0 587.0 L160.0 584.9 L170.0 582.7 L180.0 580.6 L190.0 578.4 L200.0 576.1 L210.0 573.8 L220.0 571.3 L230.0 568.8 L240.0 566.3 L250.0 563.4 L260.0 560.4 L270.0 557.4 L280.0 554.3 L290.0 551.1 L300.0 548.0 L310.0 545.5 L320.0 542.9 L330.0 540.2 L340.0 537.5 L350.0 534.9 L360.0 532.2 L370.0 529.5 L380.0 526.9 L390.0 524.3 L400.0 521.7 L410.0 519.3 L420.0 516.9 L430.0 515.2 L440.0 513.7 L450.0 512.2 L460.0 510.8 L470.0 509.6 L480.0 508.5 L490.0 506.3 L500.0 504.3 L510.0 502.2 L520.0 500.2 L530.0 498.2 L540.0 496.4 L550.0 494.7 L560.0 493.1 L570.0 491.8 L580.0 490.6 L590.0 489.7 L600.0 488.9 L610.0 488.2 L620.0 487.7 L630.0 486.8 L640.0 486.0 L650.0 485.3 L660.0 484.6 L670.0 483.9 L680.0 483.3 L690.0 482.6 L700.0 482.0 L710.0 481.3 L720.0 480.6 L730.0 479.9 L740.0 479.2 L750.0 478.5 L760.0 477.9 L770.0 477.0 L780.0 476.2 L790.0 475.3 L800.0 474.5 L810.0 473.7 L820.0 472.9 L830.0 472.1 L840.0 471.3 L850.0 470.5 L860.0 469.6 L870.0 468.8 L880.0 468.0 L890.0 467.2 L900.0 466.4 L910.0 465.6 L920.0 464.8 L930.0 464.1 L940.0 463.3 L950.0 462.5 L960.0 461.7 L970.0 460.9 L980.0 460.1 L990.0 459.4 L1000.0 458.6 L1010.0 457.7 L1020.0 456.8 L1030.0 455.9 L1040.0 455.0 L1050.0 454.2 L1060.0 453.3 L1070.0 452.5 L1080.0 451.7 L1090.0 450.8 L1100.0 450.0M150.0 606.5 L160.0 604.4 L170.0 602.4 L180.0 600.3 L190.0 598.2 L200.0 596.0 L210.0 593.7 L220.0 591.3 L230.0 588.9 L240.0 586.5 L250.0 583.8 L260.0 580.8 L270.0 577.9 L280.0 574.9 L290.0 571.8 L300.0 568.8 L310.0 566.4 L320.0 564.0 L330.0 561.6 L340.0 559.1 L350.0 556.6 L360.0 554.1 L370.0 551.6 L380.0 549.1 L390.0 546.7 L400.0 544.4 L410.0 542.1 L420.0 539.9 L430.0 538.5 L440.0 537.2 L450.0 535.9 L460.0 534.8 L470.0 533.9 L480.0 533.0 L490.0 530.9 L500.0 528.9 L510.0 526.9 L520.0 524.9 L530.0 523.0 L540.0 521.2 L550.0 519.5 L560.0 518.0 L570.0 516.7 L580.0 515.6 L590.0 514.7 L600.0 514.0 L610.0 513.4 L620.0 512.9 L630.0 512.0 L640.0 511.2 L650.0 510.5 L660.0 509.8 L670.0 509.1 L680.0 508.5 L690.0 507.8 L700.0 507.2 L710.0 506.5 L720.0 505.8 L730.0 505.1 L740.0 504.4 L750.0 503.7 L760.0 503.1 L770.0 502.2 L780.0 501.3 L790.0 500.5 L800.0 499.6 L810.0 498.8 L820.0 497.9 L830.0 497.1 L840.0 496.2 L850.0 495.4 L860.0 494.6 L870.0 493.7 L880.0 492.9 L890.0 492.1 L900.0 491.2 L910.0 490.4 L920.0 489.6 L930.0 488.8 L940.0 487.9 L950.0 487.1 L960.0 486.3 L970.0 485.5 L980.0 484.7 L990.0 483.9 L1000.0 483.1 L1010.0 482.1 L1020.0 481.2 L1030.0 480.2 L1040.0 479.3 L1050.0 478.4 L1060.0 477.5 L1070.0 476.6 L1080.0 475.8 L1090.0 474.9 L1100.0 474.0M150.0 626.0 L160.0 624.0 L170.0 622.0 L180.0 620.1 L190.0 618.0 L200.0 615.9 L210.0 613.7 L220.0 611.3 L230.0 609.1 L240.0 606.7 L250.0 604.1 L260.0 601.3 L270.0 598.4 L280.0 595.5 L290.0 592.6 L300.0 589.6 L310.0 587.4 L320.0 585.2 L330.0 582.9 L340.0 580.6 L350.0 578.3 L360.0 576.0 L370.0 573.7 L380.0 571.4 L390.0 569.2 L400.0 567.0 L410.0 564.9 L420.0 562.9 L430.0 561.7 L440.0 560.7 L450.0 559.7 L460.0 558.8 L470.0 558.1 L480.0 557.5 L490.0 555.4 L500.0 553.5 L510.0 551.5 L520.0 549.6 L530.0 547.7 L540.0 546.0 L550.0 544.4 L560.0 542.9 L570.0 541.7 L580.0 540.6 L590.0 539.8 L600.0 539.1 L610.0 538.5 L620.0 538.1 L630.0 537.2 L640.0 536.4 L650.0 535.7 L660.0 535.0 L670.0 534.3 L680.0 533.7 L690.0 533.0 L700.0 532.4 L710.0 531.7 L720.0 531.0 L730.0 530.3 L740.0 529.6 L750.0 528.9 L760.0 528.3 L770.0 527.3 L780.0 526.5 L790.0 525.6 L800.0 524.7 L810.0 523.8 L820.0 522.9 L830.0 522.1 L840.0 521.2 L850.0 520.3 L860.0 519.5 L870.0 518.6 L880.0 517.7 L890.0 516.9 L900.0 516.0 L910.0 515.2 L920.0 514.3 L930.0 513.5 L940.0 512.6 L950.0 511.8 L960.0 510.9 L970.0 510.1 L980.0 509.3 L990.0 508.4 L1000.0 507.6 L1010.0 506.6 L1020.0 505.6 L1030.0 504.6 L1040.0 503.6 L1050.0 502.7 L1060.0 501.7 L1070.0 500.8 L1080.0 499.9 L1090.0 498.9 L1100.0 498.0M150.0 645.5 L160.0 643.6 L170.0 641.7 L180.0 639.8 L190.0 637.8 L200.0 635.8 L210.0 633.6 L220.0 631.3 L230.0 629.2 L240.0 626.9 L250.0 624.4 L260.0 621.7 L270.0 618.9 L280.0 616.1 L290.0 613.3 L300.0 610.4 L310.0 608.4 L320.0 606.4 L330.0 604.3 L340.0 602.1 L350.0 600.0 L360.0 597.9 L370.0 595.8 L380.0 593.7 L390.0 591.6 L400.0 589.6 L410.0 587.7 L420.0 585.9 L430.0 585.0 L440.0 584.2 L450.0 583.4 L460.0 582.8 L470.0 582.4 L480.0 582.0 L490.0 580.0 L500.0 578.1 L510.0 576.2 L520.0 574.3 L530.0 572.5 L540.0 570.8 L550.0 569.2 L560.0 567.8 L570.0 566.6 L580.0 565.6 L590.0 564.8 L600.0 564.2 L610.0 563.7 L620.0 563.3 L630.0 562.4 L640.0 561.6 L650.0 560.9 L660.0 560.2 L670.0 559.5 L680.0 558.9 L690.0 558.2 L700.0 557.6 L710.0 556.9 L720.0 556.2 L730.0 555.5 L740.0 554.8 L750.0 554.1 L760.0 553.5 L770.0 552.5 L780.0 551.6 L790.0 550.7 L800.0 549.8 L810.0 548.9 L820.0 548.0 L830.0 547.1 L840.0 546.2 L850.0 545.3 L860.0 544.4 L870.0 543.5 L880.0 542.6 L890.0 541.7 L900.0 540.8 L910.0 539.9 L920.0 539.0 L930.0 538.2 L940.0 537.3 L950.0 536.4 L960.0 535.5 L970.0 534.7 L980.0 533.8 L990.0 533.0 L1000.0 532.1 L1010.0 531.0 L1020.0 530.0 L1030.0 528.9 L1040.0 527.9 L1050.0 526.9 L1060.0 525.9 L1070.0 524.9 L1080.0 524.0 L1090.0 523.0 L1100.0 522.0M150.0 665.0 L160.0 663.2 L170.0 661.3 L180.0 659.5 L190.0 657.6 L200.0 655.6 L210.0 653.5 L220.0 651.4 L230.0 649.3 L240.0 647.1 L250.0 644.7 L260.0 642.1 L270.0 639.4 L280.0 636.7 L290.0 634.0 L300.0 631.2 L310.0 629.4 L320.0 627.5 L330.0 625.6 L340.0 623.7 L350.0 621.7 L360.0 619.8 L370.0 617.8 L380.0 615.9 L390.0 614.1 L400.0 612.3 L410.0 610.5 L420.0 608.9 L430.0 608.2 L440.0 607.7 L450.0 607.2 L460.0 606.8 L470.0 606.6 L480.0 606.5 L490.0 604.5 L500.0 602.7 L510.0 600.8 L520.0 599.0 L530.0 597.2 L540.0 595.6 L550.0 594.1 L560.0 592.7 L570.0 591.6 L580.0 590.6 L590.0 589.9 L600.0 589.3 L610.0 588.8 L620.0 588.5 L630.0 587.6 L640.0 586.8 L650.0 586.1 L660.0 585.4 L670.0 584.7 L680.0 584.1 L690.0 583.4 L700.0 582.8 L710.0 582.1 L720.0 581.4 L730.0 580.7 L740.0 580.0 L750.0 579.3 L760.0 578.7 L770.0 577.7 L780.0 576.7 L790.0 575.8 L800.0 574.9 L810.0 573.9 L820.0 573.0 L830.0 572.1 L840.0 571.1 L850.0 570.2 L860.0 569.3 L870.0 568.4 L880.0 567.4 L890.0 566.5 L900.0 565.6 L910.0 564.7 L920.0 563.8 L930.0 562.9 L940.0 562.0 L950.0 561.1 L960.0 560.2 L970.0 559.3 L980.0 558.4 L990.0 557.5 L1000.0 556.6 L1010.0 555.5 L1020.0 554.4 L1030.0 553.3 L1040.0 552.2 L1050.0 551.2 L1060.0 550.1 L1070.0 549.1 L1080.0 548.1 L1090.0 547.0 L1100.0 546.0M150.0 684.5 L160.0 682.7 L170.0 681.0 L180.0 679.2 L190.0 677.4 L200.0 675.5 L210.0 673.5 L220.0 671.4 L230.0 669.4 L240.0 667.4 L250.0 665.0 L260.0 662.5 L270.0 659.9 L280.0 657.3 L290.0 654.7 L300.0 652.0 L310.0 650.4 L320.0 648.7 L330.0 647.0 L340.0 645.2 L350.0 643.4 L360.0 641.7 L370.0 639.9 L380.0 638.2 L390.0 636.5 L400.0 634.9 L410.0 633.4 L420.0 631.9 L430.0 631.5 L440.0 631.2 L450.0 630.9 L460.0 630.8 L470.0 630.9 L480.0 631.0 L490.0 629.1 L500.0 627.3 L510.0 625.5 L520.0 623.7 L530.0 622.0 L540.0 620.4 L550.0 618.9 L560.0 617.6 L570.0 616.5 L580.0 615.6 L590.0 614.9 L600.0 614.4 L610.0 614.0 L620.0 613.7 L630.0 612.8 L640.0 612.0 L650.0 611.3 L660.0 610.6 L670.0 609.9 L680.0 609.3 L690.0 608.6 L700.0 608.0 L710.0 607.3 L720.0 606.6 L730.0 605.9 L740.0 605.2 L750.0 604.5 L760.0 603.9 L770.0 602.9 L780.0 601.9 L790.0 600.9 L800.0 599.9 L810.0 599.0 L820.0 598.0 L830.0 597.0 L840.0 596.1 L850.0 595.1 L860.0 594.2 L870.0 593.2 L880.0 592.3 L890.0 591.3 L900.0 590.4 L910.0 589.5 L920.0 588.5 L930.0 587.6 L940.0 586.6 L950.0 585.7 L960.0 584.8 L970.0 583.9 L980.0 582.9 L990.0 582.0 L1000.0 581.1 L1010.0 579.9 L1020.0 578.8 L1030.0 577.6 L1040.0 576.5 L1050.0 575.4 L1060.0 574.3 L1070.0 573.2 L1080.0 572.2 L1090.0 571.1 L1100.0 570.0" fill="none" stroke="#1a1a30" stroke-width="1"/></g>
<g clip-path="url(#cAll)"><path d="M225.0 383.7 L228.9 433.5 L232.0 481.9 L238.0 486.6M248.7 379.5 L251.9 427.4 L254.4 473.9 L261.4 478.1M272.3 375.1 L274.7 421.5 L276.6 466.3 L285.1 470.0M296.5 370.3 L298.2 415.4 L299.5 458.9 L308.8 461.9M320.8 364.2 L321.5 407.7 L322.0 449.8 L334.3 450.6M344.8 357.4 L345.4 399.0 L345.8 439.0 L359.8 439.6M370.8 347.6 L369.7 389.5 L368.8 429.9 L384.0 430.1M396.9 336.5 L396.3 378.6 L395.8 419.2 L410.0 419.4M425.0 325.0 L425.6 366.3 L426.0 406.1 L440.0 405.9M453.1 310.3 L456.0 351.5 L458.3 391.1 L473.0 389.9M484.4 293.2 L490.2 333.3 L494.8 372.0 L508.0 372.1M514.6 276.3 L525.8 315.0 L534.6 352.1 L547.0 353.5M550.4 256.8 L565.6 294.5 L577.6 330.8 L589.0 334.0M586.2 236.7 L608.7 276.3 L626.3 314.4 L636.0 317.7M624.9 216.7 L656.1 257.6 L680.7 297.0 L689.0 300.2M667.9 199.5 L710.5 243.3 L744.0 285.5 L746.0 288.2M724.0 188.2 L781.1 234.0 L826.0 278.3 L828.0 281.3M794.0 178.1 L856.7 226.0 L906.0 272.4 L909.0 274.2M878.0 170.0 L940.7 218.5 L990.0 265.5 L992.0 266.0" fill="none" stroke="#d02020" stroke-width="1"/></g>
<g clip-path="url(#cAll)"><path d="M238.0 486.1 L256.3 520.1 L277.0 554.2 L279.0 555.2M261.4 477.6 L278.6 512.6 L297.9 547.5 L299.9 548.5M285.1 469.5 L302.3 504.3 L321.6 539.0 L323.6 540.1M308.8 461.4 L324.2 496.2 L341.6 531.1 L343.6 532.3M334.3 450.1 L348.9 485.8 L365.3 521.5 L367.3 522.8M359.8 439.1 L370.9 476.8 L383.5 514.4 L385.5 515.8M384.0 429.6 L395.3 468.0 L408.0 506.3 L410.0 508.4M410.0 418.9 L420.8 458.2 L433.0 497.5 L435.0 500.1M440.0 405.4 L454.1 443.9 L470.0 482.5 L472.0 486.5M473.0 389.4 L491.3 427.9 L512.0 466.3 L514.0 472.6M508.0 371.6 L533.4 409.5 L562.0 447.4 L564.0 455.2M547.0 353.0 L575.2 391.4 L607.0 429.8 L609.0 437.3M589.0 333.5 L620.5 373.1 L656.0 412.6 L658.0 419.2M636.0 317.2 L672.7 356.3 L714.0 395.3 L718.0 399.1M689.0 299.7 L727.1 340.7 L770.0 381.7 L774.0 383.9M746.0 287.7 L778.4 331.2 L815.0 374.6 L819.0 376.1M828.0 280.8 L853.9 324.8 L883.0 368.8 L887.0 369.8M909.0 273.7 L929.2 317.3 L952.0 360.8 L956.0 361.1M992.0 265.5 L995.8 311.3 L1000.0 357.0 L1004.0 357.2" fill="none" stroke="#d02020" stroke-width="1"/></g>
<g clip-path="url(#cBot)"><path d="M258.0 558.0 L386.9 617.0M280.0 554.9 L404.1 612.9M279.0 555.2 L403.2 613.2M299.9 548.5 L423.8 607.5M323.6 540.1 L449.3 601.1M343.6 532.3 L473.3 596.3M367.3 522.8 L502.4 590.8M385.5 515.8 L526.3 587.8M410.0 508.4 L553.6 583.4M435.0 500.1 L581.1 578.1M472.0 486.5 L487.8 493.4 L502.9 500.2 L517.5 507.0 L531.4 513.9 L544.7 520.7 L557.4 527.5 L569.4 534.4 L580.9 541.2 L591.7 548.0 L601.9 554.9 L611.5 561.7 L620.5 568.5M514.0 472.6 L529.9 479.8 L545.2 486.9 L559.8 494.1 L573.9 501.3 L587.3 508.4 L600.0 515.6 L612.2 522.8 L623.7 529.9 L634.7 537.1 L644.9 544.3 L654.6 551.4 L663.6 558.6M564.0 455.2 L578.1 463.0 L591.7 470.7 L604.7 478.5 L617.1 486.2 L629.0 494.0 L640.4 501.7 L651.2 509.5 L661.4 517.2 L671.1 525.0 L680.2 532.7 L688.8 540.5 L696.9 548.2M609.0 437.3 L621.8 445.9 L634.2 454.5 L646.0 463.1 L657.4 471.6 L668.2 480.2 L678.5 488.8 L688.3 497.4 L697.7 506.0 L706.5 514.6 L714.8 523.1 L722.6 531.7 L729.9 540.3M658.0 419.2 L669.0 428.4 L679.6 437.7 L689.7 446.9 L699.4 456.2 L708.7 465.4 L717.5 474.7 L725.9 483.9 L733.9 493.2 L741.5 502.4 L748.6 511.7 L755.3 520.9 L761.5 530.2M718.0 399.1 L727.3 408.8 L736.2 418.5 L744.8 428.1 L753.0 437.8 L760.9 447.5 L768.4 457.1 L775.5 466.8 L782.2 476.5 L788.6 486.1 L794.6 495.8 L800.3 505.5 L805.6 515.1M774.0 383.9 L781.6 393.3 L788.8 402.7 L795.8 412.1 L802.5 421.5 L808.9 430.9 L814.9 440.4 L820.7 449.8 L826.2 459.2 L831.4 468.6 L836.3 478.0 L840.9 487.4 L845.2 496.9M819.0 376.1 L824.8 384.8 L830.4 393.5 L835.8 402.1 L840.9 410.8 L845.9 419.5 L850.5 428.1 L855.0 436.8 L859.2 445.5 L863.2 454.1 L867.0 462.8 L870.5 471.5 L873.8 480.1M887.0 369.8 L889.5 375.8 L891.9 381.9 L894.2 388.0 L896.4 394.1 L898.5 400.2 L900.5 406.3 L902.4 412.3 L904.2 418.4 L906.0 424.5 L907.6 430.6 L909.1 436.7 L910.5 442.8M956.0 361.1 L956.0 361.2 L956.0 361.2 L956.1 361.3 L956.1 361.4 L956.1 361.5 L956.1 361.6 L956.1 361.7 L956.2 361.7 L956.2 361.8 L956.2 361.9 L956.2 362.0 L956.2 362.1M1004.0 357.2 L1004.0 357.3 L1004.0 357.4 L1004.1 357.4 L1004.1 357.5 L1004.1 357.6 L1004.1 357.7 L1004.1 357.8 L1004.1 357.9 L1004.2 357.9 L1004.2 358.0 L1004.2 358.1 L1004.2 358.2" fill="none" stroke="#d02020" stroke-width="1"/></g>
<g clip-path="url(#cSkeg)"><path d="M466.6 597.4 L480.1 674.5M495.2 592.4 L509.2 667.1M523.7 587.4 L536.8 657.4M552.3 582.7 L564.4 647.7M581.0 577.1 L592.3 637.9M612.2 570.3 L622.8 627.3M641.7 563.5 L651.6 617.3M663.6 557.2 L673.3 609.7M696.9 548.0 L706.1 598.4M729.9 539.0 L738.8 587.4M761.5 528.9 L770.3 576.8M805.6 514.3 L814.3 561.4M845.2 496.5 L854.4 546.1M873.8 482.3 L883.7 535.6M910.5 468.3 L918.3 511.0M956.2 461.0 L964.8 511.0M1004.2 461.0 L1012.8 511.0" fill="none" stroke="#d02020" stroke-width="1"/></g>
<g clip-path="url(#cSkeg)"><path d="M440.0 607.7 L950.0 503.1M440.0 627.2 L950.0 522.6M440.0 646.7 L950.0 542.1M440.0 666.2 L950.0 561.6" fill="none" stroke="#1a1a30" stroke-width="1"/></g>
<g clip-path="url(#cBot2)"><path d="M540.0 458.0 L570.2 455.2 L613.8 451.1 L660.5 446.7 L700.0 442.8 L729.5 439.6 L754.4 436.6 L777.1 433.8 L800.0 431.0 L823.6 428.2 L846.8 425.3 L869.1 422.6 L890.0 420.0 L910.1 417.5 L929.3 415.0 L946.6 412.7 L961.0 410.7 L971.9 408.9 L979.9 407.3 L985.8 405.9 L990.0 405.0M470.0 500.0 L480.5 497.1 L495.0 492.8 L514.5 488.2 L540.0 484.0 L574.8 480.5 L617.2 477.2 L661.1 473.9 L700.0 470.4 L731.1 466.8 L758.3 463.1 L784.8 459.3 L814.0 455.2 L849.4 450.4 L888.3 445.1 L924.8 440.1 L953.0 436.2 L970.3 433.6 L980.2 431.9 L985.7 430.8 L990.0 430.0M250.0 600.0 L258.8 594.8 L271.2 587.3 L286.7 578.9 L304.5 570.7 L324.6 562.8 L347.2 554.6 L372.6 546.6 L400.6 539.0 L431.9 531.8 L466.3 525.0 L502.7 518.6 L540.0 513.0 L579.6 508.6 L621.6 505.2 L662.8 501.9 L700.0 498.0 L731.5 493.1 L759.1 487.6 L785.7 482.0 L814.0 477.0 L846.4 472.5 L881.0 468.2 L913.6 464.4 L940.0 461.0 L959.0 458.0 L972.9 455.5 L982.8 453.5 L990.0 452.0M300.0 620.0 L310.8 615.6 L326.2 609.2 L344.3 602.0 L363.0 595.3 L382.4 589.1 L403.4 582.9 L425.2 576.7 L447.4 570.7 L468.4 564.9 L489.0 559.3 L511.9 553.7 L540.0 548.0 L575.9 542.2 L617.5 536.4 L660.3 530.5 L700.0 524.7 L736.1 518.8 L770.8 512.7 L803.3 507.0 L833.0 501.8 L859.4 497.4 L883.0 493.5 L904.5 490.0 L924.6 486.6 L944.3 483.2 L963.0 479.9 L978.9 477.0 L990.0 475.0" fill="none" stroke="#1c1c70" stroke-width="1"/></g>
<g clip-path="url(#cTop)"><path d="M745.0 180.0 L700.0 226.0 L620.6 314.7 L573.8 360.0 L520.0 419.8 L480.0 459.0 L430.0 505.0 L390.0 540.0M840.0 170.0 L745.8 277.5 L700.0 329.0 L675.0 360.0 L600.0 432.0 L480.0 513.7 L400.0 560.0M925.0 162.0 L834.7 274.6 L766.0 380.0 L740.5 393.9 L636.3 469.4 L532.0 547.5 L480.0 585.0M1000.0 160.0 L929.0 266.0 L896.0 330.0 L860.5 380.0 L800.0 436.0 L740.0 486.0 L700.0 520.0M234.0 488.3 L385.0 510.2 L520.0 540.0" fill="none" stroke="#5a5a10" stroke-width="0.8" opacity="0.85"/></g>
<g clip-path="url(#cMid)"><path d="M745.0 180.0 L700.0 226.0 L620.6 314.7 L573.8 360.0 L520.0 419.8 L480.0 459.0 L430.0 505.0 L390.0 540.0M840.0 170.0 L745.8 277.5 L700.0 329.0 L675.0 360.0 L600.0 432.0 L480.0 513.7 L400.0 560.0M925.0 162.0 L834.7 274.6 L766.0 380.0 L740.5 393.9 L636.3 469.4 L532.0 547.5 L480.0 585.0M1000.0 160.0 L929.0 266.0 L896.0 330.0 L860.5 380.0 L800.0 436.0 L740.0 486.0 L700.0 520.0M234.0 488.3 L385.0 510.2 L520.0 540.0" fill="none" stroke="#5a5a10" stroke-width="0.8" opacity="0.85"/></g>
<g clip-path="url(#cBot)"><path d="M300.0 590.0 L317.0 583.9 L341.2 575.2 L369.8 565.6 L400.0 557.0 L433.1 549.5 L470.0 542.3 L506.9 535.7 L540.0 530.0 L568.8 525.4 L595.0 521.8 L618.8 518.7 L640.0 516.0 L659.2 513.6 L676.2 511.6 L690.2 510.1 L700.0 509.0M380.0 615.0 L394.4 610.7 L415.0 604.4 L438.1 597.7 L460.0 592.0 L479.5 587.7 L498.8 584.1 L518.6 580.7 L540.0 577.0 L564.5 572.7 L591.2 568.1 L617.3 563.7 L640.0 560.0 L659.2 557.0 L676.2 554.4 L690.2 552.4 L700.0 551.0" fill="none" stroke="#70700a" stroke-width="0.8"/></g>
<g clip-path="url(#cAll)"><path d="M235.0 517.0 L233.3 517.6 L230.2 518.7 L231.6 518.4 L243.2 514.7 L270.4 505.8 L308.7 493.1 L349.7 479.8 L385.0 469.2 L411.8 462.1 L434.9 456.9 L456.7 452.6 L480.0 448.6 L503.7 444.8 L526.9 441.7 L552.7 438.7 L584.0 435.5 L622.2 432.1 L665.6 428.8 L712.2 425.2 L760.0 421.0 L813.7 415.6 L872.7 409.3 L926.9 403.3 L966.4 399.0 L985.7 396.8 L991.1 396.1 L990.0 396.1 L990.0 396.0" fill="none" stroke="#e03030" stroke-width="1"/></g>
</svg>
<svg class="a" style="left:1286px;top:631px" width="32" height="34" viewBox="0 0 32 34"><defs><linearGradient id="cg" x1="0" y1="0" x2="0" y2="1"><stop offset="0" stop-color="#2e4646"/><stop offset="1" stop-color="#000"/></linearGradient></defs><path d="M3 2.5H11.5L12.5 3.5H16.5L17.5 4.5H29.5V32.5H18.5L17.5 31.5H3Z" fill="url(#cg)" stroke="#f4f8f8" stroke-width="1"/><path d="M17.5 18L28 14" stroke="#e020e0" stroke-width="2"/></svg>
<div class="a" style="left:1px;top:128px;width:1px;height:581px;background:#a0a0a0"></div>
<div class="a" style="left:2px;top:128px;width:14px;height:565px;background:#f0f0f0"></div>
<div class="a" style="left:1346px;top:128px;width:16px;height:565px;background:#f0f0f0"></div>
<div class="a" style="left:1362px;top:128px;width:4px;height:581px;background:#a8a8a8"></div>
<div class="a" style="left:2px;top:693px;width:1343px;height:15px;background:#f0f0f0"></div>
<div class="a" style="left:1345px;top:693px;width:15px;height:14px;background:#436464"></div><div class="a" style="left:1360px;top:692px;width:2px;height:16px;background:#f4f4f4"></div>
<div class="a" style="left:0;top:708px;width:1366px;height:1px;background:#d8d8d8"></div>
<svg class="a" style="left:0;top:0" width="1366" height="768">
<path d="M13 165.5H16M1346 165.5H1350" stroke="#111"/>
<path d="M13 187.5H16M1346 187.5H1350" stroke="#111"/>
<path d="M9 210.5H16M1346 210.5H1354" stroke="#111"/>
<path d="M13 232.5H16M1346 232.5H1350" stroke="#111"/>
<path d="M13 254.5H16M1346 254.5H1350" stroke="#111"/>
<path d="M13 299.5H16M1346 299.5H1350" stroke="#111"/>
<path d="M13 321.5H16M1346 321.5H1350" stroke="#111"/>
<path d="M9 343.5H16M1346 343.5H1354" stroke="#111"/>
<path d="M13 366.5H16M1346 366.5H1350" stroke="#111"/>
<path d="M13 388.5H16M1346 388.5H1350" stroke="#111"/>
<path d="M9 410.5H16M1346 410.5H1354" stroke="#111"/>
<path d="M13 432.5H16M1346 432.5H1350" stroke="#111"/>
<path d="M13 455.5H16M1346 455.5H1350" stroke="#111"/>
<path d="M9 477.5H16M1346 477.5H1354" stroke="#111"/>
<path d="M13 499.5H16M1346 499.5H1350" stroke="#111"/>
<path d="M13 522.5H16M1346 522.5H1350" stroke="#111"/>
<path d="M13 566.5H16M1346 566.5H1350" stroke="#111"/>
<path d="M13 589.5H16M1346 589.5H1350" stroke="#111"/>
<path d="M9 611.5H16M1346 611.5H1354" stroke="#111"/>
<path d="M13 633.5H16M1346 633.5H1350" stroke="#111"/>
<path d="M13 656.5H16M1346 656.5H1350" stroke="#111"/>
<path d="M12 276.5H16M1346 276.5H1349" stroke="#111"/>
<path d="M12 544.5H16M1346 544.5H1349" stroke="#111"/>
<path d="M15.5 693V697" stroke="#111"/>
<path d="M70.5 693V697" stroke="#111"/>
<path d="M125.5 693V697" stroke="#111"/>
<path d="M180.5 693V700" stroke="#111"/>
<path d="M234.5 693V697" stroke="#111"/>
<path d="M289.5 693V697" stroke="#111"/>
<path d="M344.5 693V697" stroke="#111"/>
<path d="M399.5 693V697" stroke="#111"/>
<path d="M454.5 693V697" stroke="#111"/>
<path d="M508.5 693V700" stroke="#111"/>
<path d="M563.5 693V697" stroke="#111"/>
<path d="M618.5 693V697" stroke="#111"/>
<path d="M673.5 693V697" stroke="#111"/>
<path d="M728.5 693V697" stroke="#111"/>
<path d="M782.5 693V697" stroke="#111"/>
<path d="M837.5 693V700" stroke="#111"/>
<path d="M892.5 693V697" stroke="#111"/>
<path d="M947.5 693V697" stroke="#111"/>
<path d="M1002.5 693V697" stroke="#111"/>
<path d="M1056.5 693V697" stroke="#111"/>
<path d="M1111.5 693V697" stroke="#111"/>
<path d="M1166.5 693V700" stroke="#111"/>
<path d="M1221.5 693V697" stroke="#111"/>
<path d="M1276.5 693V697" stroke="#111"/>
<path d="M1330.5 693V697" stroke="#111"/>
</svg>
<div class="t" style="left:9px;top:700px;font-size:8px;color:#111;letter-spacing:-0.4px">-180</div>
<div class="t" style="left:338px;top:700px;font-size:8px;color:#111;letter-spacing:-0.4px">-90</div>
<div class="t" style="left:671px;top:700px;font-size:8px;color:#111;letter-spacing:-0.4px">0 Yaw</div>
<div class="t" style="left:997px;top:700px;font-size:8px;color:#111;letter-spacing:-0.4px">90</div>
<div class="t" style="left:1325px;top:700px;font-size:8px;color:#111;letter-spacing:-0.4px">180</div>
<div class="t" style="left:3px;top:138.1px;font-size:8px;color:#111;letter-spacing:-0.4px">-180</div>
<div class="t" style="left:1348px;top:138.1px;font-size:8px;color:#111;letter-spacing:-0.4px">-180</div>
<div class="t" style="left:3px;top:271.9px;font-size:8px;color:#111;letter-spacing:-0.4px">-90</div>
<div class="t" style="left:1350px;top:271.9px;font-size:8px;color:#111;letter-spacing:-0.4px">-90</div>
<div class="t" style="left:3px;top:539.5px;font-size:8px;color:#111;letter-spacing:-0.4px">90</div>
<div class="t" style="left:1352px;top:539.5px;font-size:8px;color:#111;letter-spacing:-0.4px">90</div>
<div class="t" style="left:3px;top:673.3px;font-size:8px;color:#111;letter-spacing:-0.4px">180</div>
<div class="t" style="left:1349px;top:673.3px;font-size:8px;color:#111;letter-spacing:-0.4px">180</div>
<div class="t" style="left:4px;top:408px;font-size:9.5px;color:#111;transform:rotate(-90deg);transform-origin:left top">Pitch</div>
<div class="t" style="left:1348px;top:406px;font-size:9.5px;color:#111;transform:rotate(-90deg);transform-origin:left top">Roll</div>
<div class="a" style="left:4px;top:399px;width:11px;height:10px;background:#dcdcdc;border:1px solid #c4c4c4"></div>
<div class="a" style="left:1348px;top:412px;width:12px;height:10px;background:#dcdcdc;border:1px solid #c4c4c4"></div>
<div class="a" style="left:745px;top:694px;width:10px;height:12px;background:#dcdcdc;border:1px solid #b8b8b8"></div>
<div class="a" style="left:0;top:709px;width:1366px;height:19px;background:#f0f0f0"></div>
<div class="t" style="left:2px;top:714px;font-size:12px;color:#111;transform:scaleX(0.92);transform-origin:left top">Ready</div>
<div class="t" style="left:427px;top:714px;font-size:12px;color:#111;transform:scaleX(0.992);transform-origin:left top">C:\Users\Razmik\Documents\My Works,07092014\Bentley MaxSurf\Modeler Advanced\For Boat Design Forum-New\Pilot vessel L16,5m-mod7.msd*</div>
<div class="a" style="left:1223px;top:711px;width:1px;height:16px;background:#d4d4d4"></div>
<div class="t" style="left:1228px;top:714px;font-size:12px;color:#111">NUM</div>
<div class="a" style="left:1259px;top:711px;width:1px;height:16px;background:#d4d4d4"></div>
<div class="t" style="left:1265px;top:714px;font-size:12px;color:#111;transform:scaleX(0.96);transform-origin:left top">Object Snap: ON</div>
<div class="a" style="left:0;top:728px;width:1366px;height:40px;background:radial-gradient(ellipse 220px 22px at 1060px 8px,rgba(130,195,195,0.35),rgba(130,195,195,0)),radial-gradient(ellipse 260px 26px at 1180px 36px,rgba(120,185,185,0.3),rgba(120,185,185,0)),radial-gradient(ellipse 200px 18px at 760px 20px,rgba(110,170,175,0.18),rgba(110,170,175,0)),linear-gradient(90deg,#2c7983 0%,#307d86 45%,#3b888e 68%,#4a9596 85%,#3f8d91 100%)"></div>
<svg class="a" style="left:11px;top:734px" width="28" height="27" viewBox="0 0 28 27"><path d="M0 3.5L11 2V12.5H0Z M12.5 1.8L27 0V12.5H12.5Z M0 14H11V24.5L0 23Z M12.5 14H27V27L12.5 25Z" fill="#fff"/></svg>
<div class="a" style="left:65px;top:732px;width:32px;height:32px;background:#fff;border-radius:3px"></div>
<svg class="a" style="left:70px;top:738px" width="22" height="20" viewBox="0 0 22 20"><path d="M6 0L0 4L4.5 7.5L11 3.5Z M16 0L22 4L17.5 7.5L11 3.5Z M0 11L6 15L11 11L4.5 7.5Z M22 11L16 15L11 11L17.5 7.5Z M6 16.3L11 19.5L16 16.3L11 12.5Z" fill="#1081de"/></svg>
<svg class="a" style="left:127px;top:736px" width="32" height="28" viewBox="0 0 32 28"><rect x="1" y="1" width="30" height="20" fill="#3a8ad8" stroke="#a8d0f0"/><circle cx="8" cy="7" r="4" fill="none" stroke="#fff" stroke-width="1.5"/><path d="M8 3A4 4 0 0 1 12 7H8Z" fill="#f0a030"/><rect x="16" y="5" width="11" height="3" fill="#bfe0ff" stroke="#fff"/><rect x="16" y="12" width="11" height="3" fill="#bfe0ff" stroke="#fff"/><circle cx="6" cy="16" r="1" fill="#f0c040"/><circle cx="10" cy="16" r="1" fill="#fff"/><ellipse cx="17" cy="23" rx="8" ry="4.5" fill="#e0e0e0"/></svg>
<svg class="a" style="left:189px;top:733px" width="32" height="31" viewBox="0 0 32 31"><path d="M2 6Q16 -2 30 6Q31 18 18 24L16 31L14 24Q1 18 2 6Z" fill="#2a2a10"/><path d="M4 7Q10 3 16 3V22Q6 18 4 7Z" fill="#d8d0a0"/><path d="M16 3Q24 3 28 7Q27 17 16 22Z" fill="#f0e8b0"/><path d="M5 15Q16 20 27 15Q24 22 18 24L16 30L14 24Q8 22 5 15Z" fill="#7a1030"/></svg>
<div class="a" style="left:238px;top:729px;width:58px;height:39px;background:rgba(150,200,205,0.35);border:1px solid rgba(180,220,225,0.5)"></div>
<svg class="a" style="left:251px;top:733px" width="32" height="31" viewBox="0 0 32 31"><circle cx="9" cy="9" r="8" fill="#1aa6e8"/><circle cx="23" cy="22" r="8" fill="#1aa6e8"/><circle cx="16" cy="15.5" r="13" fill="#1aa6e8"/><text x="16" y="23" font-family="Liberation Sans" font-weight="bold" font-size="21" fill="#fff" text-anchor="middle">S</text></svg>
<div class="a" style="left:300px;top:729px;width:58px;height:39px;background:rgba(200,230,235,0.45);border:1px solid rgba(230,245,245,0.7)"></div>
<svg class="a" style="left:313px;top:732px" width="32" height="32" viewBox="0 0 32 32"><rect x="0" y="0" width="32" height="32" fill="#1d4f78"/><ellipse cx="11" cy="16" rx="6.5" ry="12" fill="none" stroke="#c8c8c8" stroke-width="2.2"/><ellipse cx="21" cy="16" rx="6.5" ry="12" fill="none" stroke="#c8c8c8" stroke-width="2.2"/><path d="M1 3H31M1 29H31M16 2V30" stroke="#c8c8c8" stroke-width="1.5"/></svg>
<svg class="a" style="left:1131px;top:747px" width="9" height="5" viewBox="0 0 9 5"><path d="M0 5L4.5 0L9 5Z" fill="#fff"/></svg>
<svg class="a" style="left:1152px;top:741px" width="16" height="16" viewBox="0 0 16 16"><path d="M1.5 1V16" stroke="#fff" stroke-width="1.5"/><path d="M2 1.5H9L10 3H15L13 8H9L8 7H2Z" fill="#fff"/></svg>
<svg class="a" style="left:1176px;top:741px" width="17" height="16" viewBox="0 0 17 16"><path d="M1 0V4M4 0V4M0 4H5V8H3.5V16H1.5V8H0Z" fill="#fff"/><path d="M1 0.5V4M4 0.5V4" stroke="#fff"/><rect x="7" y="2" width="9" height="13.5" fill="none" stroke="#fff" stroke-width="1.5"/><rect x="9.5" y="0.5" width="4" height="2" fill="#fff"/><rect x="9" y="4" width="5" height="10" fill="#fff" opacity="0.0"/></svg>
<svg class="a" style="left:1200px;top:741px" width="16" height="15" viewBox="0 0 16 15"><rect x="0" y="12" width="2.5" height="3" fill="#fff"/><rect x="3.3" y="10" width="2.5" height="5" fill="#fff"/><rect x="6.6" y="7" width="2.5" height="8" fill="#fff"/><rect x="9.9" y="4" width="2.5" height="11" fill="#fff"/><rect x="13.2" y="1" width="2.5" height="14" fill="#fff"/></svg>
<svg class="a" style="left:1224px;top:741px" width="16" height="16" viewBox="0 0 16 16"><path d="M0 5H3L8 0V16L3 11H0Z" fill="#fff"/><path d="M10 5Q12 8 10 11M12 3Q15 8 12 13" fill="none" stroke="#fff" stroke-width="1.3"/></svg>
<div class="t" style="left:1254px;top:743px;font-size:12px;color:#fff;transform:scaleX(0.88);transform-origin:left top">ENG</div>
<div class="t" style="left:1307px;top:735px;font-size:12px;color:#fff;transform:scaleX(0.9);transform-origin:left top">10:20</div>
<div class="t" style="left:1292px;top:751px;font-size:12px;color:#fff;transform:scaleX(0.92);transform-origin:left top">19.4.2015 г.</div>
</body></html>
